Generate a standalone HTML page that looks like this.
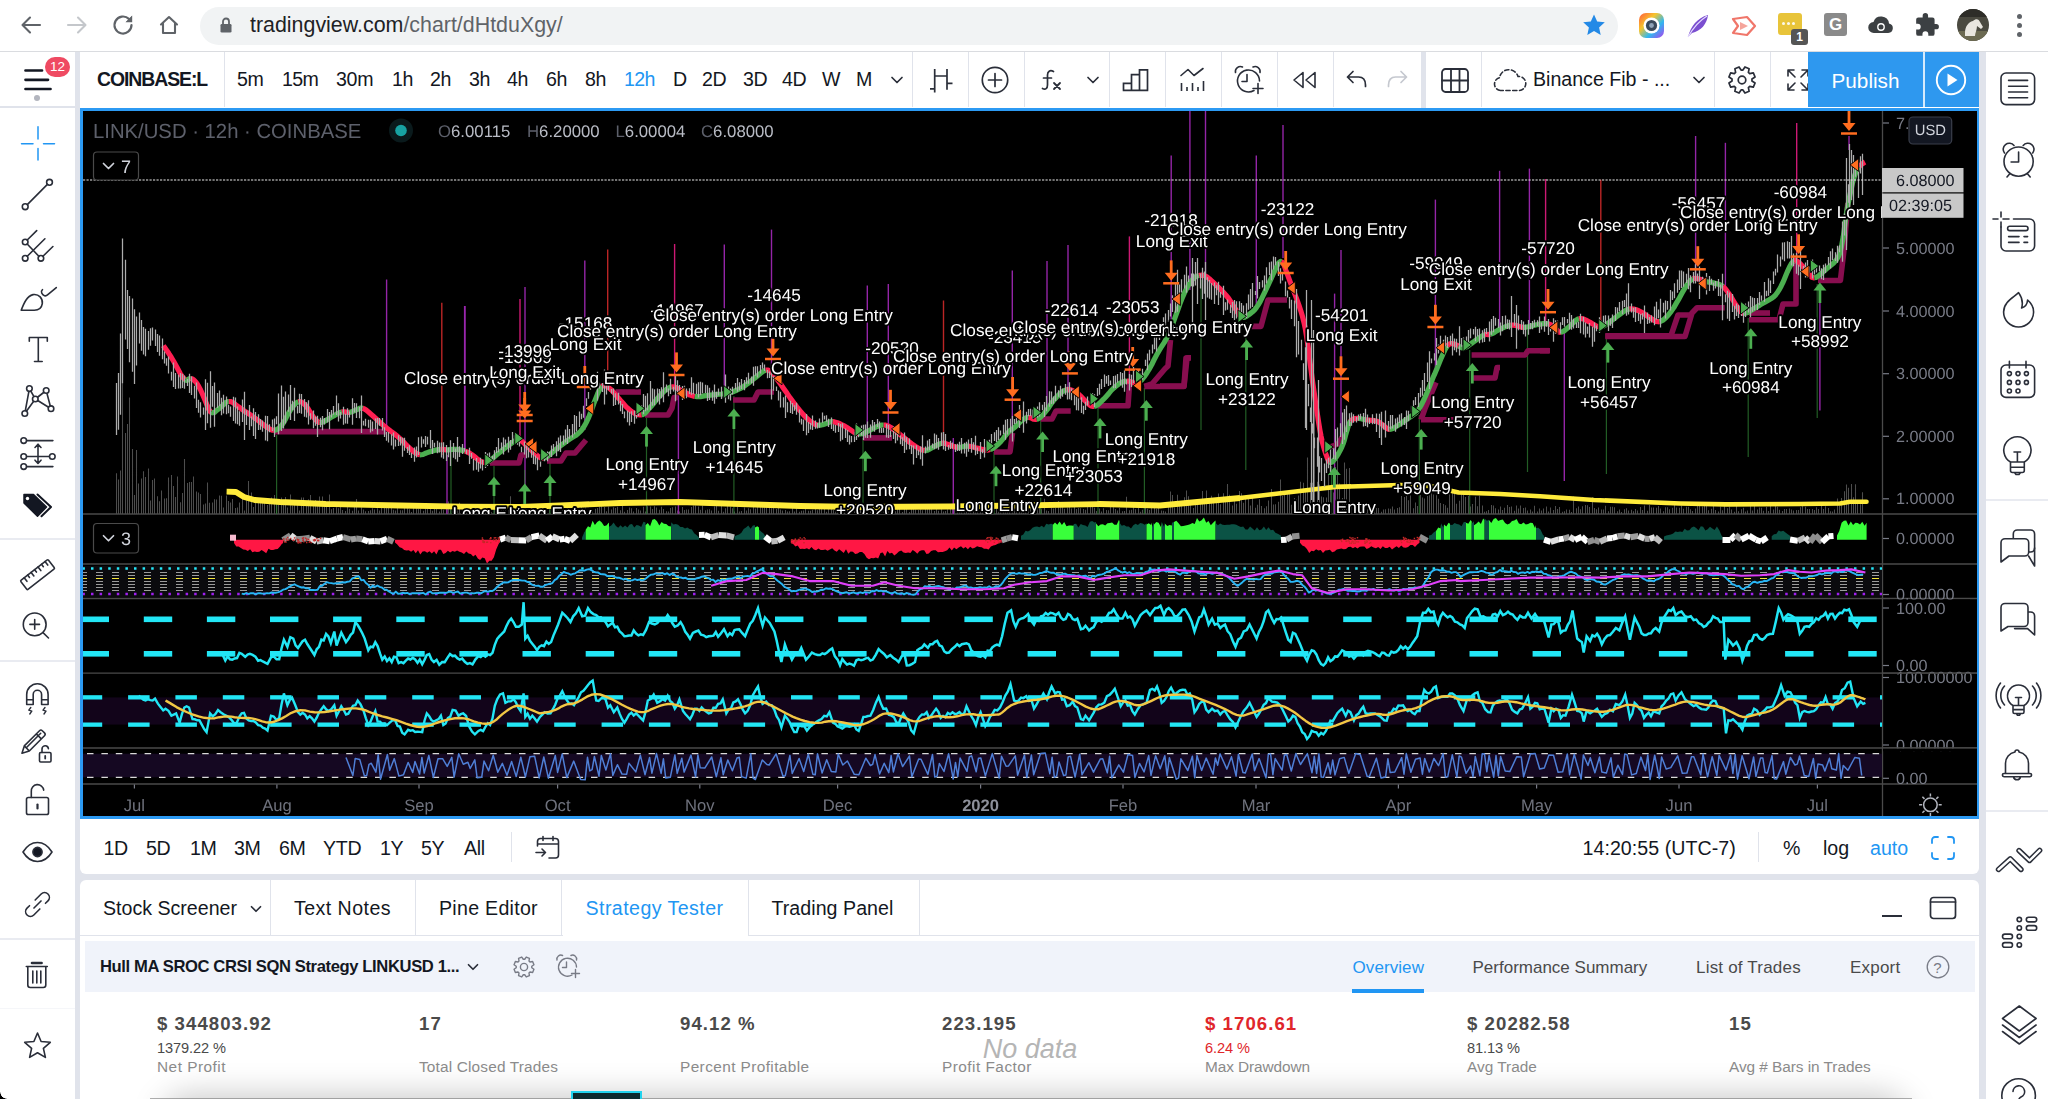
<!DOCTYPE html><html><head><meta charset="utf-8"><title>LINKUSD chart</title><style>

*{box-sizing:border-box;margin:0;padding:0}
html,body{width:2048px;height:1099px;overflow:hidden;background:#e0e3eb;font-family:"Liberation Sans",sans-serif;color:#131722}
.abs{position:absolute}
.t{position:absolute;white-space:nowrap;line-height:1}
#chrome{position:absolute;left:0;top:0;width:2048px;height:52px;background:#fff;border-bottom:1px solid #dadce0}
#url{position:absolute;left:200px;top:7px;width:1418px;height:38px;border-radius:19px;background:#f1f3f4}
#tvtop{position:absolute;left:80px;top:52px;width:1899px;height:56px;background:#fff}
#lefttop{position:absolute;left:0;top:52px;width:75px;height:55px;background:#fff;border-bottom:1px solid #e0e3eb}
#left{position:absolute;left:0;top:108px;width:75px;height:991px;background:#fff}
#right{position:absolute;left:1986px;top:52px;width:62px;height:1047px;background:#fff}
.vsep{position:absolute;top:52px;width:1px;height:55px;background:#e0e3eb}
.hsepL{position:absolute;left:0;width:75px;height:2px;background:#e9ebf1}
.hsepR{position:absolute;left:1986px;width:62px;height:2px;background:#e9ebf1}
#chartborder{position:absolute;left:80px;top:108px;width:1899px;height:711px;background:#2c9af3}
#chartbg{position:absolute;left:83px;top:111px;width:1894px;height:705px;background:#000}
#dates{position:absolute;left:80px;top:819px;width:1899px;height:55px;background:#fff;border-radius:0 0 6px 6px}
#tabs{position:absolute;left:80px;top:880px;width:1899px;height:56px;background:#fff;border-radius:6px 6px 0 0;border-bottom:1px solid #e0e3eb}
#stbody{position:absolute;left:80px;top:936px;width:1899px;height:163px;background:#fff}
#sthead{position:absolute;left:85px;top:941px;width:1890px;height:51px;background:#f0f3fa}
.tb{font-size:19.5px;color:#131722}

</style></head><body><div id="root" style="position:absolute;left:0;top:0;width:2048px;height:1099px;overflow:hidden">
<div id="chrome"><div id="url"></div></div>
<svg class="abs" style="left:19.0px;top:13.0px" width="24" height="24" viewBox="0 0 24 24" fill="none" stroke="#5f6368" stroke-width="2.1" stroke-linecap="round" stroke-linejoin="round"><path d="M21 12H4M11 4.5L3.5 12l7.5 7.5"/></svg>
<svg class="abs" style="left:65.0px;top:13.0px" width="24" height="24" viewBox="0 0 24 24" fill="none" stroke="#c4c7cb" stroke-width="2.1" stroke-linecap="round" stroke-linejoin="round"><path d="M3 12h17M13 4.5l7.5 7.5-7.5 7.5"/></svg>
<svg class="abs" style="left:111.0px;top:13.0px" width="24" height="24" viewBox="0 0 24 24" fill="none" stroke="#5f6368" stroke-width="2.2" stroke-linecap="round" stroke-linejoin="round"><path d="M20.5 12a8.5 8.5 0 1 1-2.6-6.1"/><path d="M21 3v6h-6" fill="#5f6368" stroke="none"/><path d="M21.2 2.5v6.7h-6.7z" fill="#5f6368" stroke="none"/></svg>
<svg class="abs" style="left:157.0px;top:13.0px" width="24" height="24" viewBox="0 0 24 24" fill="none" stroke="#5f6368" stroke-width="2.1" stroke-linecap="round" stroke-linejoin="round"><path d="M4 11.5L12 4l8 7.5M6 10.5V20h12v-9.5"/></svg>
<svg class="abs" style="left:218.0px;top:16.0px" width="16" height="18" viewBox="0 0 16 18" fill="none" stroke="#5f6368" stroke-width="1.6" stroke-linecap="round" stroke-linejoin="round"><rect x="2.5" y="8" width="11" height="8.5" rx="1.3" fill="#5f6368" stroke="none"/><path d="M5 8V5.5a3 3 0 0 1 6 0V8" stroke-width="1.8"/></svg>
<div class="t" style="left:250px;top:25.5px;font-size:21.4px;color:#131722;font-weight:400;transform:translate(0,-50%);"><span style="color:#202124">tradingview.com</span><span style="color:#5f6368">/chart/dHtduXgy/</span></div>
<svg class="abs" style="left:1581.0px;top:12.0px" width="26" height="26" viewBox="0 0 26 26" fill="none" stroke="#2a2e39" stroke-width="1.6" stroke-linecap="round" stroke-linejoin="round"><path d="M13 2.5l3.2 7 7.6.8-5.7 5.1 1.6 7.5L13 19l-6.7 3.9 1.6-7.5L2.2 10.3l7.6-.8z" fill="#2389e6" stroke="none"/></svg>
<svg class="abs" style="left:1638px;top:12px" width="27" height="27" viewBox="0 0 27 27"><defs><linearGradient id="g1" x1="0" y1="0" x2="1" y2="1"><stop offset="0" stop-color="#ff5a3c"/><stop offset=".35" stop-color="#f7c52d"/><stop offset=".65" stop-color="#30b8f0"/><stop offset="1" stop-color="#b03cf0"/></linearGradient></defs><rect x="1" y="1" width="25" height="25" rx="7" fill="url(#g1)"/><circle cx="13.5" cy="13.5" r="8" fill="#fff"/><circle cx="13.5" cy="13.5" r="5.6" fill="#3a4a5c"/><circle cx="13.5" cy="13.5" r="2.4" fill="#8fa3b8"/></svg>
<svg class="abs" style="left:1685px;top:12px" width="26" height="28" viewBox="0 0 26 28"><path d="M3 25C6 14 12 6 23 3c-1 9-7 16-16 18z" fill="#7b4fd0"/><path d="M3 25C8 16 14 9 22 4" stroke="#e6dcff" stroke-width="1.2" fill="none"/></svg>
<svg class="abs" style="left:1729px;top:13px" width="28" height="26" viewBox="0 0 28 26"><path d="M4 6l14-2 8 9-8 9-14-2 5-7z" fill="none" stroke="#f0766a" stroke-width="2.2" stroke-linejoin="round"/><path d="M11 9l8 4-8 4z" fill="#f5a59b"/></svg>
<div class="abs" style="left:1778px;top:13px;width:24px;height:22px;background:#e8c43a;border-radius:3px"></div>
<div class="abs" style="left:1782px;top:22px;width:3px;height:3px;background:#fff;border-radius:50%;box-shadow:5px 0 0 #fff,10px 0 0 #fff;opacity:.9"></div>
<div class="abs" style="left:1791px;top:29px;width:17px;height:16px;background:#555;border-radius:3px;color:#fff;font-size:12px;font-weight:700;text-align:center;line-height:16px">1</div>
<div class="abs" style="left:1824px;top:13px;width:23px;height:23px;background:#8a8a8a;border-radius:3px;color:#fff;font-size:17px;font-weight:700;text-align:center;line-height:23px">G</div>
<svg class="abs" style="left:1867px;top:14px" width="28" height="22" viewBox="0 0 28 22"><path d="M7 19a5.5 5.5 0 0 1-.5-11A8 8 0 0 1 22 9.5a4.8 4.8 0 0 1-.8 9.5z" fill="#3c4043"/><circle cx="14" cy="13" r="3.2" fill="none" stroke="#fff" stroke-width="1.4"/></svg>
<svg class="abs" style="left:1914px;top:12px" width="26" height="26" viewBox="0 0 24 24"><path d="M20.5 11H19V7a2 2 0 0 0-2-2h-4V3.5a2.5 2.5 0 0 0-5 0V5H4a2 2 0 0 0-2 2v3.8h1.5a2.7 2.7 0 0 1 0 5.4H2V20a2 2 0 0 0 2 2h3.8v-1.5a2.7 2.7 0 0 1 5.4 0V22H17a2 2 0 0 0 2-2v-4h1.5a2.5 2.5 0 0 0 0-5z" fill="#3c4043"/></svg>
<svg class="abs" style="left:1957px;top:9px" width="32" height="32" viewBox="0 0 32 32"><defs><clipPath id="av"><circle cx="16" cy="16" r="16"/></clipPath></defs><g clip-path="url(#av)"><rect width="32" height="32" fill="#4b4a40"/><rect y="22" width="32" height="10" fill="#6c6a52"/><path d="M8 24c0-6 3-11 8-12 3-3 6-2 7 1l3 5-2 2-4-3c0 4-2 7-2 10H8z" fill="#e9e6df"/><rect y="0" width="32" height="8" fill="#2e2d28"/></g></svg>
<div class="abs" style="left:2016.5px;top:14px;width:5px;height:5px;border-radius:50%;background:#5f6368"></div><div class="abs" style="left:2016.5px;top:23px;width:5px;height:5px;border-radius:50%;background:#5f6368"></div><div class="abs" style="left:2016.5px;top:32px;width:5px;height:5px;border-radius:50%;background:#5f6368"></div>
<div id="lefttop"></div><div id="tvtop"></div>
<svg class="abs" style="left:21.0px;top:67.0px" width="32" height="26" viewBox="0 0 32 26" fill="none" stroke="#131722" stroke-width="1.6" stroke-linecap="round" stroke-linejoin="round"><path d="M4.500 3.500H21M4.500 12.800H27M4.500 22H29.500" stroke-width="2.700"/></svg>
<div class="abs" style="left:34px;top:95px;width:6px;height:6px;border-radius:50%;background:#b2b5be"></div>
<div class="abs" style="left:45px;top:57px;width:25px;height:20px;border-radius:10px;background:#ef4a62;color:#fff;font-size:13.5px;text-align:center;line-height:20px">12</div>
<div class="t" style="left:97px;top:80px;font-size:19.4px;color:#131722;font-weight:700;letter-spacing:-1.05px;transform:translate(0,-50%);">COINBASE:L</div>
<div class="vsep" style="left:224.0px"></div>
<div class="vsep" style="left:911.5px"></div>
<div class="vsep" style="left:967.5px"></div>
<div class="vsep" style="left:1023.5px"></div>
<div class="vsep" style="left:1108.5px"></div>
<div class="vsep" style="left:1164.5px"></div>
<div class="vsep" style="left:1220.5px"></div>
<div class="vsep" style="left:1276.5px"></div>
<div class="vsep" style="left:1332.5px"></div>
<div class="vsep" style="left:1481.0px"></div>
<div class="vsep" style="left:1714.0px"></div>
<div class="vsep" style="left:1769.8px"></div>
<div class="abs" style="left:1421px;top:52px;width:5px;height:56px;background:#e0e3eb"></div>
<div class="t" style="left:237px;top:80px;font-size:19.6px;color:#131722;font-weight:400;letter-spacing:-0.3px;transform:translate(0,-50%);">5m</div>
<div class="t" style="left:282px;top:80px;font-size:19.6px;color:#131722;font-weight:400;letter-spacing:-0.6px;transform:translate(0,-50%);">15m</div>
<div class="t" style="left:336px;top:80px;font-size:19.6px;color:#131722;font-weight:400;letter-spacing:-0.3px;transform:translate(0,-50%);">30m</div>
<div class="t" style="left:392px;top:80px;font-size:19.6px;color:#131722;font-weight:400;letter-spacing:-0.3px;transform:translate(0,-50%);">1h</div>
<div class="t" style="left:430px;top:80px;font-size:19.6px;color:#131722;font-weight:400;letter-spacing:-0.3px;transform:translate(0,-50%);">2h</div>
<div class="t" style="left:469px;top:80px;font-size:19.6px;color:#131722;font-weight:400;letter-spacing:-0.3px;transform:translate(0,-50%);">3h</div>
<div class="t" style="left:507px;top:80px;font-size:19.6px;color:#131722;font-weight:400;letter-spacing:-0.3px;transform:translate(0,-50%);">4h</div>
<div class="t" style="left:546px;top:80px;font-size:19.6px;color:#131722;font-weight:400;letter-spacing:-0.3px;transform:translate(0,-50%);">6h</div>
<div class="t" style="left:585px;top:80px;font-size:19.6px;color:#131722;font-weight:400;letter-spacing:-0.3px;transform:translate(0,-50%);">8h</div>
<div class="t" style="left:624px;top:80px;font-size:19.6px;color:#2196f3;font-weight:400;letter-spacing:-0.6px;transform:translate(0,-50%);">12h</div>
<div class="t" style="left:673px;top:80px;font-size:19.6px;color:#131722;font-weight:400;letter-spacing:-0.3px;transform:translate(0,-50%);">D</div>
<div class="t" style="left:702px;top:80px;font-size:19.6px;color:#131722;font-weight:400;letter-spacing:-0.3px;transform:translate(0,-50%);">2D</div>
<div class="t" style="left:743px;top:80px;font-size:19.6px;color:#131722;font-weight:400;letter-spacing:-0.3px;transform:translate(0,-50%);">3D</div>
<div class="t" style="left:782px;top:80px;font-size:19.6px;color:#131722;font-weight:400;letter-spacing:-0.3px;transform:translate(0,-50%);">4D</div>
<div class="t" style="left:822px;top:80px;font-size:19.6px;color:#131722;font-weight:400;letter-spacing:-0.3px;transform:translate(0,-50%);">W</div>
<div class="t" style="left:856px;top:80px;font-size:19.6px;color:#131722;font-weight:400;letter-spacing:-0.3px;transform:translate(0,-50%);">M</div>
<svg class="abs" style="left:887.0px;top:73.0px" width="20" height="14" viewBox="0 0 20 14" fill="none" stroke="#2a2e39" stroke-width="1.7" stroke-linecap="round" stroke-linejoin="round"><path d="M5 4.5L10 9.5L15 4.5"/></svg>
<svg class="abs" style="left:925px;top:64px" width="34" height="34" viewBox="925 64 34 34" fill="none" stroke="#2a2e39" stroke-width="1.700"><path d="M934.700 69V92.500M930 88.900H934.700M934.700 76H947M947 69V89.700M947 83.400H952.500"/></svg>
<svg class="abs" style="left:980.0px;top:65.0px" width="30" height="30" viewBox="0 0 30 30" fill="none" stroke="#2a2e39" stroke-width="1.7" stroke-linecap="round" stroke-linejoin="round"><circle cx="15" cy="15" r="12.7"/><path d="M15 8.5v13M8.5 15h13"/></svg>
<svg class="abs" style="left:1036.0px;top:65.0px" width="30" height="30" viewBox="0 0 30 30" fill="none" stroke="#2a2e39" stroke-width="1.7" stroke-linecap="round" stroke-linejoin="round"><path d="M17.5 6.5c-3.5-2-6 0-6 3.5v10c0 3.5-2 5-5 3.5M7.5 13h8"/><path d="M18 18l6 6M24 18l-6 6" stroke-width="1.8"/></svg>
<svg class="abs" style="left:1083.3px;top:73.0px" width="20" height="14" viewBox="0 0 20 14" fill="none" stroke="#2a2e39" stroke-width="1.7" stroke-linecap="round" stroke-linejoin="round"><path d="M5 4.5L10 9.5L15 4.5"/></svg>
<svg class="abs" style="left:1118px;top:64px" width="36" height="32" viewBox="1118 64 36 32" fill="none" stroke="#2a2e39" stroke-width="1.700" stroke-linejoin="miter"><path d="M1123.500 90.300V83.300H1131.500V90.300M1131.500 83.300V74.700H1139.500V90.300M1139.500 74.700V69.800H1147.500V90.300M1122.700 90.300H1148.300"/></svg>
<svg class="abs" style="left:1178.0px;top:66.0px" width="30" height="28" viewBox="0 0 30 28" fill="none" stroke="#2a2e39" stroke-width="1.6" stroke-linecap="round" stroke-linejoin="round"><path d="M3 9.5l7-6 6 6 9-7"/><path d="M3.5 17v8M9 21v4M14.5 17v8M20 21v4M25.5 15v10" stroke-linecap="butt"/></svg>
<svg class="abs" style="left:1231.0px;top:64.0px" width="34" height="32" viewBox="0 0 34 32" fill="none" stroke="#2a2e39" stroke-width="1.6" stroke-linecap="round" stroke-linejoin="round"><path d="M23 26.5a11 11 0 1 1 5.5-9.5"/><path d="M16 10.5v7h-5"/><path d="M4.5 8.5a5 5 0 0 1 7-5.5M29 8.5a5 5 0 0 0-7-5.5"/><path d="M27 19.500v10M22 24.5h10"/></svg>
<svg class="abs" style="left:1291.0px;top:69.0px" width="28" height="22" viewBox="0 0 28 22" fill="none" stroke="#2a2e39" stroke-width="1.6" stroke-linecap="round" stroke-linejoin="round"><path d="M12 3.5L3 11l9 7.500zM24 3.5L15 11l9 7.500z"/></svg>
<svg class="abs" style="left:1345.0px;top:69.0px" width="24" height="20" viewBox="0 0 24 20" fill="none" stroke="#2a2e39" stroke-width="1.7" stroke-linecap="round" stroke-linejoin="round"><path d="M8 2.5L2.500 8l5.500 5.500M2.500 8h11c4.500 0 7 3 7 8v1.500"/></svg>
<svg class="abs" style="left:1385.0px;top:69.0px" width="24" height="20" viewBox="0 0 24 20" fill="none" stroke="#c5c8cf" stroke-width="1.7" stroke-linecap="round" stroke-linejoin="round"><path d="M16 2.5L21.500 8l-5.500 5.500M21.500 8h-11c-4.500 0-7 3-7 8v1.500"/></svg>
<svg class="abs" style="left:1439.5px;top:66.5px" width="30" height="27" viewBox="0 0 30 27" fill="none" stroke="#2a2e39" stroke-width="1.8" stroke-linecap="round" stroke-linejoin="round"><rect x="2" y="2" width="26" height="23" rx="3.5"/><path d="M2 13.500h26M11 2v23M19.500 2v23"/></svg>
<svg class="abs" style="left:1491.0px;top:67.0px" width="38" height="26" viewBox="0 0 38 26" fill="none" stroke="#2a2e39" stroke-width="1.6" stroke-linecap="round" stroke-linejoin="round"><path d="M9.500 23.500a6.500 6.500 0 0 1-1-12.800A9.500 9.500 0 0 1 27 9.500a7 7 0 0 1 1.500 14z" stroke-dasharray="4.200 2.600"/></svg>
<div class="t" style="left:1533px;top:80px;font-size:19.6px;color:#131722;font-weight:400;transform:translate(0,-50%);">Binance Fib - ...</div>
<svg class="abs" style="left:1689.0px;top:73.0px" width="20" height="14" viewBox="0 0 20 14" fill="none" stroke="#2a2e39" stroke-width="1.7" stroke-linecap="round" stroke-linejoin="round"><path d="M5 4.5L10 9.5L15 4.5"/></svg>
<svg class="abs" style="left:1727.2px;top:65.0px" width="30" height="30" viewBox="0 0 30 30" fill="none" stroke="#2a2e39" stroke-width="1.7" stroke-linecap="round" stroke-linejoin="round"><circle cx="15" cy="15" r="3.800"/><path d="M28.07 17.96L26.33 22.15L22.70 21.39L21.39 22.70L22.15 26.33L17.96 28.07L15.93 24.96L14.07 24.96L12.04 28.07L7.85 26.33L8.61 22.70L7.30 21.39L3.67 22.15L1.93 17.96L5.04 15.93L5.04 14.07L1.93 12.04L3.67 7.85L7.30 8.61L8.61 7.30L7.85 3.67L12.04 1.93L14.07 5.04L15.93 5.04L17.96 1.93L22.15 3.67L21.39 7.30L22.70 8.61L26.33 7.85L28.07 12.04L24.96 14.07L24.96 15.93Z" stroke-linejoin="round"/></svg>
<svg class="abs" style="left:1784.5px;top:67.0px" width="26" height="26" viewBox="0 0 26 26" fill="none" stroke="#2a2e39" stroke-width="1.6" stroke-linecap="round" stroke-linejoin="round"><path d="M3 9V3h6M3 3l7 7M17 3h6v6M23 3l-7 7M3 17v6h6M3 23l7-7M23 17v6h-6M23 23l-7-7"/></svg>
<div class="abs" style="left:1808px;top:52px;width:171px;height:55px;background:#2e98ef"></div>
<div class="abs" style="left:1923px;top:52px;width:1.5px;height:55px;background:#d5eafc"></div>
<div class="t" style="left:1865.5px;top:80.5px;font-size:20.7px;color:#fff;font-weight:400;transform:translate(-50%,-50%);">Publish</div>
<svg class="abs" style="left:1934.0px;top:62.5px" width="34" height="34" viewBox="0 0 34 34" fill="none" stroke="#fff" stroke-width="1.6" stroke-linecap="round" stroke-linejoin="round"><circle cx="17" cy="17" r="14.2" stroke-width="1.9"/><path d="M13.500 10.500v13l10-6.500z" fill="#fff" stroke="none"/></svg>
<div id="left"></div>
<div class="hsepL" style="top:538px"></div>
<div class="hsepL" style="top:660px"></div>
<div class="hsepL" style="top:938px"></div>
<div class="hsepL" style="top:1008px;height:1px;background:#f5f6f9"></div>
<svg class="abs" style="left:0;top:108px" width="75" height="991" viewBox="0 108 75 991"><g fill="none" stroke="#2196f3" stroke-width="1.5" stroke-linecap="round" stroke-linejoin="round"><path d="M21.500 143.700H33M43.500 143.700H54.500M38 126.800V139M38 148.500V160"/></g><g fill="none" stroke="#2a2e39" stroke-width="1.6" stroke-linecap="round" stroke-linejoin="round"><circle cx="25.200" cy="206.700" r="2.900"/><circle cx="49.500" cy="182.300" r="2.900"/><path d="M27.300 204.600L47.400 184.400"/></g><g fill="none" stroke="#2a2e39" stroke-width="1.6" stroke-linecap="round" stroke-linejoin="round"><circle cx="25.200" cy="242" r="2.800"/><circle cx="25.200" cy="258.300" r="2.800"/><circle cx="40.900" cy="258.300" r="2.800"/><path d="M27.200 240L36.700 230.600M27.200 244L38.900 256.300M27.200 256.300L44.900 238.800M42.900 256.300L52.900 246.500"/></g><g fill="none" stroke="#2a2e39" stroke-width="1.6" stroke-linecap="round" stroke-linejoin="round"><path d="M21.200 310.200C24 303 27 296 33 294.600c6-1 10 4 9.300 9-0.700 4.500-4 6.600-8 6.600z"/><path d="M42.500 289.700c-2.300 1.800-.5 5.200 2 6 1.300.400 2.400-.200 3.300-1L56.300 287.600"/></g><g fill="none" stroke="#2a2e39" stroke-width="1.6" stroke-linecap="round" stroke-linejoin="round"><path d="M29.300 341.200V337.500H47.300V341.200M38.300 337.500V361.500M34.500 361.500H42.200"/></g><g fill="none" stroke="#2a2e39" stroke-width="1.6" stroke-linecap="round" stroke-linejoin="round"><path d="M29.4 388.6L24.8 413.5M29.4 388.6L35.3 399M35.3 399L24.8 413.5M35.3 399L46.2 390.5M46.2 390.5L51 408.7M35.3 399L51 408.7"/><circle cx="29.4" cy="388.6" r="2.800" fill="#fff"/><circle cx="46.2" cy="390.5" r="2.800" fill="#fff"/><circle cx="35.3" cy="399" r="2.800" fill="#fff"/><circle cx="51" cy="408.7" r="2.800" fill="#fff"/><circle cx="24.8" cy="413.5" r="2.800" fill="#fff"/></g><g fill="none" stroke="#2a2e39" stroke-width="1.6" stroke-linecap="round" stroke-linejoin="round"><path d="M26.500 440.600H52.900M26.500 456.500H49.500M26.500 466.600H52.900M38 445V462.500M35 447.500L38 444.200L41 447.500M35 460.200L38 463.500L41 460.200"/><circle cx="23.700" cy="440.600" r="2.800" fill="#fff"/><circle cx="23.700" cy="456.500" r="2.800" fill="#fff"/><circle cx="23.700" cy="466.600" r="2.800" fill="#fff"/><circle cx="52.300" cy="456.500" r="2.800" fill="#fff"/></g><path d="M24 494.500h9.500l13 12.500-9 9.200-13.500-13.200z" fill="#131722" stroke="#131722" stroke-width="1.500" stroke-linejoin="round"/><circle cx="27.500" cy="498.500" r="1.700" fill="#fff"/><path d="M37.500 494.500l13.500 12.500-9.500 9.200" fill="none" stroke="#131722" stroke-width="2" stroke-linejoin="round" stroke-linecap="round"/><g fill="none" stroke="#2a2e39" stroke-width="1.6" stroke-linecap="round" stroke-linejoin="round"><g transform="rotate(-38 37.400 574.600)"><rect x="20" y="569" width="35" height="11.500" rx="1.200"/><path d="M25 569v4.500M29.400 569v3M33.800 569v4.500M38.200 569v3M42.600 569v4.500M47 569v3M51.400 569v4.500"/></g></g><g fill="none" stroke="#2a2e39" stroke-width="1.6" stroke-linecap="round" stroke-linejoin="round"><circle cx="34.700" cy="624.400" r="11.400"/><path d="M34.700 619.600v9.600M29.900 624.400h9.600M43 632.700l5.500 5.300"/></g><g fill="none" stroke="#2a2e39" stroke-width="1.6" stroke-linecap="round" stroke-linejoin="round"><path d="M26.700 704.500v-10a10.700 10.700 0 0 1 21.400 0v10h-6.500v-10a4.200 4.200 0 0 0-8.400 0v10zM26.700 699.800h6.500M41.600 699.800h6.500"/><path d="M30.800 707.500l-2 2.700 3 1-2 2.800M45 707.500l-2 2.700 3 1-2 2.800" stroke-width="1.400"/></g><g fill="none" stroke="#2a2e39" stroke-width="1.6" stroke-linecap="round" stroke-linejoin="round"><path d="M22 753.200l2.300-7.300 15.200-15.200a2 2 0 0 1 2.800 0l2.200 2.200a2 2 0 0 1 0 2.800L29.300 751zM24.300 745.900l5 5.100M36.300 733.900l5 5M27 747l13.700-13.700"/><rect x="39.500" y="752.500" width="11.500" height="9.500" rx="1.200" fill="#fff"/><path d="M42 752.500v-3.200a3.200 3.200 0 0 1 6.400-0.600"/><path d="M45.200 756v2.500" stroke-width="1.800"/></g><g fill="none" stroke="#2a2e39" stroke-width="1.6" stroke-linecap="round" stroke-linejoin="round"><rect x="26.500" y="797.500" width="22" height="17" rx="1.800"/><path d="M31.300 797.500v-6a6.200 6.200 0 0 1 12.400-1.300"/><path d="M37.500 804.500v4" stroke-width="2.200"/></g><g fill="none" stroke="#2a2e39" stroke-width="1.6" stroke-linecap="round" stroke-linejoin="round"><path d="M23 852c4-6.500 9-9.500 14.500-9.500s10.500 3 14.500 9.500c-4 6.500-9 9.500-14.500 9.500s-10.500-3-14.500-9.500z"/><circle cx="37.500" cy="852" r="4.600" fill="#131722"/></g><g fill="none" stroke="#2a2e39" stroke-width="1.6" stroke-linecap="round" stroke-linejoin="round"><g transform="translate(37.500 904.500) rotate(-45)"><path d="M1.500 -4.800H10a4.800 4.800 0 0 1 0 9.600H6.500M-1.500 4.800H-10a4.800 4.800 0 0 1 0-9.600H-6.500M-5 0H5"/></g></g><g fill="none" stroke="#2a2e39" stroke-width="1.6" stroke-linecap="round" stroke-linejoin="round"><path d="M27.800 966.500h18v18.500a2.500 2.500 0 0 1-2.500 2.500h-13a2.500 2.500 0 0 1-2.500-2.500zM26.300 966.500h21M32.800 971v12M36.800 971v12M40.800 971v12"/><path d="M32 963h9.600" stroke-width="2.600"/></g><g fill="none" stroke="#2a2e39" stroke-width="1.6" stroke-linecap="round" stroke-linejoin="round"><path d="M37.5 1033.0L41.1 1041.5L50.3 1042.3L43.4 1048.4L45.4 1057.4L37.5 1052.7L29.6 1057.4L31.6 1048.4L24.7 1042.3L33.9 1041.5Z"/></g></svg>
<div id="right"></div>
<div class="hsepR" style="top:499px"></div>
<div class="hsepR" style="top:810px"></div>
<svg class="abs" style="left:1986px;top:52px" width="62" height="1047" viewBox="1986 52 62 1047"><g fill="none" stroke="#2a2e39" stroke-width="1.6" stroke-linecap="round" stroke-linejoin="round"><rect x="2001" y="73" width="33.600" height="31.600" rx="5"/><path d="M2008.600 80.400h19M2008.600 86.200h19M2008.600 92h19M2008.600 97.800h19"/></g><g fill="none" stroke="#2a2e39" stroke-width="1.6" stroke-linecap="round" stroke-linejoin="round"><circle cx="2018.600" cy="161.600" r="14.600"/><path d="M2018.600 152v10h-7.500"/><path d="M2004.500 153a6 6 0 0 1 9.500-7.500M2032.700 153a6 6 0 0 0-9.500-7.500M2010 173.500l-3 3.500M2027.200 173.500l3 3.500"/></g><g fill="none" stroke="#2a2e39" stroke-width="1.6" stroke-linecap="round" stroke-linejoin="round"><path d="M2013.500 219h16.100a5 5 0 0 1 5 5v22a5 5 0 0 1-5 5h-23.600a5 5 0 0 1-5-5v-19"/><path d="M1993 219h5M2003 219h6M2001 212v5M2001 222v5"/><rect x="2007.600" y="226.200" width="20.400" height="4.400" rx="2.200"/><path d="M2008.600 236.600h10.400M2024 236.600h3.600M2008.600 242.400h10.400M2024 242.400h3.600"/></g><g fill="none" stroke="#2a2e39" stroke-width="1.6" stroke-linecap="round" stroke-linejoin="round"><path d="M2018.600 292.600c-5 5-15 9-15 19.400a15 15 0 0 0 30 0c0-4.500-2-8.500-6-12-0.300 4-2.500 7-6 8 1.500-5 0.500-10.500-3-15.400z"/></g><g fill="none" stroke="#2a2e39" stroke-width="1.6" stroke-linecap="round" stroke-linejoin="round"><rect x="2001" y="365" width="33.600" height="32.400" rx="5"/><path d="M2009.400 361.400v6.600M2026 361.400v6.600"/><circle cx="2009.4" cy="373.6" r="2"/><circle cx="2018" cy="373.6" r="2"/><circle cx="2026.4" cy="373.6" r="2"/><circle cx="2009.4" cy="382.4" r="2"/><circle cx="2018" cy="382.4" r="2"/><circle cx="2026.4" cy="382.4" r="2"/><circle cx="2009.4" cy="391" r="2"/><circle cx="2018" cy="391" r="2"/></g><g fill="none" stroke="#2a2e39" stroke-width="1.6" stroke-linecap="round" stroke-linejoin="round"><path d="M2010.500 462a13.600 13.600 0 1 1 13.800 0v8.500a2 2 0 0 1-2 2h-9.800a2 2 0 0 1-2-2zM2010.500 462h13.800M2010.500 467.300h13.800M2014.500 472.500l1.500 2h3l1.500-2M2014 452h6.600M2017.400 452v10"/></g><g fill="none" stroke="#2a2e39" stroke-width="1.6" stroke-linecap="round" stroke-linejoin="round"><path d="M2013.300 538.500v-4.500a4 4 0 0 1 4-4h13.300a4 4 0 0 1 4 4v14a4 4 0 0 1-4 4h-2"/><path d="M2028.600 556l6 10v-18"/><path d="M2001 562v-19.300a4 4 0 0 1 4-4h19.700a4 4 0 0 1 4 4v9.300a4 4 0 0 1-4 4h-15.700z" fill="#fff"/></g><g fill="none" stroke="#2a2e39" stroke-width="1.6" stroke-linecap="round" stroke-linejoin="round"><path d="M2028 612h2.600a4 4 0 0 1 4 4v19l-7-6.400h-13"/><path d="M2001 631v-23.500a4 4 0 0 1 4-4h19a4 4 0 0 1 4 4v15a4 4 0 0 1-4 4h-16z" fill="#fff"/></g><g fill="none" stroke="#2a2e39" stroke-width="1.6" stroke-linecap="round" stroke-linejoin="round"><path d="M2013 705.500a11 11 0 1 1 11 0v6.500a1.500 1.500 0 0 1-1.500 1.500h-8a1.500 1.500 0 0 1-1.500-1.500zM2013 705.500h11M2013 709.600h11M2016.500 713.500l1 1.800h2l1-1.800M2015.500 697.500h6M2018.500 697.500v8"/><path d="M2004.500 686a14 14 0 0 0 0 19M2000.500 683a20 20 0 0 0 0 25M2032.500 686a14 14 0 0 1 0 19M2036.500 683a20 20 0 0 1 0 25"/></g><g fill="none" stroke="#2a2e39" stroke-width="1.6" stroke-linecap="round" stroke-linejoin="round"><path d="M2005.500 773.500v-10a11.500 11.500 0 0 1 9.500-11.500 2 2 0 0 1 4 0 11.500 11.500 0 0 1 9.500 11.500v10M2004 773.500h26a1.600 1.600 0 0 1 0 3.200h-26a1.600 1.600 0 0 1 0-3.200zM2013.500 777a3.600 3.600 0 0 0 7 0"/></g><g fill="none" stroke-linecap="round" stroke-linejoin="round"><path d="M1998.500 869.500l11.800-10.700 10.700 10.700M2019 850.500l10.500 10 10.200-10.200" stroke="#2a2e39" stroke-width="5.400"/><path d="M1998.500 869.500l11.800-10.700 10.700 10.700M2019 850.500l10.500 10 10.200-10.200" stroke="#fff" stroke-width="2.400"/></g><g fill="none" stroke="#2a2e39" stroke-width="1.6" stroke-linecap="round" stroke-linejoin="round"><circle cx="2019.300" cy="919.6" r="2.200"/><circle cx="2019.300" cy="927.9" r="2.200"/><circle cx="2019.300" cy="936.4" r="2.200"/><circle cx="2019.300" cy="944.9" r="2.200"/><rect x="2026.300" y="917.3000000000001" width="10.400" height="4.600" rx="2.300"/><rect x="2026.300" y="925.6" width="10.400" height="4.600" rx="2.300"/><rect x="2002.500" y="934.1" width="10" height="4.600" rx="2.300"/><rect x="2002.500" y="942.6" width="10" height="4.600" rx="2.300"/></g><g fill="none" stroke="#2a2e39" stroke-width="1.6" stroke-linecap="round" stroke-linejoin="round"><path d="M2019.300 1006l16.800 12.500-16.800 12.500-16.800-12.500zM2002.500 1025l16.800 12.500 16.800-12.500M2002.500 1031.500l16.800 12.500 16.800-12.500"/></g><g fill="none" stroke="#2a2e39" stroke-width="1.6" stroke-linecap="round" stroke-linejoin="round"><circle cx="2018.600" cy="1095.500" r="16.800"/><path d="M2013 1091.500a5.800 5.800 0 1 1 8 5.500c-1.800 1-2.400 2-2.400 4"/></g></svg>
<div id="chartborder"></div><div id="chartbg"></div>
<svg class="abs" style="left:80px;top:108px;will-change:transform" width="1899" height="711" viewBox="80 108 1899 711" font-family="'Liberation Sans', sans-serif" text-rendering="geometricPrecision">
<defs><clipPath id="cpMain"><rect x="83" y="111" width="1799" height="403"/></clipPath><clipPath id="cpAxis"><rect x="1883" y="111" width="94" height="673"/></clipPath></defs>
<path d="M83 514H1977" stroke="#4a4a4a" stroke-width="1.300"/>
<path d="M83 564H1977" stroke="#4a4a4a" stroke-width="1.300"/>
<path d="M83 598.5H1977" stroke="#4a4a4a" stroke-width="1.300"/>
<path d="M83 673.2H1977" stroke="#4a4a4a" stroke-width="1.300"/>
<path d="M83 748H1977" stroke="#4a4a4a" stroke-width="1.300"/>
<path d="M83 784H1977" stroke="#4a4a4a" stroke-width="1.300"/>
<path d="M1882.500 111V816" stroke="#4a4a4a" stroke-width="1.300"/>
<g clip-path="url(#cpMain)">
<path d="M116.5 514V473.2M118.5 514V479.6M120.5 514V470.6M122.5 514V366.5M125.5 514V433.0M127.5 514V424.0M129.5 514V397.4M132.5 514V448.9M134.5 514V495.0M136.5 514V449.9M138.5 514V483.6M141.5 514V478.5M143.5 514V471.3M145.5 514V477.1M148.5 514V468.6M150.5 514V500.5M152.5 514V479.9M154.5 514V478.4M157.5 514V496.3M159.5 514V501.3M161.5 514V490.4M164.5 514V498.5M166.5 514V498.3M168.5 514V477.5M171.5 514V475.1M173.5 514V486.1M175.5 514V497.1M177.5 514V476.5M180.5 514V502.2M182.5 514V493.1M184.5 514V458.9M187.5 514V483.0M189.5 514V482.1M191.5 514V481.9M193.5 514V476.5M196.5 514V491.5M198.5 514V492.5M200.5 514V494.1M203.5 514V504.4M205.5 514V503.5M207.5 514V482.5M209.5 514V502.8M212.5 514V502.5M214.5 514V499.3M216.5 514V499.5M219.5 514V495.6M221.5 514V495.8M223.5 514V507.6M226.5 514V495.5M228.5 514V501.1M230.5 514V502.6M232.5 514V498.9M235.5 514V508.1M237.5 514V507.4M239.5 514V502.6M242.5 514V494.3M244.5 514V510.5M246.5 514V499.0M248.5 514V481.1M251.5 514V492.5M253.5 514V507.0M255.5 514V500.3M258.5 514V499.9M260.5 514V499.4M262.5 514V501.9M264.5 514V498.9M267.5 514V505.1M269.5 514V500.6M271.5 514V497.5M274.5 514V495.1M276.5 514V503.3M278.5 514V504.6M281.5 514V497.5M283.5 514V499.9M285.5 514V497.1M287.5 514V507.4M290.5 514V494.4M292.5 514V505.6M294.5 514V505.1M297.5 514V501.6M299.5 514V510.5M301.5 514V497.4M303.5 514V497.6M306.5 514V502.2M308.5 514V499.3M310.5 514V494.9M313.5 514V502.0M315.5 514V500.1M317.5 514V501.5M319.5 514V496.6M322.5 514V496.5M324.5 514V501.3M326.5 514V502.4M329.5 514V494.5M331.5 514V509.2M333.5 514V508.1M336.5 514V507.2M338.5 514V508.2M340.5 514V505.3M342.5 514V510.1M345.5 514V511.1M347.5 514V506.3M349.5 514V508.7M352.5 514V510.7M354.5 514V505.5M356.5 514V499.1M358.5 514V510.6M361.5 514V507.2M363.5 514V509.5M365.5 514V511.3M368.5 514V511.1M370.5 514V510.2M372.5 514V508.3M374.5 514V509.4M377.5 514V508.3M379.5 514V510.6M381.5 514V507.5M384.5 514V506.0M386.5 514V506.0M388.5 514V506.8M391.5 514V505.7M393.5 514V509.8M395.5 514V510.5M397.5 514V505.8M400.5 514V510.3M402.5 514V510.2M404.5 514V506.2M407.5 514V506.5M409.5 514V509.2M411.5 514V511.9M413.5 514V507.2M416.5 514V505.2M418.5 514V508.5M420.5 514V508.5M423.5 514V510.7M425.5 514V508.5M427.5 514V508.1M430.5 514V508.0M432.5 514V510.7M434.5 514V506.1M436.5 514V505.5M439.5 514V511.6M441.5 514V508.8M443.5 514V509.7M446.5 514V508.4M448.5 514V501.6M450.5 514V507.1M452.5 514V510.7M455.5 514V506.8M457.5 514V510.6M459.5 514V502.8M462.5 514V505.7M464.5 514V507.1M466.5 514V507.6M468.5 514V507.8M471.5 514V505.1M473.5 514V510.2M475.5 514V506.8M478.5 514V506.3M480.5 514V505.7M482.5 514V507.1M485.5 514V506.6M487.5 514V506.9M489.5 514V509.6M491.5 514V511.9M494.5 514V507.5M496.5 514V510.4M498.5 514V507.3M501.5 514V507.4M503.5 514V508.3M505.5 514V505.0M507.5 514V507.1M510.5 514V496.3M512.5 514V507.7M514.5 514V510.2M517.5 514V511.6M519.5 514V509.4M521.5 514V510.2M523.5 514V508.1M526.5 514V505.2M528.5 514V505.0M530.5 514V506.3M533.5 514V507.8M535.5 514V511.7M537.5 514V510.9M540.5 514V510.8M542.5 514V507.7M544.5 514V505.4M546.5 514V508.3M549.5 514V509.4M551.5 514V507.4M553.5 514V510.0M556.5 514V505.9M558.5 514V510.3M560.5 514V510.9M562.5 514V509.3M565.5 514V506.8M567.5 514V505.1M569.5 514V511.5M572.5 514V509.0M574.5 514V505.2M576.5 514V508.3M578.5 514V506.9M581.5 514V505.1M583.5 514V507.8M585.5 514V507.6M588.5 514V510.6M590.5 514V508.3M592.5 514V508.9M595.5 514V508.8M597.5 514V507.9M599.5 514V506.6M601.5 514V505.0M604.5 514V506.9M606.5 514V511.2M608.5 514V506.5M611.5 514V509.5M613.5 514V507.2M615.5 514V507.9M617.5 514V506.7M620.5 514V510.3M622.5 514V505.6M624.5 514V511.7M627.5 514V510.1M629.5 514V507.6M631.5 514V508.2M633.5 514V511.4M636.5 514V508.1M638.5 514V509.4M640.5 514V510.5M643.5 514V506.8M645.5 514V511.5M647.5 514V506.3M650.5 514V506.6M652.5 514V509.0M654.5 514V506.3M656.5 514V507.4M659.5 514V509.7M661.5 514V506.8M663.5 514V509.0M666.5 514V511.3M668.5 514V511.5M670.5 514V508.1M672.5 514V507.2M675.5 514V506.6M677.5 514V510.5M679.5 514V511.4M682.5 514V506.9M684.5 514V510.0M686.5 514V509.5M688.5 514V509.4M691.5 514V507.0M693.5 514V505.6M695.5 514V505.6M698.5 514V506.4M700.5 514V509.8M702.5 514V505.5M705.5 514V510.3M707.5 514V509.4M709.5 514V509.2M711.5 514V510.6M714.5 514V506.4M716.5 514V506.1M718.5 514V510.8M721.5 514V505.8M723.5 514V511.8M725.5 514V508.2M727.5 514V505.2M730.5 514V506.4M732.5 514V508.2M734.5 514V511.4M737.5 514V506.8M739.5 514V511.4M741.5 514V511.0M744.5 514V507.5M746.5 514V510.5M748.5 514V508.3M750.5 514V509.2M753.5 514V505.2M755.5 514V508.5M757.5 514V507.0M760.5 514V505.6M762.5 514V506.2M764.5 514V506.0M766.5 514V506.2M769.5 514V505.3M771.5 514V508.3M773.5 514V506.4M776.5 514V509.1M778.5 514V506.8M780.5 514V509.4M782.5 514V510.6M785.5 514V510.0M787.5 514V511.6M789.5 514V511.2M792.5 514V506.6M794.5 514V511.6M796.5 514V507.9M799.5 514V511.7M801.5 514V510.7M803.5 514V510.4M805.5 514V507.8M808.5 514V510.7M810.5 514V510.8M812.5 514V509.8M815.5 514V506.3M817.5 514V510.2M819.5 514V505.6M821.5 514V508.2M824.5 514V508.6M826.5 514V511.7M828.5 514V506.4M831.5 514V508.3M833.5 514V510.1M835.5 514V507.4M837.5 514V511.9M840.5 514V509.4M842.5 514V507.0M844.5 514V510.9M847.5 514V509.7M849.5 514V505.9M851.5 514V507.5M854.5 514V510.1M856.5 514V510.9M858.5 514V512.0M860.5 514V506.1M863.5 514V511.4M865.5 514V507.0M867.5 514V508.6M870.5 514V505.3M872.5 514V506.0M874.5 514V506.5M876.5 514V505.6M879.5 514V506.2M881.5 514V508.2M883.5 514V510.9M886.5 514V509.8M888.5 514V511.5M890.5 514V508.7M892.5 514V509.5M895.5 514V511.3M897.5 514V508.8M899.5 514V506.2M902.5 514V511.9M904.5 514V507.0M906.5 514V508.1M909.5 514V511.9M911.5 514V506.4M913.5 514V507.7M915.5 514V509.4M918.5 514V509.9M920.5 514V509.3M922.5 514V510.2M925.5 514V506.9M927.5 514V505.4M929.5 514V506.9M931.5 514V506.2M934.5 514V511.0M936.5 514V507.3M938.5 514V510.7M941.5 514V506.1M943.5 514V511.4M945.5 514V510.9M947.5 514V509.2M950.5 514V505.6M952.5 514V508.4M954.5 514V506.6M957.5 514V509.3M959.5 514V504.2M961.5 514V509.2M964.5 514V505.1M966.5 514V507.4M968.5 514V511.9M970.5 514V509.6M973.5 514V511.3M975.5 514V508.4M977.5 514V506.2M980.5 514V510.9M982.5 514V505.7M984.5 514V509.5M986.5 514V511.0M989.5 514V505.1M991.5 514V507.0M993.5 514V510.6M996.5 514V507.6M998.5 514V511.4M1000.5 514V508.0M1003.5 514V509.7M1005.5 514V509.5M1007.5 514V511.1M1009.5 514V511.1M1012.5 514V508.2M1014.5 514V508.1M1016.5 514V505.6M1019.5 514V506.3M1021.5 514V511.1M1023.5 514V510.0M1025.5 514V510.3M1028.5 514V506.2M1030.5 514V508.2M1032.5 514V511.8M1035.5 514V505.1M1037.5 514V507.4M1039.5 514V507.3M1041.5 514V509.3M1044.5 514V498.7M1046.5 514V510.6M1048.5 514V511.0M1051.5 514V508.0M1053.5 514V508.4M1055.5 514V508.0M1058.5 514V501.0M1060.5 514V507.3M1062.5 514V505.3M1064.5 514V508.7M1067.5 514V507.6M1069.5 514V506.7M1071.5 514V508.6M1074.5 514V506.1M1076.5 514V509.1M1078.5 514V508.0M1080.5 514V508.3M1083.5 514V509.0M1085.5 514V509.8M1087.5 514V506.9M1090.5 514V506.9M1092.5 514V506.7M1094.5 514V507.8M1096.5 514V511.1M1099.5 514V508.5M1101.5 514V511.6M1103.5 514V508.3M1106.5 514V509.9M1108.5 514V510.3M1110.5 514V505.6M1113.5 514V507.3M1115.5 514V509.1M1117.5 514V510.4M1119.5 514V508.0M1122.5 514V511.3M1124.5 514V511.1M1126.5 514V496.7M1129.5 514V510.3M1131.5 514V509.7M1133.5 514V505.7M1135.5 514V509.2M1138.5 514V507.9M1140.5 514V511.8M1142.5 514V509.8M1145.5 514V505.5M1147.5 514V508.7M1149.5 514V509.9M1151.5 514V505.7M1154.5 514V506.1M1156.5 514V508.7M1158.5 514V505.8M1161.5 514V510.6M1163.5 514V510.7M1165.5 514V511.6M1168.5 514V506.9M1170.5 514V491.6M1172.5 514V495.1M1174.5 514V507.4M1177.5 514V494.8M1179.5 514V504.3M1181.5 514V501.5M1184.5 514V497.2M1186.5 514V490.5M1188.5 514V496.2M1190.5 514V500.2M1193.5 514V508.1M1195.5 514V504.0M1197.5 514V503.3M1200.5 514V503.4M1202.5 514V491.1M1204.5 514V499.8M1206.5 514V490.4M1209.5 514V497.9M1211.5 514V495.8M1213.5 514V498.9M1216.5 514V498.6M1218.5 514V493.4M1220.5 514V504.3M1223.5 514V493.3M1225.5 514V499.2M1227.5 514V484.0M1229.5 514V494.7M1232.5 514V505.4M1234.5 514V499.1M1236.5 514V503.7M1239.5 514V490.9M1241.5 514V493.2M1243.5 514V502.8M1245.5 514V496.6M1248.5 514V497.2M1250.5 514V505.6M1252.5 514V495.2M1255.5 514V507.8M1257.5 514V504.7M1259.5 514V499.2M1261.5 514V506.1M1264.5 514V508.2M1266.5 514V506.2M1268.5 514V500.5M1271.5 514V489.1M1273.5 514V504.4M1275.5 514V504.2M1278.5 514V501.7M1280.5 514V479.6M1282.5 514V496.0M1284.5 514V495.1M1287.5 514V491.3M1289.5 514V492.1M1291.5 514V504.7M1294.5 514V498.0M1296.5 514V499.6M1298.5 514V495.4M1300.5 514V481.8M1303.5 514V482.7M1305.5 514V490.8M1307.5 514V457.4M1310.5 514V482.8M1312.5 514V482.8M1314.5 514V402.4M1317.5 514V481.7M1319.5 514V484.4M1321.5 514V496.5M1323.5 514V497.2M1326.5 514V497.6M1328.5 514V474.5M1330.5 514V487.3M1333.5 514V492.4M1335.5 514V466.9M1337.5 514V460.0M1339.5 514V483.5M1342.5 514V497.9M1344.5 514V462.6M1346.5 514V468.8M1349.5 514V468.0M1351.5 514V505.3M1353.5 514V510.4M1355.5 514V511.4M1358.5 514V509.3M1360.5 514V509.3M1362.5 514V508.5M1365.5 514V510.9M1367.5 514V508.7M1369.5 514V507.3M1372.5 514V511.3M1374.5 514V509.0M1376.5 514V507.9M1378.5 514V508.1M1381.5 514V511.8M1383.5 514V509.4M1385.5 514V509.2M1388.5 514V508.5M1390.5 514V508.7M1392.5 514V506.5M1394.5 514V509.6M1397.5 514V508.0M1399.5 514V507.3M1401.5 514V496.1M1404.5 514V496.9M1406.5 514V495.8M1408.5 514V500.3M1410.5 514V490.5M1413.5 514V508.2M1415.5 514V502.5M1417.5 514V505.9M1420.5 514V494.7M1422.5 514V497.6M1424.5 514V498.6M1427.5 514V495.9M1429.5 514V488.7M1431.5 514V490.4M1433.5 514V494.4M1436.5 514V491.7M1438.5 514V498.7M1440.5 514V503.0M1443.5 514V504.0M1445.5 514V505.3M1447.5 514V507.7M1449.5 514V494.2M1452.5 514V492.8M1454.5 514V490.8M1456.5 514V503.7M1459.5 514V500.8M1461.5 514V494.0M1463.5 514V493.1M1465.5 514V497.1M1468.5 514V495.9M1470.5 514V506.4M1472.5 514V504.1M1475.5 514V496.7M1477.5 514V506.2M1479.5 514V495.7M1482.5 514V505.5M1484.5 514V511.7M1486.5 514V511.2M1488.5 514V510.0M1491.5 514V505.0M1493.5 514V505.4M1495.5 514V508.2M1498.5 514V509.4M1500.5 514V506.4M1502.5 514V510.0M1504.5 514V507.7M1507.5 514V505.1M1509.5 514V507.1M1511.5 514V506.4M1514.5 514V510.8M1516.5 514V505.5M1518.5 514V508.6M1520.5 514V505.5M1523.5 514V508.0M1525.5 514V507.6M1527.5 514V510.4M1530.5 514V509.4M1532.5 514V511.6M1534.5 514V505.8M1537.5 514V511.5M1539.5 514V508.6M1541.5 514V510.6M1543.5 514V508.6M1546.5 514V506.4M1548.5 514V511.6M1550.5 514V507.4M1553.5 514V510.1M1555.5 514V505.9M1557.5 514V508.9M1559.5 514V506.9M1562.5 514V511.8M1564.5 514V511.2M1566.5 514V509.5M1569.5 514V509.8M1571.5 514V511.9M1573.5 514V496.6M1576.5 514V508.3M1578.5 514V506.5M1580.5 514V509.2M1582.5 514V506.2M1585.5 514V505.1M1587.5 514V505.3M1589.5 514V507.1M1592.5 514V497.3M1594.5 514V508.0M1596.5 514V509.3M1598.5 514V507.4M1601.5 514V509.4M1603.5 514V509.5M1605.5 514V505.7M1608.5 514V511.3M1610.5 514V506.8M1612.5 514V506.8M1614.5 514V507.2M1617.5 514V511.3M1619.5 514V509.5M1621.5 514V511.9M1624.5 514V509.2M1626.5 514V508.2M1628.5 514V510.6M1631.5 514V509.8M1633.5 514V511.2M1635.5 514V509.0M1637.5 514V510.5M1640.5 514V507.1M1642.5 514V510.1M1644.5 514V505.4M1647.5 514V510.7M1649.5 514V505.1M1651.5 514V507.6M1653.5 514V507.5M1656.5 514V507.7M1658.5 514V506.0M1660.5 514V508.5M1663.5 514V511.2M1665.5 514V507.2M1667.5 514V507.3M1669.5 514V509.3M1672.5 514V507.8M1674.5 514V502.8M1676.5 514V507.6M1679.5 514V507.8M1681.5 514V505.5M1683.5 514V508.7M1686.5 514V506.8M1688.5 514V506.8M1690.5 514V509.2M1692.5 514V511.1M1695.5 514V508.6M1697.5 514V506.1M1699.5 514V505.4M1702.5 514V506.4M1704.5 514V505.0M1706.5 514V505.9M1708.5 514V510.2M1711.5 514V508.8M1713.5 514V505.9M1715.5 514V510.0M1718.5 514V511.5M1720.5 514V506.5M1722.5 514V510.3M1724.5 514V506.0M1727.5 514V508.2M1729.5 514V506.4M1731.5 514V509.4M1734.5 514V511.7M1736.5 514V505.9M1738.5 514V511.2M1741.5 514V509.3M1743.5 514V507.7M1745.5 514V511.5M1747.5 514V510.6M1750.5 514V505.9M1752.5 514V510.6M1754.5 514V504.0M1757.5 514V509.6M1759.5 514V507.6M1761.5 514V507.8M1763.5 514V510.7M1766.5 514V507.1M1768.5 514V511.1M1770.5 514V505.4M1773.5 514V509.5M1775.5 514V505.0M1777.5 514V506.8M1779.5 514V509.8M1782.5 514V511.0M1784.5 514V509.0M1786.5 514V509.1M1789.5 514V508.5M1791.5 514V509.6M1793.5 514V510.4M1796.5 514V510.0M1798.5 514V510.0M1800.5 514V507.3M1802.5 514V505.5M1805.5 514V506.8M1807.5 514V508.9M1809.5 514V509.1M1812.5 514V508.9M1814.5 514V509.9M1816.5 514V507.3M1818.5 514V509.1M1821.5 514V505.7M1823.5 514V509.1M1825.5 514V506.3M1828.5 514V507.9M1830.5 514V511.3M1832.5 514V511.4M1834.5 514V509.4M1837.5 514V498.4M1839.5 514V505.5M1841.5 514V498.0M1844.5 514V491.2M1846.5 514V484.5M1848.5 514V487.8M1851.5 514V484.1M1853.5 514V497.2M1855.5 514V484.2M1857.5 514V502.9M1860.5 514V504.2M1862.5 514V492.3" stroke="#4d4d4d" stroke-width="1.05" fill="none"/>
<path d="M386.6 279.5V430" stroke="#9c27b0" stroke-width="1.400" opacity="0.95"/>
<path d="M441.8 302.7V455" stroke="#c62828" stroke-width="1.400" opacity="0.95"/>
<path d="M465 306V452" stroke="#9c27b0" stroke-width="1.400" opacity="0.95"/>
<path d="M447 455V514" stroke="#9c27b0" stroke-width="1.400" opacity="0.95"/>
<path d="M464.6 306V452" stroke="#9c27b0" stroke-width="1.400" opacity="0.95"/>
<path d="M520 299V440" stroke="#d81b7a" stroke-width="1.400" opacity="0.95"/>
<path d="M525 287V514" stroke="#9c27b0" stroke-width="1.400" opacity="0.95"/>
<path d="M584.8 260.4V430" stroke="#9c27b0" stroke-width="1.400" opacity="0.95"/>
<path d="M607.7 249.5V386" stroke="#c62828" stroke-width="1.400" opacity="0.95"/>
<path d="M674.6 244V386" stroke="#d81b7a" stroke-width="1.400" opacity="0.95"/>
<path d="M724.3 244.6V394" stroke="#9c27b0" stroke-width="1.400" opacity="0.95"/>
<path d="M771.5 229.6V372" stroke="#9c27b0" stroke-width="1.400" opacity="0.95"/>
<path d="M678.4 395V514" stroke="#9c27b0" stroke-width="1.400" opacity="0.95"/>
<path d="M867.3 285.5V432" stroke="#9c27b0" stroke-width="1.400" opacity="0.95"/>
<path d="M888.3 284V425" stroke="#9c27b0" stroke-width="1.400" opacity="0.95"/>
<path d="M943.5 300.5V443" stroke="#c62828" stroke-width="1.400" opacity="0.95"/>
<path d="M953.3 438V514" stroke="#9c27b0" stroke-width="1.400" opacity="0.95"/>
<path d="M1012.3 270.5V430" stroke="#9c27b0" stroke-width="1.400" opacity="0.95"/>
<path d="M1047 261V412" stroke="#9c27b0" stroke-width="1.400" opacity="0.95"/>
<path d="M1068 245V390" stroke="#9c27b0" stroke-width="1.400" opacity="0.95"/>
<path d="M1129.4 236.4V382" stroke="#d81b7a" stroke-width="1.400" opacity="0.95"/>
<path d="M1171.2 155.5V330" stroke="#9c27b0" stroke-width="1.400" opacity="0.95"/>
<path d="M1189.9 111V290" stroke="#9c27b0" stroke-width="1.400" opacity="0.95"/>
<path d="M1205.5 111V280" stroke="#9c27b0" stroke-width="1.400" opacity="0.95"/>
<path d="M1256.3 155.5V308" stroke="#9c27b0" stroke-width="1.400" opacity="0.95"/>
<path d="M1283 125V258" stroke="#9c27b0" stroke-width="1.400" opacity="0.95"/>
<path d="M1334.6 293.6V514" stroke="#9c27b0" stroke-width="1.400" opacity="0.95"/>
<path d="M1341 250V440" stroke="#9c27b0" stroke-width="1.400" opacity="0.95"/>
<path d="M1435.4 199.6V372" stroke="#9c27b0" stroke-width="1.400" opacity="0.95"/>
<path d="M1499.6 170.8V330" stroke="#9c27b0" stroke-width="1.400" opacity="0.95"/>
<path d="M1529.4 168.6V326" stroke="#9c27b0" stroke-width="1.400" opacity="0.95"/>
<path d="M1545.6 179V324" stroke="#d81b7a" stroke-width="1.400" opacity="0.95"/>
<path d="M1564.3 330V481" stroke="#9c27b0" stroke-width="1.400" opacity="0.95"/>
<path d="M1600.8 179.8V328" stroke="#c62828" stroke-width="1.400" opacity="0.95"/>
<path d="M1695.6 136V280" stroke="#9c27b0" stroke-width="1.400" opacity="0.95"/>
<path d="M1725.4 142.8V290" stroke="#9c27b0" stroke-width="1.400" opacity="0.95"/>
<path d="M1796.7 123V262" stroke="#d81b7a" stroke-width="1.400" opacity="0.95"/>
<path d="M1819.9 292V410.4" stroke="#9c27b0" stroke-width="1.400" opacity="0.95"/>
<path d="M1849 136V150" stroke="#9c27b0" stroke-width="1.400" opacity="0.95"/>
<path d="M276.6 435V514" stroke="#2e7d32" stroke-width="1.200" opacity=".75"/>
<path d="M451 452V514" stroke="#2e7d32" stroke-width="1.200" opacity=".75"/>
<path d="M494 466V514" stroke="#2e7d32" stroke-width="1.200" opacity=".75"/>
<path d="M524.7 470V514" stroke="#2e7d32" stroke-width="1.200" opacity=".75"/>
<path d="M550 462V514" stroke="#2e7d32" stroke-width="1.200" opacity=".75"/>
<path d="M646.5 418V514" stroke="#2e7d32" stroke-width="1.200" opacity=".75"/>
<path d="M733.9 396V514" stroke="#2e7d32" stroke-width="1.200" opacity=".75"/>
<path d="M863 438V514" stroke="#2e7d32" stroke-width="1.200" opacity=".75"/>
<path d="M994 452V514" stroke="#2e7d32" stroke-width="1.200" opacity=".75"/>
<path d="M1040.7 420V514" stroke="#2e7d32" stroke-width="1.200" opacity=".75"/>
<path d="M1098 408V514" stroke="#2e7d32" stroke-width="1.200" opacity=".75"/>
<path d="M1144.4 388V514" stroke="#2e7d32" stroke-width="1.200" opacity=".75"/>
<path d="M1201 280V430" stroke="#2e7d32" stroke-width="1.200" opacity=".75"/>
<path d="M1245.8 322V470" stroke="#2e7d32" stroke-width="1.200" opacity=".75"/>
<path d="M1331.6 466V514" stroke="#2e7d32" stroke-width="1.200" opacity=".75"/>
<path d="M1419.3 415V514" stroke="#2e7d32" stroke-width="1.200" opacity=".75"/>
<path d="M1469.7 350V514" stroke="#2e7d32" stroke-width="1.200" opacity=".75"/>
<path d="M1527.5 330V472" stroke="#2e7d32" stroke-width="1.200" opacity=".75"/>
<path d="M1606.4 334V474" stroke="#2e7d32" stroke-width="1.200" opacity=".75"/>
<path d="M1748.2 318V457" stroke="#2e7d32" stroke-width="1.200" opacity=".75"/>
<path d="M1817.2 284V418" stroke="#2e7d32" stroke-width="1.200" opacity=".75"/>
<polyline points="275.0,431.6 386.0,431.6" stroke="#880e4f" stroke-width="5.600" fill="none" stroke-linejoin="round"/>
<polyline points="490.0,463.0 519.0,463.0 521.0,455.0 526.0,455.0" stroke="#880e4f" stroke-width="5.600" fill="none" stroke-linejoin="round"/>
<polyline points="547.0,461.0 561.0,461.0 566.0,453.0 575.0,453.0 586.0,440.0" stroke="#880e4f" stroke-width="5.600" fill="none" stroke-linejoin="round"/>
<polyline points="615.6,392.0 641.0,392.0" stroke="#880e4f" stroke-width="5.600" fill="none" stroke-linejoin="round"/>
<polyline points="645.0,415.0 668.0,415.0 672.0,408.0 674.0,397.5 678.0,397.5" stroke="#880e4f" stroke-width="5.600" fill="none" stroke-linejoin="round"/>
<polyline points="733.0,400.0 754.0,400.0 758.0,392.0 774.0,392.0" stroke="#880e4f" stroke-width="5.600" fill="none" stroke-linejoin="round"/>
<polyline points="863.0,437.9 892.0,437.9" stroke="#880e4f" stroke-width="5.600" fill="none" stroke-linejoin="round"/>
<polyline points="994.0,452.0 1010.0,452.0 1012.5,433.0" stroke="#880e4f" stroke-width="5.600" fill="none" stroke-linejoin="round"/>
<polyline points="1040.7,419.0 1052.0,419.0 1056.0,411.0 1070.7,411.0" stroke="#880e4f" stroke-width="5.600" fill="none" stroke-linejoin="round"/>
<polyline points="1098.0,405.7 1128.0,405.7 1129.5,383.8" stroke="#880e4f" stroke-width="5.600" fill="none" stroke-linejoin="round"/>
<polyline points="1144.4,386.5 1184.0,386.5 1187.0,357.9 1191.0,357.9" stroke="#880e4f" stroke-width="5.600" fill="none" stroke-linejoin="round"/>
<polyline points="1144.4,386.5 1152.0,384.0 1165.0,368.8 1168.0,366.0 1170.5,340.0" stroke="#880e4f" stroke-width="5.600" fill="none" stroke-linejoin="round"/>
<polyline points="1160.0,386.0 1184.0,386.0 1186.0,358.0 1190.0,358.0" stroke="#880e4f" stroke-width="5.600" fill="none" stroke-linejoin="round"/>
<polyline points="1251.4,326.4 1261.0,326.4 1268.0,300.0 1287.0,300.0" stroke="#880e4f" stroke-width="5.600" fill="none" stroke-linejoin="round"/>
<polyline points="1330.0,447.0 1338.0,444.0 1343.0,436.0" stroke="#880e4f" stroke-width="5.600" fill="none" stroke-linejoin="round"/>
<polyline points="1421.0,419.7 1456.0,419.7" stroke="#880e4f" stroke-width="5.600" fill="none" stroke-linejoin="round"/>
<polyline points="1421.0,419.7 1425.0,408.5 1436.0,382.4" stroke="#880e4f" stroke-width="5.600" fill="none" stroke-linejoin="round"/>
<polyline points="1471.6,378.0 1495.0,378.0 1497.0,367.5 1500.0,367.5" stroke="#880e4f" stroke-width="5.600" fill="none" stroke-linejoin="round"/>
<polyline points="1471.6,355.0 1525.0,355.0 1528.0,350.7 1550.0,350.7" stroke="#880e4f" stroke-width="5.600" fill="none" stroke-linejoin="round"/>
<polyline points="1540.0,350.7 1549.0,350.7" stroke="#880e4f" stroke-width="5.600" fill="none" stroke-linejoin="round"/>
<polyline points="1605.3,335.7 1671.0,335.7 1678.0,315.0 1693.0,315.0" stroke="#880e4f" stroke-width="5.600" fill="none" stroke-linejoin="round"/>
<polyline points="1605.3,336.5 1685.0,336.5 1692.0,313.0 1697.0,307.8 1724.7,307.8" stroke="#880e4f" stroke-width="5.600" fill="none" stroke-linejoin="round"/>
<polyline points="1749.0,319.7 1779.0,319.7 1783.0,304.0 1796.0,304.0 1796.0,263.0" stroke="#880e4f" stroke-width="5.600" fill="none" stroke-linejoin="round"/>
<polyline points="1749.0,313.0 1770.0,313.0" stroke="#880e4f" stroke-width="5.600" fill="none" stroke-linejoin="round"/>
<polyline points="1818.0,280.5 1840.4,280.5 1844.0,250.0 1847.8,203.3" stroke="#880e4f" stroke-width="5.600" fill="none" stroke-linejoin="round"/>
<polyline points="163.3,345.6 163.8,346.4 164.9,347.9 166.6,350.2 168.7,353.3 171.2,357.2 173.9,361.8 176.9,367.2 180.1,373.3 182.9,377.6 185.0,379.7" stroke="#ff1f52" stroke-width="5.200" fill="none" stroke-linejoin="round" stroke-linecap="butt"/>
<polyline points="185.0,379.7 185.2,379.9 187.1,380.4 188.5,379.1 190.0,378.5 190.6,378.5" stroke="#4caf50" stroke-width="5.200" fill="none" stroke-linejoin="round" stroke-linecap="butt"/>
<polyline points="190.6,378.5 191.6,378.7 193.4,379.6 195.2,381.4 197.1,383.7 198.8,386.6 200.6,390.0 202.4,394.0 204.1,397.9 205.7,401.8 207.2,405.6 208.8,409.4 210.4,411.8 211.0,412.1" stroke="#ff1f52" stroke-width="5.200" fill="none" stroke-linejoin="round" stroke-linecap="butt"/>
<polyline points="211.0,412.1 212.3,412.8 214.4,412.4 216.6,410.6 218.9,408.8 221.1,406.8 223.3,404.8 225.5,402.6 227.9,401.5 228.8,401.5" stroke="#4caf50" stroke-width="5.200" fill="none" stroke-linejoin="round" stroke-linecap="butt"/>
<polyline points="228.8,401.5 230.4,401.5 233.0,402.6 235.8,404.8 238.8,407.0 242.1,409.3 245.6,411.8 249.4,414.2 252.8,416.6 255.9,418.9 258.8,421.0 261.2,423.0 263.7,424.9 266.0,426.5 268.3,428.1 270.6,429.5 272.7,430.2 273.9,430.2" stroke="#ff1f52" stroke-width="5.200" fill="none" stroke-linejoin="round" stroke-linecap="butt"/>
<polyline points="273.9,430.2 274.9,430.2 276.9,429.5 279.0,428.1 281.0,426.0 283.0,423.4 285.0,420.0 287.0,416.0 289.0,412.4 291.1,409.1 293.1,406.2 295.2,403.8 297.3,402.2 298.4,401.8" stroke="#4caf50" stroke-width="5.200" fill="none" stroke-linejoin="round" stroke-linecap="butt"/>
<polyline points="298.4,401.8 299.3,401.6 301.2,401.9 303.1,403.1 305.0,404.8 306.8,406.9 308.6,409.5 310.4,412.5 312.1,415.2 313.8,417.6 315.5,419.6 317.2,421.4 319.1,422.3 319.7,422.3" stroke="#ff1f52" stroke-width="5.200" fill="none" stroke-linejoin="round" stroke-linecap="butt"/>
<polyline points="319.7,422.3 321.2,422.4 323.6,421.8 326.1,420.2 328.8,418.7 331.6,417.1 334.5,415.4 337.5,413.6 340.2,412.4 342.0,412.0" stroke="#4caf50" stroke-width="5.200" fill="none" stroke-linejoin="round" stroke-linecap="butt"/>
<polyline points="342.0,412.0 342.6,411.8 344.6,411.8 346.4,412.2 348.1,412.4 349.0,412.4" stroke="#ff1f52" stroke-width="5.200" fill="none" stroke-linejoin="round" stroke-linecap="butt"/>
<polyline points="349.0,412.4 349.9,412.3 351.6,411.9 353.4,411.1 355.1,410.4 356.8,409.6 358.5,408.9 360.1,408.1 362.0,408.1 362.6,408.3" stroke="#4caf50" stroke-width="5.200" fill="none" stroke-linejoin="round" stroke-linecap="butt"/>
<polyline points="362.6,408.3 364.0,408.7 366.1,410.0 368.5,412.0 371.0,414.2 373.9,416.8 376.9,419.5 380.1,422.5 383.5,425.4 387.0,428.3 390.6,431.1 394.4,433.9 397.8,436.6 400.9,439.4 403.8,442.1 406.2,444.9 408.8,447.4 411.2,449.6 413.8,451.6 416.2,453.4 418.6,454.4 420.0,454.7" stroke="#ff1f52" stroke-width="5.200" fill="none" stroke-linejoin="round" stroke-linecap="butt"/>
<polyline points="420.0,454.7 420.9,454.8 423.0,454.5 425.0,453.5 427.3,452.6 429.8,451.7 432.7,450.9 435.8,450.1 438.5,449.6 440.4,449.4" stroke="#4caf50" stroke-width="5.200" fill="none" stroke-linejoin="round" stroke-linecap="butt"/>
<polyline points="440.4,449.4 440.9,449.4 442.9,449.4 444.5,449.6 446.3,449.8 447.0,449.8" stroke="#ff1f52" stroke-width="5.200" fill="none" stroke-linejoin="round" stroke-linecap="butt"/>
<polyline points="447.0,449.8 448.1,449.8 450.0,449.6 452.0,449.4 454.1,449.3 456.4,449.4 458.8,449.6 461.2,450.1 463.6,450.6 465.0,451.1" stroke="#4caf50" stroke-width="5.200" fill="none" stroke-linejoin="round" stroke-linecap="butt"/>
<polyline points="465.0,451.1 465.9,451.4 468.0,452.3 470.0,453.4 471.9,454.6 473.8,456.0 475.6,457.5 477.4,459.1 479.1,460.5 480.9,461.5 482.7,462.1 484.6,462.5 486.7,462.0 487.3,461.8" stroke="#ff1f52" stroke-width="5.200" fill="none" stroke-linejoin="round" stroke-linecap="butt"/>
<polyline points="487.3,461.8 489.2,460.9 492.1,458.9 495.2,456.1 498.2,453.6 501.1,451.2 503.8,449.0 506.2,447.0 508.7,445.1 511.0,443.5 513.3,441.9 515.4,440.5 517.6,439.9 518.7,440.1" stroke="#4caf50" stroke-width="5.200" fill="none" stroke-linejoin="round" stroke-linecap="butt"/>
<polyline points="518.7,440.1 519.7,440.2 521.8,441.2 523.9,443.2 525.9,445.1 528.0,447.0 530.0,449.0 532.0,451.0 534.0,452.9 536.1,454.6 538.1,456.2 540.2,457.8 542.5,458.2 543.3,458.1" stroke="#ff1f52" stroke-width="5.200" fill="none" stroke-linejoin="round" stroke-linecap="butt"/>
<polyline points="543.3,458.1 545.0,457.8 547.7,456.2 550.6,453.8 553.6,451.2 556.7,448.8 559.9,446.2 563.1,443.8 566.3,441.4 569.4,439.3 572.5,437.4 575.5,435.6 578.2,433.5 580.8,431.0 583.0,428.1 585.0,424.9 586.9,421.2 588.8,417.1 590.6,412.5 592.4,407.5 594.1,402.7 595.9,398.2 597.6,393.9 599.4,389.9 601.2,387.1 602.0,386.5" stroke="#4caf50" stroke-width="5.200" fill="none" stroke-linejoin="round" stroke-linecap="butt"/>
<polyline points="602.0,386.5 603.1,385.6 605.0,385.4 607.0,386.4 609.1,388.0 611.4,390.0 613.8,392.5 616.2,395.5 618.8,398.4 621.2,401.3 623.8,404.1 626.2,406.9 628.9,409.3 631.5,411.4 634.3,413.1 637.2,414.5 640.0,415.0 641.6,414.8" stroke="#ff1f52" stroke-width="5.200" fill="none" stroke-linejoin="round" stroke-linecap="butt"/>
<polyline points="641.6,414.8 642.5,414.6 644.8,413.4 646.8,411.2 649.0,408.8 651.4,406.1 653.8,403.1 656.2,399.9 658.9,396.8 661.5,393.9 664.3,391.2 667.2,388.8 670.1,387.2 671.6,387.0" stroke="#4caf50" stroke-width="5.200" fill="none" stroke-linejoin="round" stroke-linecap="butt"/>
<polyline points="671.6,387.0 672.8,386.8 675.5,387.2 678.1,388.8 680.8,390.3 683.8,391.8 686.8,393.4 690.0,395.1 693.3,396.1 694.8,396.3" stroke="#ff1f52" stroke-width="5.200" fill="none" stroke-linejoin="round" stroke-linecap="butt"/>
<polyline points="694.8,396.3 696.8,396.6 700.5,396.6 704.3,395.9 708.3,395.4 712.6,394.9 717.1,394.4 721.9,394.0 726.2,393.4 730.2,392.5 733.9,391.4 737.1,390.0 740.4,388.4 743.6,386.5 746.9,384.2 750.1,381.8 753.2,379.3 756.2,376.9 759.1,374.5 761.8,372.3 764.2,370.7 765.8,370.1" stroke="#4caf50" stroke-width="5.200" fill="none" stroke-linejoin="round" stroke-linecap="butt"/>
<polyline points="765.8,370.1 766.3,370.0 768.1,370.0 769.7,370.8 771.5,372.3 773.5,374.4 775.8,377.2 778.2,380.8 780.9,384.6 783.8,388.7 786.9,393.1 790.1,397.9 793.4,402.4 796.6,406.6 799.9,410.6 803.1,414.4 806.2,417.6 809.0,420.2 811.6,422.2 814.1,423.8 816.3,424.8 817.7,425.1" stroke="#ff1f52" stroke-width="5.200" fill="none" stroke-linejoin="round" stroke-linecap="butt"/>
<polyline points="817.7,425.1 818.5,425.2 820.4,425.2 822.3,424.8 824.1,424.2 826.0,423.5 827.9,422.8 829.8,421.9 832.0,421.6 832.7,421.7" stroke="#4caf50" stroke-width="5.200" fill="none" stroke-linejoin="round" stroke-linecap="butt"/>
<polyline points="832.7,421.7 834.5,421.9 837.3,422.7 840.4,424.0 843.6,425.6 846.9,427.5 850.2,429.6 853.8,432.1 857.1,433.5 859.0,433.8" stroke="#ff1f52" stroke-width="5.200" fill="none" stroke-linejoin="round" stroke-linecap="butt"/>
<polyline points="859.0,433.8 860.2,434.0 863.1,433.6 865.9,432.1 868.8,430.7 871.9,429.1 875.1,427.5 878.6,425.9 881.8,425.0 883.7,425.0" stroke="#4caf50" stroke-width="5.200" fill="none" stroke-linejoin="round" stroke-linecap="butt"/>
<polyline points="883.7,425.0 885.0,425.0 887.9,425.9 890.8,427.5 893.8,429.6 897.1,432.0 900.6,434.9 904.4,438.1 908.1,441.1 911.8,443.9 915.5,446.4 919.1,448.6 922.4,450.0 924.6,450.4" stroke="#ff1f52" stroke-width="5.200" fill="none" stroke-linejoin="round" stroke-linecap="butt"/>
<polyline points="924.6,450.4 925.3,450.5 927.8,450.1 929.8,448.9 932.0,447.7 934.2,446.5 936.5,445.3 938.9,444.2 941.1,443.5 942.4,443.3" stroke="#4caf50" stroke-width="5.200" fill="none" stroke-linejoin="round" stroke-linecap="butt"/>
<polyline points="942.4,443.3 943.2,443.2 945.2,443.4 947.2,444.1 949.0,444.7 950.9,445.4 952.8,446.1 954.6,446.9 956.7,447.3 957.4,447.3" stroke="#ff1f52" stroke-width="5.200" fill="none" stroke-linejoin="round" stroke-linecap="butt"/>
<polyline points="957.4,447.3 958.9,447.3 961.4,447.1 964.0,446.4 966.8,446.2 968.0,446.2" stroke="#4caf50" stroke-width="5.200" fill="none" stroke-linejoin="round" stroke-linecap="butt"/>
<polyline points="968.0,446.2 969.6,446.3 972.5,446.8 975.5,447.7 978.4,448.4 981.1,449.1 983.8,449.6 986.2,450.1 988.8,449.9 990.0,449.5" stroke="#ff1f52" stroke-width="5.200" fill="none" stroke-linejoin="round" stroke-linecap="butt"/>
<polyline points="990.0,449.5 991.2,449.1 993.8,447.8 996.2,445.9 998.6,443.8 1000.9,441.4 1003.0,438.9 1005.0,436.1 1006.9,433.8 1008.8,431.8 1010.5,430.3 1012.2,429.2 1013.9,427.9 1015.7,426.4 1017.4,424.7 1019.3,422.8 1021.0,421.2 1022.7,419.8 1024.4,418.7 1026.0,417.9 1027.7,417.5 1028.4,417.5" stroke="#4caf50" stroke-width="5.200" fill="none" stroke-linejoin="round" stroke-linecap="butt"/>
<polyline points="1028.4,417.5 1029.5,417.6 1031.5,418.1 1033.5,419.2 1035.6,419.4 1036.6,419.2" stroke="#ff1f52" stroke-width="5.200" fill="none" stroke-linejoin="round" stroke-linecap="butt"/>
<polyline points="1036.6,419.2 1037.7,419.0 1039.8,417.8 1041.8,415.9 1044.1,413.5 1046.3,410.7 1048.8,407.4 1051.2,403.6 1053.8,400.2 1056.6,397.1 1059.3,394.2 1062.2,391.8 1065.1,390.2 1066.6,389.9" stroke="#4caf50" stroke-width="5.200" fill="none" stroke-linejoin="round" stroke-linecap="butt"/>
<polyline points="1066.6,389.9 1068.0,389.6 1070.9,389.9 1073.7,391.1 1076.4,392.6 1078.8,394.4 1081.0,396.4 1083.0,398.6 1085.0,400.7 1087.0,402.6 1089.0,404.4 1091.0,406.0 1093.2,406.5 1094.0,406.4" stroke="#ff1f52" stroke-width="5.200" fill="none" stroke-linejoin="round" stroke-linecap="butt"/>
<polyline points="1094.0,406.4 1095.6,406.0 1098.1,404.5 1100.9,401.9 1103.6,399.2 1106.2,396.4 1108.8,393.5 1111.2,390.5 1113.9,387.9 1116.6,385.6 1119.4,383.6 1122.3,382.1 1125.2,381.2 1126.7,381.1" stroke="#4caf50" stroke-width="5.200" fill="none" stroke-linejoin="round" stroke-linecap="butt"/>
<polyline points="1126.7,381.1 1128.0,381.1 1130.8,381.7 1133.5,383.0 1136.2,383.2 1137.6,382.7" stroke="#ff1f52" stroke-width="5.200" fill="none" stroke-linejoin="round" stroke-linecap="butt"/>
<polyline points="1137.6,382.7 1138.9,382.2 1141.5,380.1 1144.1,376.9 1146.7,373.2 1149.2,369.1 1151.8,364.5 1154.2,359.5 1156.7,354.8 1159.2,350.5 1161.6,346.5 1164.0,342.9 1166.3,338.9 1168.4,334.7 1170.4,330.1 1172.2,325.3 1174.1,320.2 1176.0,314.9 1178.0,309.4 1180.0,303.6 1182.1,298.3 1184.2,293.4 1186.4,288.9 1188.6,284.8 1190.8,281.5 1192.8,279.0 1194.6,277.3 1196.4,276.4 1198.1,275.7 1199.0,275.5" stroke="#4caf50" stroke-width="5.200" fill="none" stroke-linejoin="round" stroke-linecap="butt"/>
<polyline points="1199.0,275.5 1199.9,275.3 1201.6,275.2 1203.3,275.3 1205.2,275.9 1207.2,277.1 1209.3,278.7 1211.6,280.8 1214.1,283.2 1216.8,285.8 1219.8,288.7 1222.9,291.8 1225.8,295.0 1228.5,298.2 1230.8,301.6 1232.9,304.9 1234.8,308.0 1236.6,310.8 1238.2,313.4 1239.8,315.6 1241.4,317.0 1242.0,317.2" stroke="#ff1f52" stroke-width="5.200" fill="none" stroke-linejoin="round" stroke-linecap="butt"/>
<polyline points="1242.0,317.2 1243.1,317.5 1245.0,317.1 1247.0,315.9 1248.9,314.6 1250.8,313.1 1252.6,311.7 1254.4,310.1 1256.2,307.9 1258.2,304.9 1260.4,301.1 1262.6,296.7 1264.8,292.2 1266.9,287.7 1269.0,283.2 1271.0,278.8 1273.0,274.5 1274.9,270.4 1276.7,266.5 1278.6,262.9 1280.4,261.4 1281.3,261.8" stroke="#4caf50" stroke-width="5.200" fill="none" stroke-linejoin="round" stroke-linecap="butt"/>
<polyline points="1281.3,261.8 1282.2,262.2 1284.1,265.1 1285.9,270.3 1287.8,275.3 1289.6,280.3 1291.4,285.1 1293.3,289.9 1295.1,294.8 1297.0,299.9 1298.9,305.2 1300.8,310.8 1302.5,316.5 1304.0,322.5 1305.3,328.8 1306.4,335.2 1307.4,341.8 1308.3,348.2 1309.1,354.8 1309.9,361.2 1310.8,368.2 1311.8,375.8 1312.9,383.8 1314.1,392.2 1315.3,400.5 1316.5,408.4 1317.7,416.1 1318.8,423.5 1319.9,430.1 1321.0,436.0 1322.1,441.1 1323.3,445.5 1324.4,449.5 1325.6,453.3 1326.8,456.7 1328.0,459.8 1329.3,461.8 1329.8,462.0" stroke="#ff1f52" stroke-width="5.200" fill="none" stroke-linejoin="round" stroke-linecap="butt"/>
<polyline points="1329.8,462.0 1330.7,462.5 1332.1,462.1 1333.7,460.4 1335.3,458.5 1336.9,456.1 1338.6,453.4 1340.2,450.4 1341.8,447.1 1343.2,443.6 1344.4,439.9 1345.4,435.9 1346.4,432.3 1347.4,429.1 1348.2,426.1 1349.1,423.6 1350.2,421.5 1350.3,421.4" stroke="#4caf50" stroke-width="5.200" fill="none" stroke-linejoin="round" stroke-linecap="butt"/>
<polyline points="1350.3,421.4 1351.5,420.0 1353.2,419.1 1355.1,418.6 1357.1,418.4 1358.0,418.5" stroke="#ff1f52" stroke-width="5.200" fill="none" stroke-linejoin="round" stroke-linecap="butt"/>
<polyline points="1358.0,418.5 1359.0,418.5 1361.0,418.8 1363.0,419.2 1365.2,419.7 1366.0,419.8" stroke="#4caf50" stroke-width="5.200" fill="none" stroke-linejoin="round" stroke-linecap="butt"/>
<polyline points="1366.0,419.8 1367.4,420.0 1369.9,420.2 1372.5,420.3 1374.9,420.7 1377.0,421.3 1378.9,422.2 1380.5,423.3 1382.2,424.5 1383.8,425.8 1385.4,427.2 1387.1,428.7 1388.9,429.4 1389.5,429.3" stroke="#ff1f52" stroke-width="5.200" fill="none" stroke-linejoin="round" stroke-linecap="butt"/>
<polyline points="1389.5,429.3 1391.1,429.2 1393.4,428.3 1396.1,426.6 1398.7,424.9 1401.2,423.1 1403.8,421.4 1406.2,419.6 1408.6,418.0 1410.8,416.5 1412.8,415.1 1414.7,413.9 1416.6,412.1 1418.4,409.7 1420.3,406.8 1422.2,403.2 1424.0,399.5 1425.8,395.5 1427.6,391.2 1429.4,386.8 1430.9,382.8 1432.3,379.4 1433.5,376.6 1434.5,374.4 1435.6,371.8 1436.9,368.8 1438.2,365.4 1439.8,361.6 1441.2,358.1 1442.6,354.9 1444.0,351.9 1445.3,349.1 1446.6,346.9 1447.3,346.0" stroke="#4caf50" stroke-width="5.200" fill="none" stroke-linejoin="round" stroke-linecap="butt"/>
<polyline points="1447.3,346.0 1447.8,345.3 1449.1,344.2 1450.2,343.8 1451.5,343.6 1452.9,343.7 1454.4,344.1 1456.1,344.9 1457.6,345.6 1458.5,346.0" stroke="#ff1f52" stroke-width="5.200" fill="none" stroke-linejoin="round" stroke-linecap="butt"/>
<polyline points="1458.5,346.0 1459.1,346.3 1460.6,347.0 1461.9,347.8 1463.5,347.9 1465.2,347.5 1467.0,346.6 1469.0,345.2 1471.3,343.5 1473.9,341.7 1476.7,339.6 1479.9,337.3 1482.6,335.7 1484.6,334.8" stroke="#4caf50" stroke-width="5.200" fill="none" stroke-linejoin="round" stroke-linecap="butt"/>
<polyline points="1484.6,334.8 1484.8,334.7 1486.6,334.3 1488.0,334.6 1489.6,334.4 1490.0,334.3" stroke="#ff1f52" stroke-width="5.200" fill="none" stroke-linejoin="round" stroke-linecap="butt"/>
<polyline points="1490.0,334.3 1491.5,333.8 1493.8,332.8 1496.2,331.2 1498.8,329.8 1501.4,328.5 1504.0,327.3 1506.7,326.2 1509.2,325.4 1510.7,325.2" stroke="#4caf50" stroke-width="5.200" fill="none" stroke-linejoin="round" stroke-linecap="butt"/>
<polyline points="1510.7,325.2 1511.4,325.1 1513.4,325.1 1515.3,325.4 1517.0,325.8 1518.6,326.3 1520.2,326.8 1521.6,327.2 1523.4,327.4 1523.8,327.4" stroke="#ff1f52" stroke-width="5.200" fill="none" stroke-linejoin="round" stroke-linecap="butt"/>
<polyline points="1523.8,327.4 1525.5,327.3 1528.0,326.9 1530.8,326.1 1533.7,325.4 1536.7,324.8 1539.9,324.1 1543.1,323.6 1546.0,323.5 1548.0,323.8" stroke="#4caf50" stroke-width="5.200" fill="none" stroke-linejoin="round" stroke-linecap="butt"/>
<polyline points="1548.0,323.8 1548.5,323.8 1550.6,324.7 1552.4,326.0 1554.0,327.4 1555.6,328.8 1557.1,330.2 1558.4,331.7 1560.1,332.3 1560.5,332.2" stroke="#ff1f52" stroke-width="5.200" fill="none" stroke-linejoin="round" stroke-linecap="butt"/>
<polyline points="1560.5,332.2 1561.9,332.0 1564.1,330.9 1566.4,329.0 1568.8,326.9 1571.1,324.8 1573.4,322.6 1575.6,320.4 1578.0,319.0 1579.0,318.8" stroke="#4caf50" stroke-width="5.200" fill="none" stroke-linejoin="round" stroke-linecap="butt"/>
<polyline points="1579.0,318.8 1580.5,318.5 1583.1,318.9 1585.9,320.1 1588.5,321.5 1591.1,322.9 1593.6,324.4 1596.1,325.9 1598.5,326.7 1599.7,326.7" stroke="#ff1f52" stroke-width="5.200" fill="none" stroke-linejoin="round" stroke-linecap="butt"/>
<polyline points="1599.7,326.7 1601.0,326.7 1603.6,325.9 1606.1,324.4 1608.7,322.7 1611.2,320.9 1613.8,319.0 1616.2,317.0 1618.7,315.1 1621.2,313.3 1623.6,311.7 1626.0,310.1 1628.4,309.2 1629.6,309.0" stroke="#4caf50" stroke-width="5.200" fill="none" stroke-linejoin="round" stroke-linecap="butt"/>
<polyline points="1629.6,309.0 1630.9,308.8 1633.5,309.0 1636.1,309.8 1638.7,310.8 1641.2,312.1 1643.8,313.6 1646.2,315.4 1648.7,317.0 1651.1,318.6 1653.5,320.0 1655.9,321.4 1658.3,321.8 1659.4,321.6" stroke="#ff1f52" stroke-width="5.200" fill="none" stroke-linejoin="round" stroke-linecap="butt"/>
<polyline points="1659.4,321.6 1660.8,321.3 1663.4,319.9 1666.0,317.5 1668.6,314.7 1671.2,311.4 1673.8,307.6 1676.2,303.4 1678.6,299.4 1680.7,295.6 1682.6,292.1 1684.4,288.9 1686.1,286.1 1687.7,283.7 1689.2,281.7 1690.8,280.2 1692.3,279.1 1693.0,278.8" stroke="#4caf50" stroke-width="5.200" fill="none" stroke-linejoin="round" stroke-linecap="butt"/>
<polyline points="1693.0,278.8 1693.9,278.5 1695.6,278.3 1697.4,278.6 1699.1,279.0 1700.7,279.4 1702.2,280.0 1703.8,280.6 1705.4,281.2 1706.0,281.4" stroke="#ff1f52" stroke-width="5.200" fill="none" stroke-linejoin="round" stroke-linecap="butt"/>
<polyline points="1706.0,281.4 1707.1,281.7 1709.0,282.1 1711.0,282.5 1713.0,282.9 1715.2,283.4 1717.3,283.9 1719.5,284.5 1721.6,285.5 1722.8,286.4" stroke="#4caf50" stroke-width="5.200" fill="none" stroke-linejoin="round" stroke-linecap="butt"/>
<polyline points="1722.8,286.4 1723.6,287.0 1725.5,289.0 1727.3,291.4 1729.1,294.0 1730.9,296.6 1732.6,299.5 1734.4,302.5 1736.1,305.3 1737.8,307.8 1739.4,310.1 1741.0,312.1 1742.9,313.2 1743.4,313.2" stroke="#ff1f52" stroke-width="5.200" fill="none" stroke-linejoin="round" stroke-linecap="butt"/>
<polyline points="1743.4,313.2 1745.2,313.3 1747.8,312.5 1750.6,310.7 1753.4,309.0 1756.2,307.3 1758.8,305.8 1761.2,304.2 1763.8,302.8 1766.2,301.4 1768.8,300.0 1771.2,298.6 1773.6,296.9 1775.7,294.8 1777.6,292.2 1779.4,289.4 1781.1,286.2 1782.7,282.9 1784.2,279.4 1785.8,275.6 1787.2,272.1 1788.7,268.9 1790.1,266.0 1791.6,263.3 1793.0,261.5 1793.7,261.1" stroke="#4caf50" stroke-width="5.200" fill="none" stroke-linejoin="round" stroke-linecap="butt"/>
<polyline points="1793.7,261.1 1794.5,260.7 1796.1,260.7 1797.6,261.6 1799.3,262.9 1801.1,264.6 1803.0,266.8 1805.0,269.2 1806.9,271.6 1808.7,273.6 1810.4,275.5 1811.9,277.2 1813.8,277.9 1814.3,277.8" stroke="#ff1f52" stroke-width="5.200" fill="none" stroke-linejoin="round" stroke-linecap="butt"/>
<polyline points="1814.3,277.8 1815.9,277.5 1818.3,276.1 1821.0,273.7 1823.8,271.2 1826.9,268.6 1830.1,266.0 1833.4,263.3 1836.2,260.1 1838.5,256.4 1840.2,252.1 1841.3,247.2 1842.3,242.1 1843.3,236.5 1844.1,230.6 1844.9,224.4 1845.7,218.5 1846.5,213.0 1847.4,207.8 1848.3,203.0 1849.3,198.2 1850.3,193.3 1851.3,188.4 1852.4,183.4 1853.5,179.1 1854.7,175.4 1855.9,172.2 1857.1,169.8 1858.4,167.6 1859.0,166.9" stroke="#4caf50" stroke-width="5.200" fill="none" stroke-linejoin="round" stroke-linecap="butt"/>
<polyline points="1859.0,166.9 1859.8,165.9 1861.2,164.5 1862.8,163.5 1863.9,162.8 1864.6,162.2 1865.0,162.0" stroke="#ff1f52" stroke-width="5.200" fill="none" stroke-linejoin="round" stroke-linecap="butt"/>
<polyline points="226.6,491.7 236.0,492.0 244.0,497.0 254.7,500.0 280.0,502.0 325.7,504.0 400.0,505.5 462.0,506.7 520.0,507.0 560.0,505.5 620.0,503.0 680.0,502.0 740.0,504.0 800.0,506.0 860.0,507.0 950.0,506.5 1020.0,505.5 1100.0,504.0 1160.0,505.5 1240.0,498.0" stroke="#ffeb3b" stroke-width="5.800" fill="none" stroke-linejoin="round" stroke-linecap="butt"/>
<polyline points="1240.0,498.0 1272.0,494.3 1300.0,491.0 1335.4,486.9 1400.0,485.0 1430.0,486.0 1458.5,492.5 1500.0,494.0 1540.0,496.2 1594.0,500.0 1680.0,503.5 1726.0,504.4 1800.0,504.0 1840.0,503.5 1850.0,501.8 1866.5,501.8" stroke="#ffeb3b" stroke-width="4.600" fill="none" stroke-linejoin="round" stroke-linecap="round"/>
<path d="M116.5 383.0V434.9M118.5 372.9V429.7M120.5 333.5V414.8M122.5 238.6V383.2M125.5 259.8V339.4M127.5 290.1V349.1M129.5 296.1V362.2M132.5 298.4V371.7M134.5 309.2V384.0M136.5 316.5V365.4M139.5 312.5V343.5M141.5 320.0V350.8M143.5 327.1V354.5M145.5 328.7V356.3M148.5 330.9V349.7M150.5 328.2V345.8M152.5 327.4V340.6M155.5 329.4V345.9M157.5 333.9V352.1M159.5 335.6V355.7M162.5 338.5V359.3M164.5 351.5V363.6M166.5 358.2V365.7M168.5 356.4V373.5M171.5 371.8V380.6M173.5 362.4V387.0M175.5 373.1V388.9M178.5 374.7V388.6M180.5 373.1V388.5M182.5 373.9V388.1M184.5 375.5V388.7M187.5 379.0V386.0M189.5 373.8V392.9M191.5 376.5V394.9M194.5 385.7V398.4M196.5 382.5V407.9M198.5 399.8V412.8M200.5 402.3V417.6M203.5 407.6V414.7M205.5 379.2V430.1M207.5 382.7V423.3M210.5 371.2V427.7M212.5 385.9V406.8M214.5 382.6V426.7M217.5 393.0V407.9M219.5 390.5V406.2M221.5 397.8V415.3M223.5 394.8V413.4M226.5 396.5V414.2M228.5 404.7V413.3M230.5 406.4V416.8M233.5 396.8V421.1M235.5 397.6V423.6M237.5 406.6V424.2M239.5 411.3V425.8M242.5 399.5V422.1M244.5 391.8V439.9M246.5 410.2V425.1M249.5 405.1V429.9M251.5 416.6V426.2M253.5 408.2V436.0M255.5 412.1V438.9M258.5 414.2V430.1M260.5 418.9V429.7M262.5 420.6V431.7M265.5 415.8V440.5M267.5 416.1V441.2M269.5 424.3V432.3M272.5 419.6V431.1M274.5 418.4V437.1M276.5 416.3V424.2M278.5 393.4V434.2M281.5 385.5V431.0M283.5 396.8V428.4M285.5 391.4V423.6M288.5 394.5V411.8M290.5 385.0V420.0M292.5 400.8V410.3M294.5 387.8V421.0M297.5 405.7V413.5M299.5 393.8V413.1M301.5 393.9V413.7M304.5 399.0V416.8M306.5 402.3V417.5M308.5 400.2V424.6M310.5 413.2V419.8M313.5 410.5V428.3M315.5 416.5V425.7M317.5 415.8V437.1M320.5 417.8V427.2M322.5 416.0V430.3M324.5 417.9V424.6M327.5 409.0V422.5M329.5 412.1V429.2M331.5 409.9V417.6M333.5 406.0V414.7M336.5 395.4V415.1M338.5 403.2V421.4M340.5 412.0V418.4M343.5 406.8V424.7M345.5 413.8V423.5M347.5 408.3V423.7M349.5 411.4V417.5M352.5 398.2V424.8M354.5 402.9V412.4M356.5 403.3V418.0M359.5 406.9V418.2M361.5 395.4V433.1M363.5 420.7V425.5M365.5 418.8V426.3M368.5 419.7V427.7M370.5 419.7V432.4M372.5 421.5V431.2M375.5 418.4V429.1M377.5 418.0V434.5M379.5 418.0V425.8M382.5 418.0V430.6M384.5 427.3V437.1M386.5 431.8V440.8M388.5 431.9V442.4M391.5 434.3V445.5M393.5 432.4V449.6M395.5 439.4V446.6M398.5 435.3V446.0M400.5 437.0V445.5M402.5 437.7V456.7M404.5 437.7V450.7M407.5 447.0V453.0M409.5 445.2V455.0M411.5 452.8V457.9M414.5 447.4V461.7M416.5 446.6V457.5M418.5 437.2V455.1M421.5 436.6V447.5M423.5 439.3V443.7M425.5 436.1V447.0M427.5 436.8V444.5M430.5 430.1V448.4M432.5 440.1V454.0M434.5 442.8V447.3M437.5 440.8V453.2M439.5 442.6V452.6M441.5 442.5V457.4M443.5 442.3V458.8M446.5 444.9V461.1M448.5 447.5V457.3M450.5 440.3V466.0M453.5 442.9V457.8M455.5 448.5V459.3M457.5 437.1V461.8M459.5 446.2V457.0M462.5 443.9V453.9M464.5 448.1V451.5M466.5 450.0V454.3M469.5 447.8V464.0M471.5 453.1V458.8M473.5 459.1V470.4M476.5 457.9V469.8M478.5 462.1V471.8M480.5 457.7V468.4M482.5 459.8V470.6M485.5 452.1V468.1M487.5 453.6V466.0M489.5 452.5V463.4M492.5 456.0V460.4M494.5 450.2V459.5M496.5 447.1V453.0M498.5 438.0V452.3M501.5 442.4V449.9M503.5 437.6V454.5M505.5 439.5V447.1M508.5 436.8V452.5M510.5 440.1V449.7M512.5 432.0V443.7M514.5 435.2V441.0M517.5 438.3V444.8M519.5 439.2V446.5M521.5 446.8V452.2M524.5 441.5V454.4M526.5 444.4V458.3M528.5 444.2V457.4M531.5 447.7V457.8M533.5 448.6V464.0M535.5 455.6V464.6M537.5 457.4V470.3M540.5 454.0V466.8M542.5 453.3V459.5M544.5 453.7V461.3M547.5 451.6V461.3M549.5 452.1V455.6M551.5 445.6V457.0M553.5 443.9V451.1M556.5 441.3V456.2M558.5 437.6V451.3M560.5 435.5V452.1M563.5 435.6V444.8M565.5 429.4V442.6M567.5 425.0V443.9M569.5 429.1V438.7M572.5 424.1V437.4M574.5 415.1V434.2M576.5 416.1V431.5M579.5 411.5V426.9M581.5 413.7V419.3M583.5 405.7V417.8M586.5 398.3V406.0M588.5 391.9V398.7M590.5 385.5V389.8M592.5 381.2V387.0M595.5 374.0V389.0M597.5 371.8V400.4M599.5 382.8V388.4M602.5 383.1V391.9M604.5 369.6V404.4M606.5 379.7V394.6M608.5 380.8V389.9M611.5 389.1V393.5M613.5 388.6V406.0M615.5 393.2V405.0M618.5 392.8V404.6M620.5 401.1V411.3M622.5 403.9V414.0M624.5 411.5V418.2M627.5 410.6V422.3M629.5 411.8V425.4M631.5 411.2V422.1M634.5 410.7V423.8M636.5 414.2V418.6M638.5 410.7V416.1M641.5 405.2V411.2M643.5 393.9V414.3M645.5 395.8V411.2M647.5 393.2V410.2M650.5 381.0V410.1M652.5 388.6V405.7M654.5 389.3V405.3M657.5 388.4V402.3M659.5 389.0V404.4M661.5 387.2V398.3M663.5 372.3V402.3M666.5 384.5V392.2M668.5 388.6V396.2M670.5 378.7V393.9M673.5 386.8V391.6M675.5 374.7V401.3M677.5 380.2V394.6M679.5 385.0V395.4M682.5 386.1V400.0M684.5 385.8V397.7M686.5 388.6V398.2M689.5 388.2V393.9M691.5 377.3V394.7M693.5 382.8V394.3M696.5 383.8V393.9M698.5 382.3V397.5M700.5 381.7V395.3M702.5 382.6V393.2M705.5 384.8V392.9M707.5 385.3V401.0M709.5 387.8V400.0M712.5 390.5V400.7M714.5 384.6V403.7M716.5 391.7V398.8M718.5 388.6V395.5M721.5 386.8V399.0M723.5 393.4V398.0M725.5 374.5V402.8M728.5 386.4V399.2M730.5 388.4V400.6M732.5 386.7V394.6M735.5 383.1V389.5M737.5 377.9V391.8M739.5 382.2V390.2M741.5 379.0V389.1M744.5 380.0V390.2M746.5 377.3V383.7M748.5 372.8V383.8M751.5 376.5V383.2M753.5 366.8V385.8M755.5 366.3V375.8M757.5 366.2V377.5M760.5 365.0V373.4M762.5 362.4V368.7M764.5 364.5V370.9M767.5 369.9V378.2M769.5 371.6V378.1M771.5 365.0V399.6M773.5 376.3V390.8M776.5 386.5V391.1M778.5 390.5V400.6M780.5 391.7V407.4M783.5 397.3V407.5M785.5 395.4V417.9M787.5 402.3V412.3M790.5 400.7V412.9M792.5 403.0V413.9M794.5 405.3V410.7M796.5 402.7V414.8M799.5 409.5V422.5M801.5 418.8V424.6M803.5 419.4V431.1M806.5 414.1V435.2M808.5 421.9V432.9M810.5 422.9V429.5M812.5 415.5V430.0M815.5 420.6V428.7M817.5 422.9V428.5M819.5 418.5V427.8M822.5 412.6V422.7M824.5 415.7V419.5M826.5 415.2V421.8M828.5 418.7V426.9M831.5 417.6V429.0M833.5 424.2V431.1M835.5 424.9V432.7M838.5 423.0V432.0M840.5 423.9V441.2M842.5 423.3V439.8M845.5 428.4V437.9M847.5 430.1V441.9M849.5 435.2V444.6M851.5 435.9V442.2M854.5 431.8V442.1M856.5 423.4V440.0M858.5 429.1V437.2M861.5 425.6V435.5M863.5 424.8V439.9M865.5 424.4V437.8M867.5 421.5V438.1M870.5 424.5V437.7M872.5 419.9V430.5M874.5 421.9V431.8M877.5 418.9V427.1M879.5 421.6V432.7M881.5 427.7V432.9M883.5 427.8V432.7M886.5 424.1V437.6M888.5 424.8V438.1M890.5 430.6V436.9M893.5 426.6V439.1M895.5 430.4V443.3M897.5 427.4V440.5M900.5 435.2V444.3M902.5 437.2V446.0M904.5 432.5V453.1M906.5 437.3V449.8M909.5 438.6V449.2M911.5 445.1V453.9M913.5 445.5V464.6M916.5 445.2V457.9M918.5 449.7V455.2M920.5 446.5V459.2M922.5 435.2V465.7M925.5 446.4V453.6M927.5 440.5V450.6M929.5 439.1V450.2M932.5 443.4V448.3M934.5 433.4V449.3M936.5 434.8V448.5M938.5 437.9V449.7M941.5 432.4V446.0M943.5 432.1V449.4M945.5 434.0V451.0M948.5 445.1V449.8M950.5 440.7V449.1M952.5 442.6V448.7M955.5 444.3V451.9M957.5 443.8V451.0M959.5 441.8V451.0M961.5 437.9V453.5M964.5 442.7V453.6M966.5 441.8V456.7M968.5 439.5V451.7M971.5 437.9V452.8M973.5 442.3V449.4M975.5 435.8V455.3M977.5 447.5V453.9M980.5 441.9V459.0M982.5 449.2V453.3M984.5 439.1V457.5M987.5 440.2V450.0M989.5 439.7V447.8M991.5 434.1V445.4M994.5 432.3V440.9M996.5 430.0V441.9M998.5 427.3V440.0M1000.5 430.5V435.6M1003.5 424.8V434.0M1005.5 419.7V439.8M1007.5 419.1V434.4M1010.5 418.7V432.6M1012.5 416.0V441.4M1014.5 419.1V424.0M1016.5 414.4V423.4M1019.5 405.0V427.9M1021.5 410.9V417.6M1023.5 401.5V432.7M1026.5 411.7V423.5M1028.5 408.9V416.2M1030.5 408.8V416.1M1032.5 409.4V418.4M1035.5 412.1V416.2M1037.5 406.4V417.5M1039.5 402.2V416.6M1042.5 404.8V410.2M1044.5 402.1V417.0M1046.5 396.0V411.2M1049.5 391.2V406.8M1051.5 391.6V403.9M1053.5 396.6V403.8M1055.5 385.8V401.1M1058.5 390.3V396.7M1060.5 385.8V398.8M1062.5 388.5V396.7M1065.5 383.9V394.7M1067.5 386.7V399.6M1069.5 382.3V399.3M1071.5 388.3V400.2M1074.5 389.0V405.3M1076.5 396.2V410.3M1078.5 396.9V410.6M1081.5 397.2V413.0M1083.5 405.8V414.3M1085.5 401.7V410.1M1087.5 396.4V405.6M1090.5 397.7V403.2M1092.5 393.1V403.0M1094.5 394.3V407.3M1097.5 388.0V396.1M1099.5 383.8V394.8M1101.5 378.9V389.1M1104.5 374.6V387.0M1106.5 376.0V383.7M1108.5 374.9V386.0M1110.5 380.4V385.0M1113.5 376.0V388.3M1115.5 375.6V387.9M1117.5 374.1V382.7M1120.5 372.1V385.0M1122.5 372.9V387.8M1124.5 370.4V391.7M1126.5 379.2V384.4M1129.5 374.0V390.6M1131.5 374.7V387.1M1133.5 367.0V382.9M1136.5 370.4V379.8M1138.5 369.1V385.5M1140.5 373.6V378.7M1142.5 368.7V379.7M1145.5 359.8V365.9M1147.5 353.6V370.3M1149.5 349.8V360.6M1152.5 344.6V353.5M1154.5 336.1V349.3M1156.5 335.0V351.6M1159.5 331.4V339.9M1161.5 327.4V335.9M1163.5 317.2V330.4M1165.5 313.6V332.1M1168.5 310.1V322.0M1170.5 303.6V316.4M1172.5 295.2V312.0M1175.5 282.3V312.8M1177.5 269.7V311.8M1179.5 284.4V296.4M1181.5 279.2V292.6M1184.5 274.7V288.4M1186.5 266.4V292.8M1188.5 275.5V282.1M1191.5 273.6V286.2M1193.5 273.4V286.4M1195.5 262.0V285.5M1197.5 258.0V304.1M1200.5 273.5V288.5M1202.5 267.7V298.9M1204.5 271.4V293.7M1207.5 277.3V297.6M1209.5 280.0V298.8M1211.5 283.0V299.7M1214.5 282.6V304.1M1216.5 285.3V295.2M1218.5 281.7V305.1M1220.5 291.9V297.8M1223.5 285.8V314.9M1225.5 302.2V310.6M1227.5 299.5V309.8M1230.5 305.1V312.9M1232.5 301.9V317.9M1234.5 299.9V321.0M1236.5 301.3V318.4M1239.5 301.2V314.9M1241.5 302.9V315.9M1243.5 305.5V318.1M1246.5 303.3V317.9M1248.5 294.4V309.8M1250.5 289.0V308.4M1252.5 283.1V307.0M1255.5 291.0V295.0M1257.5 275.9V298.4M1259.5 282.0V288.9M1262.5 280.3V287.6M1264.5 275.4V290.6M1266.5 267.3V283.2M1269.5 262.3V274.9M1271.5 261.4V280.3M1273.5 256.4V269.4M1275.5 257.0V265.3M1278.5 261.7V276.0M1280.5 268.2V283.4M1282.5 272.2V280.6M1285.5 281.4V296.2M1287.5 290.4V297.6M1289.5 297.0V308.6M1291.5 299.7V319.1M1294.5 300.6V326.3M1296.5 289.1V357.2M1298.5 320.9V354.6M1301.5 339.8V360.3M1303.5 363.2V379.9M1305.5 347.3V428.1M1308.5 383.9V406.3M1310.5 407.4V422.0M1312.5 423.6V433.4M1314.5 437.6V448.2M1317.5 437.5V466.8M1319.5 456.2V472.4M1321.5 457.9V480.9M1324.5 463.4V486.8M1326.5 459.4V472.9M1328.5 457.7V468.3M1330.5 446.6V472.1M1333.5 448.2V459.0M1335.5 429.0V459.4M1337.5 427.4V446.5M1340.5 423.2V437.0M1342.5 412.5V444.1M1344.5 408.9V439.8M1346.5 405.5V431.9M1349.5 413.3V426.1M1351.5 412.5V425.7M1353.5 414.3V422.8M1356.5 417.0V422.5M1358.5 414.6V420.5M1360.5 413.8V419.4M1363.5 413.0V426.4M1365.5 408.7V426.0M1367.5 414.4V427.3M1369.5 418.2V423.9M1372.5 414.3V424.3M1374.5 418.3V423.9M1376.5 413.5V432.0M1379.5 413.8V437.9M1381.5 411.8V445.1M1383.5 422.8V429.5M1385.5 410.4V437.4M1388.5 420.9V431.2M1390.5 414.9V429.3M1392.5 415.1V428.5M1395.5 418.6V431.8M1397.5 417.5V428.1M1399.5 414.5V423.0M1401.5 413.3V426.5M1404.5 416.9V425.1M1406.5 410.5V429.0M1408.5 410.7V421.3M1411.5 405.7V412.5M1413.5 400.2V411.6M1415.5 396.9V405.1M1418.5 392.9V407.0M1420.5 387.8V397.2M1422.5 379.9V395.8M1424.5 372.9V390.9M1427.5 362.4V382.1M1429.5 351.2V389.1M1431.5 358.5V363.3M1434.5 353.3V360.5M1436.5 338.1V365.0M1438.5 344.5V353.6M1440.5 335.7V346.2M1443.5 339.8V345.5M1445.5 335.6V346.2M1447.5 337.1V348.0M1450.5 335.8V344.8M1452.5 333.4V355.4M1454.5 338.5V350.2M1456.5 338.8V352.3M1459.5 326.2V355.5M1461.5 338.1V346.8M1463.5 337.6V347.2M1466.5 336.4V342.5M1468.5 330.1V346.2M1470.5 328.6V338.2M1473.5 329.1V334.5M1475.5 326.8V341.3M1477.5 329.0V336.5M1479.5 328.6V343.2M1482.5 330.2V342.4M1484.5 328.8V341.9M1486.5 328.1V333.9M1489.5 321.5V341.5M1491.5 319.0V334.7M1493.5 316.1V332.3M1495.5 317.7V325.8M1498.5 319.0V327.9M1500.5 322.4V335.5M1502.5 315.9V331.3M1505.5 315.6V328.2M1507.5 319.3V328.9M1509.5 319.8V329.4M1511.5 296.1V336.9M1514.5 314.1V325.8M1516.5 304.9V348.8M1518.5 315.6V330.2M1521.5 320.1V329.7M1523.5 321.4V334.2M1525.5 324.5V336.4M1528.5 320.0V334.8M1530.5 323.1V329.2M1532.5 321.0V329.3M1534.5 319.8V327.0M1537.5 320.3V325.9M1539.5 316.4V332.9M1541.5 322.4V329.4M1544.5 316.5V331.8M1546.5 321.0V326.8M1548.5 318.9V335.1M1550.5 326.1V331.4M1553.5 318.2V341.7M1555.5 320.3V333.8M1557.5 320.5V332.6M1560.5 322.2V333.7M1562.5 317.3V325.1M1564.5 316.9V326.7M1567.5 319.0V323.3M1569.5 312.7V329.4M1571.5 315.0V329.8M1573.5 318.8V328.5M1576.5 322.5V328.1M1578.5 321.8V328.0M1580.5 313.7V333.3M1583.5 316.7V334.6M1585.5 322.5V337.4M1587.5 326.5V333.8M1589.5 323.1V337.5M1592.5 326.7V346.7M1594.5 322.4V341.7M1596.5 325.6V331.3M1599.5 317.3V333.0M1601.5 320.8V327.5M1603.5 315.8V323.0M1605.5 315.2V325.8M1608.5 315.5V331.0M1610.5 318.4V325.7M1612.5 314.6V328.1M1615.5 307.0V321.1M1617.5 307.6V313.5M1619.5 302.0V311.2M1622.5 300.7V314.2M1624.5 299.9V307.0M1626.5 293.5V315.7M1628.5 283.2V314.6M1631.5 303.6V312.5M1633.5 307.8V317.7M1635.5 307.2V322.0M1638.5 312.7V320.9M1640.5 314.0V323.8M1642.5 313.2V319.5M1644.5 305.4V333.1M1647.5 312.5V324.1M1649.5 317.1V323.2M1651.5 315.3V322.4M1654.5 306.4V325.3M1656.5 301.7V319.8M1658.5 309.5V318.3M1660.5 298.8V327.5M1663.5 302.7V312.4M1665.5 300.4V318.4M1667.5 300.9V309.7M1670.5 290.1V310.5M1672.5 291.6V300.1M1674.5 283.3V298.3M1677.5 279.6V292.8M1679.5 270.4V290.0M1681.5 270.5V288.0M1683.5 271.6V286.8M1686.5 273.8V283.1M1688.5 267.9V289.3M1690.5 275.3V292.3M1693.5 271.9V283.6M1695.5 264.3V283.5M1697.5 273.5V281.5M1699.5 266.5V298.9M1702.5 276.8V286.3M1704.5 278.0V288.9M1706.5 273.0V294.5M1709.5 275.9V290.9M1711.5 278.8V284.3M1713.5 282.6V290.7M1715.5 281.1V288.6M1718.5 278.9V296.1M1720.5 284.6V296.2M1722.5 273.7V320.3M1725.5 294.2V302.2M1727.5 290.8V318.8M1729.5 292.6V321.0M1732.5 294.1V312.1M1734.5 305.8V319.4M1736.5 303.6V316.1M1738.5 305.0V318.1M1741.5 303.4V316.1M1743.5 311.2V322.8M1745.5 303.6V317.1M1748.5 301.5V312.4M1750.5 296.0V317.3M1752.5 297.6V311.7M1754.5 298.1V310.3M1757.5 298.0V310.0M1759.5 291.9V305.0M1761.5 295.5V300.7M1764.5 282.1V301.8M1766.5 290.7V296.2M1768.5 278.3V295.8M1770.5 280.5V293.1M1773.5 271.6V284.1M1775.5 268.8V275.6M1777.5 254.4V272.6M1780.5 256.4V266.5M1782.5 242.6V259.5M1784.5 242.2V261.2M1787.5 241.3V258.6M1789.5 242.1V258.5M1791.5 235.9V265.5M1793.5 253.5V266.2M1796.5 253.1V273.8M1798.5 264.7V275.2M1800.5 248.7V289.1M1803.5 266.0V271.9M1805.5 262.6V277.5M1807.5 259.9V277.4M1809.5 266.4V272.5M1812.5 259.4V278.5M1814.5 266.5V274.4M1816.5 265.6V272.6M1819.5 265.5V271.2M1821.5 268.3V279.2M1823.5 264.8V280.0M1825.5 263.5V272.9M1828.5 257.0V265.2M1830.5 251.3V268.4M1832.5 248.4V260.0M1835.5 252.2V261.0M1837.5 245.8V262.7M1839.5 245.4V252.3M1842.5 221.5V261.7M1844.5 213.5V235.6M1846.5 190.2V225.7M1848.5 184.2V202.8M1851.5 177.8V191.4M1853.5 167.4V182.3M1855.5 161.1V176.7M1858.5 159.8V168.1M1860.5 156.2V173.5M1862.5 153.8V171.5M1311.5 300.0V500.0M1313.5 330.0V505.0M1306.5 290.0V430.0M1318.5 380.0V500.0M1849.5 144.0V215.0M1846.5 158.0V250.0M1851.5 150.0V200.0M1853.5 155.0V205.0M1858.5 160.0V198.0M1862.5 168.0V195.0M1192.5 258.0V330.0M1205.5 262.0V320.0" stroke="#adadad" stroke-width="1.25" fill="none"/>
<path d="M524.7 392V407" stroke="#ff6d1f" stroke-width="2.800"/><path d="M518.2 404.5H531.2L524.7 412.5Z" fill="#ff6d1f"/><path d="M516.7 415H532.7" stroke="#ff6d1f" stroke-width="2.500"/>
<path d="M524.7 398V413" stroke="#ff6d1f" stroke-width="2.800"/><path d="M518.2 410.5H531.2L524.7 418.5Z" fill="#ff6d1f"/><path d="M516.7 421H532.7" stroke="#ff6d1f" stroke-width="2.500"/>
<path d="M584.8 366V379" stroke="#ff6d1f" stroke-width="2.800"/><path d="M578.3 376.5H591.3L584.8 384.5Z" fill="#ff6d1f"/><path d="M576.8 387H592.8" stroke="#ff6d1f" stroke-width="2.500"/>
<path d="M676.5 352.4V367" stroke="#ff6d1f" stroke-width="2.800"/><path d="M670.0 364.5H683.0L676.5 372.5Z" fill="#ff6d1f"/><path d="M668.5 375H684.5" stroke="#ff6d1f" stroke-width="2.500"/>
<path d="M773 338.8V351" stroke="#ff6d1f" stroke-width="2.800"/><path d="M766.5 348.5H779.5L773 356.5Z" fill="#ff6d1f"/><path d="M765 359H781" stroke="#ff6d1f" stroke-width="2.500"/>
<path d="M890.5 389.8V404.5" stroke="#ff6d1f" stroke-width="2.800"/><path d="M884.0 402.0H897.0L890.5 410.0Z" fill="#ff6d1f"/><path d="M882.5 412.5H898.5" stroke="#ff6d1f" stroke-width="2.500"/>
<path d="M1012.6 377V391.7" stroke="#ff6d1f" stroke-width="2.800"/><path d="M1006.1 389.2H1019.1L1012.6 397.2Z" fill="#ff6d1f"/><path d="M1004.6 399.7H1020.6" stroke="#ff6d1f" stroke-width="2.500"/>
<path d="M1069.9 351V365.4" stroke="#ff6d1f" stroke-width="2.800"/><path d="M1063.4 362.9H1076.4L1069.9 370.9Z" fill="#ff6d1f"/><path d="M1061.9 373.4H1077.9" stroke="#ff6d1f" stroke-width="2.500"/>
<path d="M1132.7 347V361.6" stroke="#ff6d1f" stroke-width="2.800"/><path d="M1126.2 359.1H1139.2L1132.7 367.1Z" fill="#ff6d1f"/><path d="M1124.7 369.6H1140.7" stroke="#ff6d1f" stroke-width="2.500"/>
<path d="M1171.2 260.4V275.3" stroke="#ff6d1f" stroke-width="2.800"/><path d="M1164.7 272.8H1177.7L1171.2 280.8Z" fill="#ff6d1f"/><path d="M1163.2 283.3H1179.2" stroke="#ff6d1f" stroke-width="2.500"/>
<path d="M1285.7 251V265" stroke="#ff6d1f" stroke-width="2.800"/><path d="M1279.2 262.5H1292.2L1285.7 270.5Z" fill="#ff6d1f"/><path d="M1277.7 273H1293.7" stroke="#ff6d1f" stroke-width="2.500"/>
<path d="M1341 356.3V370.7" stroke="#ff6d1f" stroke-width="2.800"/><path d="M1334.5 368.2H1347.5L1341 376.2Z" fill="#ff6d1f"/><path d="M1333 378.7H1349" stroke="#ff6d1f" stroke-width="2.500"/>
<path d="M1435.4 304.8V319" stroke="#ff6d1f" stroke-width="2.800"/><path d="M1428.9 316.5H1441.9L1435.4 324.5Z" fill="#ff6d1f"/><path d="M1427.4 327H1443.4" stroke="#ff6d1f" stroke-width="2.500"/>
<path d="M1548 289V304.2" stroke="#ff6d1f" stroke-width="2.800"/><path d="M1541.5 301.7H1554.5L1548 309.7Z" fill="#ff6d1f"/><path d="M1540 312.2H1556" stroke="#ff6d1f" stroke-width="2.500"/>
<path d="M1697.8 246.2V261.3" stroke="#ff6d1f" stroke-width="2.800"/><path d="M1691.3 258.8H1704.3L1697.8 266.8Z" fill="#ff6d1f"/><path d="M1689.8 269.3H1705.8" stroke="#ff6d1f" stroke-width="2.500"/>
<path d="M1798.6 234.3V248.60000000000002" stroke="#ff6d1f" stroke-width="2.800"/><path d="M1792.1 246.10000000000002H1805.1L1798.6 254.10000000000002Z" fill="#ff6d1f"/><path d="M1790.6 256.6H1806.6" stroke="#ff6d1f" stroke-width="2.500"/>
<path d="M1849 111V125.5" stroke="#ff6d1f" stroke-width="2.800"/><path d="M1842.5 123.0H1855.5L1849 131.0Z" fill="#ff6d1f"/><path d="M1841 133.5H1857" stroke="#ff6d1f" stroke-width="2.500"/>
<path d="M494 496V481.7" stroke="#4caf50" stroke-width="2.800"/><path d="M487.5 484.7L494 476.7L500.5 484.7Z" fill="#4caf50"/>
<path d="M524.7 504V488.5" stroke="#4caf50" stroke-width="2.800"/><path d="M518.2 491.5L524.7 483.5L531.2 491.5Z" fill="#4caf50"/>
<path d="M550 496V480" stroke="#4caf50" stroke-width="2.800"/><path d="M543.5 483L550 475L556.5 483Z" fill="#4caf50"/>
<path d="M646.5 446.6V431" stroke="#4caf50" stroke-width="2.800"/><path d="M640.0 434L646.5 426L653.0 434Z" fill="#4caf50"/>
<path d="M733.9 429V413.4" stroke="#4caf50" stroke-width="2.800"/><path d="M727.4 416.4L733.9 408.4L740.4 416.4Z" fill="#4caf50"/>
<path d="M865.4 471.2V455.7" stroke="#4caf50" stroke-width="2.800"/><path d="M858.9 458.7L865.4 450.7L871.9 458.7Z" fill="#4caf50"/>
<path d="M996 486.2V470.7" stroke="#4caf50" stroke-width="2.800"/><path d="M989.5 473.7L996 465.7L1002.5 473.7Z" fill="#4caf50"/>
<path d="M1042.6 452V436.6" stroke="#4caf50" stroke-width="2.800"/><path d="M1036.1 439.6L1042.6 431.6L1049.1 439.6Z" fill="#4caf50"/>
<path d="M1100 438.4V423" stroke="#4caf50" stroke-width="2.800"/><path d="M1093.5 426L1100 418L1106.5 426Z" fill="#4caf50"/>
<path d="M1146.3 420.7V405" stroke="#4caf50" stroke-width="2.800"/><path d="M1139.8 408L1146.3 400L1152.8 408Z" fill="#4caf50"/>
<path d="M1246.6 360V344.5" stroke="#4caf50" stroke-width="2.800"/><path d="M1240.1 347.5L1246.6 339.5L1253.1 347.5Z" fill="#4caf50"/>
<path d="M1334.3 487.6V472" stroke="#4caf50" stroke-width="2.800"/><path d="M1327.8 475L1334.3 467L1340.8 475Z" fill="#4caf50"/>
<path d="M1421.2 449.6V434" stroke="#4caf50" stroke-width="2.800"/><path d="M1414.7 437L1421.2 429L1427.7 437Z" fill="#4caf50"/>
<path d="M1472.3 383.5V368" stroke="#4caf50" stroke-width="2.800"/><path d="M1465.8 371L1472.3 363L1478.8 371Z" fill="#4caf50"/>
<path d="M1607.9 362.6V347" stroke="#4caf50" stroke-width="2.800"/><path d="M1601.4 350L1607.9 342L1614.4 350Z" fill="#4caf50"/>
<path d="M1750.8 348.8V333.3" stroke="#4caf50" stroke-width="2.800"/><path d="M1744.3 336.3L1750.8 328.3L1757.3 336.3Z" fill="#4caf50"/>
<path d="M1819.9 303V287.4" stroke="#4caf50" stroke-width="2.800"/><path d="M1813.4 290.4L1819.9 282.4L1826.4 290.4Z" fill="#4caf50"/>
<path d="M484.7 453.8L493.2 460.3L484.7 466.8Z" fill="#4caf50" stroke="#000" stroke-width="0.900"/>
<path d="M514.7 431.9L523.2 438.4L514.7 444.9Z" fill="#4caf50" stroke="#000" stroke-width="0.900"/>
<path d="M540.6 448.3L549.1 454.8L540.6 461.3Z" fill="#4caf50" stroke="#000" stroke-width="0.900"/>
<path d="M636 401.9L644.5 408.4L636 414.9Z" fill="#4caf50" stroke="#000" stroke-width="0.900"/>
<path d="M723.6 385.5L732.1 392L723.6 398.5Z" fill="#4caf50" stroke="#000" stroke-width="0.900"/>
<path d="M855 423.5L863.5 430L855 436.5Z" fill="#4caf50" stroke="#000" stroke-width="0.900"/>
<path d="M986 439.5L994.5 446L986 452.5Z" fill="#4caf50" stroke="#000" stroke-width="0.900"/>
<path d="M1033 406.0L1041.5 412.5L1033 419.0Z" fill="#4caf50" stroke="#000" stroke-width="0.900"/>
<path d="M1090 392.3L1098.5 398.8L1090 405.3Z" fill="#4caf50" stroke="#000" stroke-width="0.900"/>
<path d="M1135.5 370.0L1144.0 376.5L1135.5 383.0Z" fill="#4caf50" stroke="#000" stroke-width="0.900"/>
<path d="M1238 309.8L1246.5 316.3L1238 322.8Z" fill="#4caf50" stroke="#000" stroke-width="0.900"/>
<path d="M1324.7 440.5L1333.2 447L1324.7 453.5Z" fill="#4caf50" stroke="#000" stroke-width="0.900"/>
<path d="M1411.6 405.0L1420.1 411.5L1411.6 418.0Z" fill="#4caf50" stroke="#000" stroke-width="0.900"/>
<path d="M1463 338.5L1471.5 345L1463 351.5Z" fill="#4caf50" stroke="#000" stroke-width="0.900"/>
<path d="M1598.7 319.2L1607.2 325.7L1598.7 332.2Z" fill="#4caf50" stroke="#000" stroke-width="0.900"/>
<path d="M1740.5 301.3L1749.0 307.8L1740.5 314.3Z" fill="#4caf50" stroke="#000" stroke-width="0.900"/>
<path d="M1810.3 259.5L1818.8 266L1810.3 272.5Z" fill="#4caf50" stroke="#000" stroke-width="0.900"/>
<path d="M533.6 437.4L525.1 443.9L533.6 450.4Z" fill="#ff6d1f" stroke="#000" stroke-width="0.900"/>
<path d="M537 440.5L528.5 447L537 453.5Z" fill="#ff6d1f" stroke="#000" stroke-width="0.900"/>
<path d="M593.7 401.9L585.2 408.4L593.7 414.9Z" fill="#ff6d1f" stroke="#000" stroke-width="0.900"/>
<path d="M685 386.9L676.5 393.4L685 399.9Z" fill="#ff6d1f" stroke="#000" stroke-width="0.900"/>
<path d="M782 371.9L773.5 378.4L782 384.9Z" fill="#ff6d1f" stroke="#000" stroke-width="0.900"/>
<path d="M900 422.4L891.5 428.9L900 435.4Z" fill="#ff6d1f" stroke="#000" stroke-width="0.900"/>
<path d="M1021.5 408.5L1013.0 415L1021.5 421.5Z" fill="#ff6d1f" stroke="#000" stroke-width="0.900"/>
<path d="M1079.4 385.5L1070.9 392L1079.4 398.5Z" fill="#ff6d1f" stroke="#000" stroke-width="0.900"/>
<path d="M1141.6 379.2L1133.1 385.7L1141.6 392.2Z" fill="#ff6d1f" stroke="#000" stroke-width="0.900"/>
<path d="M1180.4 292.5L1171.9 299L1180.4 305.5Z" fill="#ff6d1f" stroke="#000" stroke-width="0.900"/>
<path d="M1295.3 281.5L1286.8 288L1295.3 294.5Z" fill="#ff6d1f" stroke="#000" stroke-width="0.900"/>
<path d="M1349.4 390.1L1340.9 396.6L1349.4 403.1Z" fill="#ff6d1f" stroke="#000" stroke-width="0.900"/>
<path d="M1444.6 341.2L1436.1 347.7L1444.6 354.2Z" fill="#ff6d1f" stroke="#000" stroke-width="0.900"/>
<path d="M1557.8 321.0L1549.3 327.5L1557.8 334.0Z" fill="#ff6d1f" stroke="#000" stroke-width="0.900"/>
<path d="M1706.3 277.0L1697.8 283.5L1706.3 290.0Z" fill="#ff6d1f" stroke="#000" stroke-width="0.900"/>
<path d="M1809 265.1L1800.5 271.6L1809 278.1Z" fill="#ff6d1f" stroke="#000" stroke-width="0.900"/>
<path d="M1858.6 158.4L1850.1 164.9L1858.6 171.4Z" fill="#ff6d1f" stroke="#000" stroke-width="0.900"/>
<text x="525" y="357" font-size="17.2" fill="#fff" text-anchor="middle" font-weight="400" dominant-baseline="central" stroke="#000" stroke-width="3.600" paint-order="stroke" stroke-linejoin="round">-13569</text>
<text x="525" y="351" font-size="17.2" fill="#fff" text-anchor="middle" font-weight="400" dominant-baseline="central" stroke="#000" stroke-width="3.600" paint-order="stroke" stroke-linejoin="round">-13996</text>
<text x="524" y="377.5" font-size="17.2" fill="#fff" text-anchor="middle" font-weight="400" dominant-baseline="central" stroke="#000" stroke-width="3.600" paint-order="stroke" stroke-linejoin="round">Close entry(s) order Long Entry</text>
<text x="525" y="371.5" font-size="17.2" fill="#fff" text-anchor="middle" font-weight="400" dominant-baseline="central" stroke="#000" stroke-width="3.600" paint-order="stroke" stroke-linejoin="round">Long Exit</text>
<text x="585.6" y="323" font-size="17.2" fill="#fff" text-anchor="middle" font-weight="400" dominant-baseline="central" stroke="#000" stroke-width="3.600" paint-order="stroke" stroke-linejoin="round">-15168</text>
<text x="677" y="330.6" font-size="17.2" fill="#fff" text-anchor="middle" font-weight="400" dominant-baseline="central" stroke="#000" stroke-width="3.600" paint-order="stroke" stroke-linejoin="round">Close entry(s) order Long Entry</text>
<text x="585.6" y="344" font-size="17.2" fill="#fff" text-anchor="middle" font-weight="400" dominant-baseline="central" stroke="#000" stroke-width="3.600" paint-order="stroke" stroke-linejoin="round">Long Exit</text>
<text x="677" y="310" font-size="17.2" fill="#fff" text-anchor="middle" font-weight="400" dominant-baseline="central" stroke="#000" stroke-width="3.600" paint-order="stroke" stroke-linejoin="round">-14967</text>
<text x="774" y="295" font-size="17.2" fill="#fff" text-anchor="middle" font-weight="400" dominant-baseline="central" stroke="#000" stroke-width="3.600" paint-order="stroke" stroke-linejoin="round">-14645</text>
<text x="773" y="315" font-size="17.2" fill="#fff" text-anchor="middle" font-weight="400" dominant-baseline="central" stroke="#000" stroke-width="3.600" paint-order="stroke" stroke-linejoin="round">Close entry(s) order Long Entry</text>
<text x="891" y="368" font-size="17.2" fill="#fff" text-anchor="middle" font-weight="400" dominant-baseline="central" stroke="#000" stroke-width="3.600" paint-order="stroke" stroke-linejoin="round">Close entry(s) order Long Entry</text>
<text x="892" y="348" font-size="17.2" fill="#fff" text-anchor="middle" font-weight="400" dominant-baseline="central" stroke="#000" stroke-width="3.600" paint-order="stroke" stroke-linejoin="round">-20520</text>
<text x="1013" y="355.7" font-size="17.2" fill="#fff" text-anchor="middle" font-weight="400" dominant-baseline="central" stroke="#000" stroke-width="3.600" paint-order="stroke" stroke-linejoin="round">Close entry(s) order Long Entry</text>
<text x="1014.7" y="336.9" font-size="17.2" fill="#fff" text-anchor="middle" font-weight="400" dominant-baseline="central" stroke="#000" stroke-width="3.600" paint-order="stroke" stroke-linejoin="round">-23415</text>
<text x="1070" y="330" font-size="17.2" fill="#fff" text-anchor="middle" font-weight="400" dominant-baseline="central" stroke="#000" stroke-width="3.600" paint-order="stroke" stroke-linejoin="round">Close entry(s) order Long Entry</text>
<text x="1071.5" y="309.6" font-size="17.2" fill="#fff" text-anchor="middle" font-weight="400" dominant-baseline="central" stroke="#000" stroke-width="3.600" paint-order="stroke" stroke-linejoin="round">-22614</text>
<text x="1132" y="326.5" font-size="17.2" fill="#fff" text-anchor="middle" font-weight="400" dominant-baseline="central" stroke="#000" stroke-width="3.600" paint-order="stroke" stroke-linejoin="round">Close entry(s) order Long Entry</text>
<text x="1132.7" y="306.8" font-size="17.2" fill="#fff" text-anchor="middle" font-weight="400" dominant-baseline="central" stroke="#000" stroke-width="3.600" paint-order="stroke" stroke-linejoin="round">-23053</text>
<text x="1171" y="220" font-size="17.2" fill="#fff" text-anchor="middle" font-weight="400" dominant-baseline="central" stroke="#000" stroke-width="3.600" paint-order="stroke" stroke-linejoin="round">-21918</text>
<text x="1171.7" y="240.5" font-size="17.2" fill="#fff" text-anchor="middle" font-weight="400" dominant-baseline="central" stroke="#000" stroke-width="3.600" paint-order="stroke" stroke-linejoin="round">Long Exit</text>
<text x="1287" y="228.7" font-size="17.2" fill="#fff" text-anchor="middle" font-weight="400" dominant-baseline="central" stroke="#000" stroke-width="3.600" paint-order="stroke" stroke-linejoin="round">Close entry(s) order Long Entry</text>
<text x="1287.6" y="208.9" font-size="17.2" fill="#fff" text-anchor="middle" font-weight="400" dominant-baseline="central" stroke="#000" stroke-width="3.600" paint-order="stroke" stroke-linejoin="round">-23122</text>
<text x="1341.7" y="315.2" font-size="17.2" fill="#fff" text-anchor="middle" font-weight="400" dominant-baseline="central" stroke="#000" stroke-width="3.600" paint-order="stroke" stroke-linejoin="round">-54201</text>
<text x="1341.7" y="335" font-size="17.2" fill="#fff" text-anchor="middle" font-weight="400" dominant-baseline="central" stroke="#000" stroke-width="3.600" paint-order="stroke" stroke-linejoin="round">Long Exit</text>
<text x="1436" y="263" font-size="17.2" fill="#fff" text-anchor="middle" font-weight="400" dominant-baseline="central" stroke="#000" stroke-width="3.600" paint-order="stroke" stroke-linejoin="round">-59049</text>
<text x="1436" y="283.5" font-size="17.2" fill="#fff" text-anchor="middle" font-weight="400" dominant-baseline="central" stroke="#000" stroke-width="3.600" paint-order="stroke" stroke-linejoin="round">Long Exit</text>
<text x="1548.7" y="268.6" font-size="17.2" fill="#fff" text-anchor="middle" font-weight="400" dominant-baseline="central" stroke="#000" stroke-width="3.600" paint-order="stroke" stroke-linejoin="round">Close entry(s) order Long Entry</text>
<text x="1548" y="248" font-size="17.2" fill="#fff" text-anchor="middle" font-weight="400" dominant-baseline="central" stroke="#000" stroke-width="3.600" paint-order="stroke" stroke-linejoin="round">-57720</text>
<text x="1697.6" y="224.6" font-size="17.2" fill="#fff" text-anchor="middle" font-weight="400" dominant-baseline="central" stroke="#000" stroke-width="3.600" paint-order="stroke" stroke-linejoin="round">Close entry(s) order Long Entry</text>
<text x="1698.6" y="202.5" font-size="17.2" fill="#fff" text-anchor="middle" font-weight="400" dominant-baseline="central" stroke="#000" stroke-width="3.600" paint-order="stroke" stroke-linejoin="round">-56457</text>
<text x="1800" y="211.5" font-size="17.2" fill="#fff" text-anchor="middle" font-weight="400" dominant-baseline="central" stroke="#000" stroke-width="3.600" paint-order="stroke" stroke-linejoin="round">Close entry(s) order Long Entry</text>
<text x="1800.4" y="192" font-size="17.2" fill="#fff" text-anchor="middle" font-weight="400" dominant-baseline="central" stroke="#000" stroke-width="3.600" paint-order="stroke" stroke-linejoin="round">-60984</text>
<text x="647" y="464.4" font-size="17.2" fill="#fff" text-anchor="middle" font-weight="400" dominant-baseline="central" stroke="#000" stroke-width="3.600" paint-order="stroke" stroke-linejoin="round">Long Entry</text>
<text x="647" y="484.3" font-size="17.2" fill="#fff" text-anchor="middle" font-weight="400" dominant-baseline="central" stroke="#000" stroke-width="3.600" paint-order="stroke" stroke-linejoin="round">+14967</text>
<text x="734.4" y="447" font-size="17.2" fill="#fff" text-anchor="middle" font-weight="400" dominant-baseline="central" stroke="#000" stroke-width="3.600" paint-order="stroke" stroke-linejoin="round">Long Entry</text>
<text x="734.4" y="467" font-size="17.2" fill="#fff" text-anchor="middle" font-weight="400" dominant-baseline="central" stroke="#000" stroke-width="3.600" paint-order="stroke" stroke-linejoin="round">+14645</text>
<text x="865" y="490" font-size="17.2" fill="#fff" text-anchor="middle" font-weight="400" dominant-baseline="central" stroke="#000" stroke-width="3.600" paint-order="stroke" stroke-linejoin="round">Long Entry</text>
<text x="865" y="510" font-size="17.2" fill="#fff" text-anchor="middle" font-weight="400" dominant-baseline="central" stroke="#000" stroke-width="3.600" paint-order="stroke" stroke-linejoin="round">+20520</text>
<text x="1043.4" y="469.8" font-size="17.2" fill="#fff" text-anchor="middle" font-weight="400" dominant-baseline="central" stroke="#000" stroke-width="3.600" paint-order="stroke" stroke-linejoin="round">Long Entry</text>
<text x="1043.4" y="490.3" font-size="17.2" fill="#fff" text-anchor="middle" font-weight="400" dominant-baseline="central" stroke="#000" stroke-width="3.600" paint-order="stroke" stroke-linejoin="round">+22614</text>
<text x="1094" y="456" font-size="17.2" fill="#fff" text-anchor="middle" font-weight="400" dominant-baseline="central" stroke="#000" stroke-width="3.600" paint-order="stroke" stroke-linejoin="round">Long Entry</text>
<text x="1094" y="476" font-size="17.2" fill="#fff" text-anchor="middle" font-weight="400" dominant-baseline="central" stroke="#000" stroke-width="3.600" paint-order="stroke" stroke-linejoin="round">+23053</text>
<text x="1146.3" y="439.3" font-size="17.2" fill="#fff" text-anchor="middle" font-weight="400" dominant-baseline="central" stroke="#000" stroke-width="3.600" paint-order="stroke" stroke-linejoin="round">Long Entry</text>
<text x="1146.3" y="459" font-size="17.2" fill="#fff" text-anchor="middle" font-weight="400" dominant-baseline="central" stroke="#000" stroke-width="3.600" paint-order="stroke" stroke-linejoin="round">+21918</text>
<text x="997" y="504.5" font-size="17.2" fill="#fff" text-anchor="middle" font-weight="400" dominant-baseline="central" stroke="#000" stroke-width="3.600" paint-order="stroke" stroke-linejoin="round">Long Entry</text>
<text x="1247" y="378.7" font-size="17.2" fill="#fff" text-anchor="middle" font-weight="400" dominant-baseline="central" stroke="#000" stroke-width="3.600" paint-order="stroke" stroke-linejoin="round">Long Entry</text>
<text x="1247" y="399.2" font-size="17.2" fill="#fff" text-anchor="middle" font-weight="400" dominant-baseline="central" stroke="#000" stroke-width="3.600" paint-order="stroke" stroke-linejoin="round">+23122</text>
<text x="1334.3" y="506.5" font-size="17.2" fill="#fff" text-anchor="middle" font-weight="400" dominant-baseline="central" stroke="#000" stroke-width="3.600" paint-order="stroke" stroke-linejoin="round">Long Entry</text>
<text x="1422" y="467.5" font-size="17.2" fill="#fff" text-anchor="middle" font-weight="400" dominant-baseline="central" stroke="#000" stroke-width="3.600" paint-order="stroke" stroke-linejoin="round">Long Entry</text>
<text x="1422" y="487.6" font-size="17.2" fill="#fff" text-anchor="middle" font-weight="400" dominant-baseline="central" stroke="#000" stroke-width="3.600" paint-order="stroke" stroke-linejoin="round">+59049</text>
<text x="1472.7" y="402.2" font-size="17.2" fill="#fff" text-anchor="middle" font-weight="400" dominant-baseline="central" stroke="#000" stroke-width="3.600" paint-order="stroke" stroke-linejoin="round">Long Entry</text>
<text x="1472.7" y="421.6" font-size="17.2" fill="#fff" text-anchor="middle" font-weight="400" dominant-baseline="central" stroke="#000" stroke-width="3.600" paint-order="stroke" stroke-linejoin="round">+57720</text>
<text x="1609" y="382.4" font-size="17.2" fill="#fff" text-anchor="middle" font-weight="400" dominant-baseline="central" stroke="#000" stroke-width="3.600" paint-order="stroke" stroke-linejoin="round">Long Entry</text>
<text x="1609" y="401.8" font-size="17.2" fill="#fff" text-anchor="middle" font-weight="400" dominant-baseline="central" stroke="#000" stroke-width="3.600" paint-order="stroke" stroke-linejoin="round">+56457</text>
<text x="1750.8" y="367.5" font-size="17.2" fill="#fff" text-anchor="middle" font-weight="400" dominant-baseline="central" stroke="#000" stroke-width="3.600" paint-order="stroke" stroke-linejoin="round">Long Entry</text>
<text x="1750.8" y="387.2" font-size="17.2" fill="#fff" text-anchor="middle" font-weight="400" dominant-baseline="central" stroke="#000" stroke-width="3.600" paint-order="stroke" stroke-linejoin="round">+60984</text>
<text x="1819.9" y="322" font-size="17.2" fill="#fff" text-anchor="middle" font-weight="400" dominant-baseline="central" stroke="#000" stroke-width="3.600" paint-order="stroke" stroke-linejoin="round">Long Entry</text>
<text x="1819.9" y="341.3" font-size="17.2" fill="#fff" text-anchor="middle" font-weight="400" dominant-baseline="central" stroke="#000" stroke-width="3.600" paint-order="stroke" stroke-linejoin="round">+58992</text>
<text x="494" y="513" font-size="17.2" fill="#fff" text-anchor="middle" font-weight="400" dominant-baseline="central" stroke="#000" stroke-width="3.600" paint-order="stroke" stroke-linejoin="round">Long Entry</text>
<text x="550" y="513" font-size="17.2" fill="#fff" text-anchor="middle" font-weight="400" dominant-baseline="central" stroke="#000" stroke-width="3.600" paint-order="stroke" stroke-linejoin="round">Long Entry</text>
</g>
<path d="M83 180H1882" stroke="#e8e8e8" stroke-width="1.100" stroke-dasharray="2.200 1.300"/>
<polygon points="234.0,539.7 234.0,543.1 236.3,546.4 238.6,546.4 240.9,547.9 243.2,549.5 245.5,549.7 247.8,551.1 250.1,549.3 252.4,552.3 254.7,551.4 257.0,552.0 259.3,551.8 261.6,550.0 263.9,551.6 266.2,553.3 268.5,548.7 270.8,550.1 273.1,549.9 275.4,549.2 277.7,549.1 280.0,546.5 282.3,543.3 283.0,543.7 283.0,539.7" fill="#ff1744"/>
<polygon points="395.0,539.7 395.0,542.5 397.3,544.6 399.6,547.3 401.9,548.1 404.2,550.0 406.5,550.4 408.8,550.2 411.1,551.7 413.4,549.9 415.7,553.3 418.0,550.3 420.3,554.6 422.6,551.5 424.9,551.2 427.2,552.7 429.5,551.3 431.8,553.6 434.1,551.3 436.4,554.5 438.7,549.8 441.0,549.8 443.3,554.0 445.6,552.9 447.9,550.7 450.2,552.6 452.5,551.1 454.8,551.7 457.1,550.5 459.4,551.7 461.7,552.6 464.0,554.1 466.3,551.4 468.6,553.6 470.9,554.0 473.2,556.4 475.5,554.8 477.8,558.5 480.1,560.1 482.4,557.4 484.7,558.2 487.0,563.4 489.3,560.7 491.6,560.8 493.9,557.3 496.2,549.6 498.5,544.3 500.0,541.7 500.0,539.7" fill="#ff1744"/>
<polygon points="582.0,539.7 582.0,537.5 584.3,532.2 585.7,530.2 585.7,539.7" fill="#0b5345"/>
<polygon points="585.7,539.7 585.7,529.7 588.0,526.3 590.3,527.4 592.6,520.8 594.9,525.0 597.2,521.9 599.5,520.6 601.8,522.4 604.1,525.9 606.4,525.4 608.7,522.7 609.0,522.7 609.0,539.7" fill="#39ff3b"/>
<polygon points="609.0,539.7 609.0,526.7 611.3,525.4 613.6,522.4 615.9,526.0 618.2,527.8 620.5,525.3 622.8,527.4 625.1,525.4 627.4,527.4 629.7,524.5 632.0,524.1 634.3,527.6 636.6,525.1 638.9,525.4 641.2,527.1 643.5,521.8 645.5,522.6 645.5,539.7" fill="#0b5345"/>
<polygon points="645.5,539.7 645.5,525.2 647.8,523.0 650.1,526.3 652.4,519.7 654.7,519.0 657.0,521.3 659.3,525.5 661.6,522.1 663.9,523.7 666.2,523.9 668.5,525.9 670.8,526.6 671.2,523.0 671.2,539.7" fill="#39ff3b"/>
<polygon points="671.2,539.7 671.2,522.3 673.5,524.4 675.8,524.1 678.1,524.7 680.4,527.1 682.7,526.9 685.0,528.6 687.3,527.4 689.6,529.0 691.9,529.4 694.2,533.2 696.5,534.9 698.8,537.3 699.0,536.7 699.0,539.7" fill="#0b5345"/>
<polygon points="734.5,539.7 734.5,536.5 736.8,535.2 739.1,534.5 741.4,532.7 743.7,529.0 746.0,527.5 748.3,525.6 750.6,528.8 752.9,525.6 755.0,525.2 755.0,539.7" fill="#0b5345"/>
<polygon points="755.0,539.7 755.0,527.4 757.3,526.3 759.0,527.5 759.0,539.7" fill="#39ff3b"/>
<polygon points="759.0,539.7 759.0,529.6 761.3,531.7 763.6,533.4 765.0,535.7 765.0,539.7" fill="#0b5345"/>
<polygon points="790.8,539.7 790.8,543.1 793.1,543.9 795.4,546.6 797.7,545.5 800.0,549.1 802.3,548.8 804.6,548.9 806.9,548.2 809.2,549.4 811.5,546.9 813.8,549.4 816.1,550.3 818.4,548.6 820.7,550.1 823.0,550.1 825.3,549.4 827.6,550.7 829.9,549.6 832.2,548.3 834.5,550.4 836.8,551.7 839.1,549.3 841.4,550.9 843.7,553.0 846.0,549.2 848.3,553.8 850.6,551.4 852.9,551.8 855.2,553.9 857.5,553.5 859.8,552.1 862.1,551.9 864.4,554.1 866.7,557.8 869.0,559.3 871.3,558.1 873.6,558.2 875.9,557.6 878.2,558.6 880.5,553.1 882.8,552.6 885.1,556.5 887.4,551.1 889.7,553.5 892.0,552.7 894.3,555.5 896.6,553.7 898.9,551.4 901.2,550.5 903.5,552.6 905.8,552.9 908.1,552.4 910.4,552.9 912.7,550.0 915.0,551.5 917.3,553.8 919.6,550.9 921.9,550.3 924.2,550.2 926.5,553.9 928.8,553.4 931.1,550.9 933.4,550.3 935.7,550.2 938.0,552.3 940.3,552.1 942.6,551.9 944.9,551.2 947.2,550.2 949.5,547.6 951.8,550.6 954.1,547.4 956.4,549.2 958.7,547.5 961.0,546.3 963.3,548.4 965.6,547.1 967.9,549.2 970.2,546.8 972.5,548.5 974.8,547.7 977.1,546.3 979.4,547.1 981.7,547.2 984.0,548.8 986.3,548.8 988.6,549.4 990.9,546.4 993.2,545.5 995.5,544.9 997.8,543.7 1000.1,542.5 1001.7,542.7 1001.7,539.7" fill="#ff1744"/>
<polygon points="1021.0,539.7 1021.0,535.7 1023.3,534.4 1025.6,530.8 1027.9,531.4 1030.2,530.2 1032.5,527.8 1034.8,526.7 1037.1,526.6 1039.4,527.3 1041.7,525.8 1044.0,527.6 1046.3,523.8 1048.6,524.6 1050.9,523.8 1052.7,523.9 1052.7,539.7" fill="#0b5345"/>
<polygon points="1052.7,539.7 1052.7,525.1 1055.0,522.4 1057.3,524.8 1059.6,521.4 1061.9,524.9 1064.2,522.0 1066.5,526.2 1068.8,525.4 1071.1,525.4 1073.4,525.7 1073.8,524.6 1073.8,539.7" fill="#39ff3b"/>
<polygon points="1073.8,539.7 1073.8,524.0 1076.1,523.7 1078.4,527.4 1080.7,524.0 1083.0,524.9 1085.3,525.4 1087.6,527.0 1089.9,521.7 1092.2,520.9 1094.5,522.4 1096.0,522.1 1096.0,539.7" fill="#0b5345"/>
<polygon points="1096.0,539.7 1096.0,523.3 1098.3,526.3 1100.6,524.5 1102.9,524.2 1105.2,525.6 1107.5,523.3 1109.8,523.1 1112.1,522.5 1114.4,524.8 1116.7,524.8 1119.0,519.8 1119.5,521.5 1119.5,539.7" fill="#39ff3b"/>
<polygon points="1119.5,539.7 1119.5,522.8 1121.8,525.7 1124.1,525.1 1126.4,526.5 1128.7,526.6 1131.0,528.6 1133.3,525.2 1135.6,523.8 1137.9,525.1 1140.2,522.9 1142.5,523.4 1144.8,524.7 1146.5,523.2 1146.5,539.7" fill="#0b5345"/>
<polygon points="1146.5,539.7 1146.5,524.6 1148.8,523.2 1151.1,525.1 1152.0,522.6 1152.0,539.7" fill="#39ff3b"/>
<polygon points="1152.0,539.7 1152.0,526.9 1154.0,522.6 1154.0,539.7" fill="#0b5345"/>
<polygon points="1154.0,539.7 1154.0,524.4 1156.3,522.0 1158.6,522.8 1160.9,526.9 1161.7,522.3 1161.7,539.7" fill="#39ff3b"/>
<polygon points="1161.7,539.7 1161.7,521.7 1164.0,526.8 1165.0,522.2 1165.0,539.7" fill="#0b5345"/>
<polygon points="1165.0,539.7 1165.0,523.7 1167.3,525.9 1169.6,525.0 1171.9,525.4 1172.0,522.0 1172.0,539.7" fill="#39ff3b"/>
<polygon points="1172.0,539.7 1172.0,522.8 1174.0,521.9 1174.0,539.7" fill="#0b5345"/>
<polygon points="1174.0,539.7 1174.0,522.1 1176.3,520.8 1178.6,523.3 1180.9,526.2 1183.2,526.1 1185.5,525.5 1187.8,524.9 1190.1,524.3 1192.4,523.1 1194.7,523.9 1197.0,518.1 1199.3,521.6 1201.6,520.3 1203.9,517.5 1206.2,522.7 1208.5,520.9 1210.8,525.2 1213.1,522.7 1215.4,520.5 1215.6,521.8 1215.6,539.7" fill="#39ff3b"/>
<polygon points="1215.6,539.7 1215.6,523.0 1217.9,525.2 1220.2,523.4 1222.5,524.7 1224.8,525.1 1227.1,524.7 1229.4,524.7 1231.7,524.2 1234.0,524.2 1236.3,524.8 1238.6,526.0 1240.9,527.0 1243.2,526.5 1245.5,529.5 1247.8,529.6 1250.1,526.5 1252.4,528.6 1254.7,530.6 1257.0,527.2 1259.3,530.2 1261.6,529.6 1263.9,526.6 1266.2,530.1 1268.5,527.2 1270.8,530.3 1273.1,529.7 1275.4,532.7 1277.7,533.7 1280.0,535.1 1281.0,535.7 1281.0,539.7" fill="#0b5345"/>
<polygon points="1300.0,539.7 1300.0,542.8 1302.3,545.6 1304.6,546.5 1306.9,549.0 1309.2,553.0 1311.5,550.7 1313.8,551.2 1316.1,549.2 1318.4,550.5 1320.7,550.0 1323.0,552.9 1325.3,550.6 1327.6,550.3 1329.9,549.8 1332.2,552.3 1334.5,551.4 1336.8,549.4 1339.1,549.1 1341.4,548.5 1343.7,549.2 1346.0,548.9 1348.3,546.9 1350.6,546.7 1352.9,548.3 1355.2,547.1 1357.5,548.5 1359.8,546.8 1362.1,546.5 1364.4,546.4 1366.7,549.1 1369.0,548.0 1371.3,546.2 1373.6,547.4 1375.9,548.3 1378.2,546.9 1380.5,549.0 1382.8,546.2 1385.1,548.0 1387.4,548.1 1389.7,546.8 1392.0,549.4 1394.3,547.7 1396.6,546.2 1398.9,548.0 1401.2,545.6 1403.5,547.5 1405.8,547.7 1408.1,547.0 1410.4,545.1 1412.7,545.0 1415.0,546.9 1417.3,544.6 1419.5,542.8 1419.5,539.7" fill="#ff1744"/>
<polygon points="1429.0,539.7 1429.0,535.5 1431.3,535.1 1433.6,532.4 1435.9,531.0 1436.0,528.7 1436.0,539.7" fill="#0b5345"/>
<polygon points="1436.0,539.7 1436.0,530.9 1438.3,527.6 1440.6,528.6 1441.0,524.6 1441.0,539.7" fill="#39ff3b"/>
<polygon points="1441.0,539.7 1441.0,523.3 1443.3,527.4 1444.0,524.3 1444.0,539.7" fill="#0b5345"/>
<polygon points="1444.0,539.7 1444.0,524.6 1446.3,526.4 1448.6,522.8 1450.0,523.7 1450.0,539.7" fill="#39ff3b"/>
<polygon points="1450.0,539.7 1450.0,524.8 1452.3,525.0 1454.6,523.1 1456.9,524.1 1459.2,524.6 1461.5,526.2 1463.8,521.9 1466.0,522.1 1466.0,539.7" fill="#0b5345"/>
<polygon points="1466.0,539.7 1466.0,522.8 1468.3,523.7 1470.6,519.9 1471.7,521.5 1471.7,539.7" fill="#39ff3b"/>
<polygon points="1471.7,539.7 1471.7,523.4 1474.0,521.3 1474.0,521.3 1474.0,539.7" fill="#0b5345"/>
<polygon points="1474.0,539.7 1474.0,525.3 1476.3,523.7 1478.6,521.6 1480.9,524.1 1483.2,518.5 1484.6,520.2 1484.6,539.7" fill="#39ff3b"/>
<polygon points="1484.6,539.7 1484.6,518.4 1486.9,520.7 1489.0,519.8 1489.0,539.7" fill="#0b5345"/>
<polygon points="1489.0,539.7 1489.0,519.9 1491.3,523.1 1493.6,519.1 1495.9,518.1 1498.2,521.1 1500.5,520.1 1502.8,519.5 1505.1,522.9 1507.4,524.6 1509.7,523.6 1512.0,521.1 1514.3,520.4 1516.6,518.9 1518.9,523.5 1521.2,524.3 1523.5,522.6 1525.8,524.6 1528.1,524.0 1530.4,522.7 1532.7,522.9 1535.0,527.9 1536.0,524.9 1536.0,539.7" fill="#39ff3b"/>
<polygon points="1536.0,539.7 1536.0,528.1 1538.3,527.8 1540.6,529.8 1542.9,534.8 1544.0,535.7 1544.0,539.7" fill="#0b5345"/>
<polygon points="1664.0,539.7 1664.0,536.4 1666.3,535.6 1668.6,534.9 1670.9,534.6 1673.2,533.4 1675.5,531.5 1677.8,531.9 1680.1,531.6 1682.4,532.1 1684.7,528.8 1687.0,530.5 1689.3,530.3 1691.6,527.5 1693.9,526.5 1696.2,528.1 1698.5,530.2 1700.8,526.3 1703.1,526.7 1705.4,530.5 1707.7,529.2 1710.0,526.7 1712.3,528.5 1714.6,530.0 1716.9,526.4 1719.2,530.1 1721.5,535.6 1722.5,536.7 1722.5,539.7" fill="#0b5345"/>
<polygon points="1771.7,539.7 1771.7,536.3 1774.0,534.3 1776.3,534.0 1778.6,530.4 1780.9,531.6 1783.2,530.7 1785.5,532.4 1787.8,534.3 1790.0,535.7 1790.0,539.7" fill="#0b5345"/>
<polygon points="1837.0,539.7 1837.0,535.4 1839.3,531.1 1841.6,522.8 1843.9,520.7 1846.2,520.4 1848.5,525.4 1850.8,521.6 1853.1,525.1 1855.4,522.7 1857.7,522.9 1860.0,524.5 1862.3,521.7 1864.6,525.8 1866.6,522.7 1866.6,539.7" fill="#39ff3b"/>
<path d="M283.0 540.0L290.6 535.2" stroke="#8f8f8f" stroke-width="6" stroke-linecap="butt"/>
<path d="M290.6 535.2L295.7 539.2" stroke="#e0e0e0" stroke-width="6" stroke-linecap="butt"/>
<path d="M295.7 539.2L303.3 538.8" stroke="#8f8f8f" stroke-width="6" stroke-linecap="butt"/>
<path d="M303.3 538.8L309.9 537.8" stroke="#8f8f8f" stroke-width="6" stroke-linecap="butt"/>
<path d="M309.9 537.8L316.6 541.5" stroke="#e0e0e0" stroke-width="6" stroke-linecap="butt"/>
<path d="M316.6 541.5L323.3 540.3" stroke="#bdbdbd" stroke-width="6" stroke-linecap="butt"/>
<path d="M323.3 540.3L329.7 541.3" stroke="#fff" stroke-width="6" stroke-linecap="butt"/>
<path d="M329.7 541.3L337.1 538.5" stroke="#fff" stroke-width="6" stroke-linecap="butt"/>
<path d="M337.1 538.5L343.0 537.0" stroke="#fff" stroke-width="6" stroke-linecap="butt"/>
<path d="M343.0 537.0L350.9 539.5" stroke="#8f8f8f" stroke-width="6" stroke-linecap="butt"/>
<path d="M350.9 539.5L356.1 538.6" stroke="#9e9e9e" stroke-width="6" stroke-linecap="butt"/>
<path d="M356.1 538.6L362.4 539.2" stroke="#8f8f8f" stroke-width="6" stroke-linecap="butt"/>
<path d="M362.4 539.2L368.2 541.5" stroke="#fff" stroke-width="6" stroke-linecap="butt"/>
<path d="M368.2 541.5L374.7 540.9" stroke="#fff" stroke-width="6" stroke-linecap="butt"/>
<path d="M374.7 540.9L380.5 541.4" stroke="#e0e0e0" stroke-width="6" stroke-linecap="butt"/>
<path d="M380.5 541.4L387.1 538.8" stroke="#fff" stroke-width="6" stroke-linecap="butt"/>
<path d="M387.1 538.8L393.4 541.8" stroke="#8f8f8f" stroke-width="6" stroke-linecap="butt"/>
<path d="M500.0 539.6L505.8 537.5" stroke="#fff" stroke-width="6" stroke-linecap="butt"/>
<path d="M505.8 537.5L510.8 540.1" stroke="#8f8f8f" stroke-width="6" stroke-linecap="butt"/>
<path d="M510.8 540.1L518.3 540.2" stroke="#bdbdbd" stroke-width="6" stroke-linecap="butt"/>
<path d="M518.3 540.2L526.2 540.4" stroke="#fff" stroke-width="6" stroke-linecap="butt"/>
<path d="M526.2 540.4L531.5 537.1" stroke="#9e9e9e" stroke-width="6" stroke-linecap="butt"/>
<path d="M531.5 537.1L539.3 535.5" stroke="#fff" stroke-width="6" stroke-linecap="butt"/>
<path d="M539.3 535.5L546.9 540.7" stroke="#bdbdbd" stroke-width="6" stroke-linecap="butt"/>
<path d="M546.9 540.7L552.4 536.3" stroke="#fff" stroke-width="6" stroke-linecap="butt"/>
<path d="M552.4 536.3L559.6 539.6" stroke="#e0e0e0" stroke-width="6" stroke-linecap="butt"/>
<path d="M559.6 539.6L564.6 538.7" stroke="#fff" stroke-width="6" stroke-linecap="butt"/>
<path d="M564.6 538.7L570.2 541.1" stroke="#fff" stroke-width="6" stroke-linecap="butt"/>
<path d="M570.2 541.1L576.8 534.8" stroke="#e0e0e0" stroke-width="6" stroke-linecap="butt"/>
<path d="M699.0 535.0L704.6 534.8" stroke="#fff" stroke-width="6" stroke-linecap="butt"/>
<path d="M704.6 534.8L710.9 537.5" stroke="#fff" stroke-width="6" stroke-linecap="butt"/>
<path d="M710.9 537.5L718.6 535.0" stroke="#bdbdbd" stroke-width="6" stroke-linecap="butt"/>
<path d="M718.6 535.0L726.5 535.4" stroke="#e0e0e0" stroke-width="6" stroke-linecap="butt"/>
<path d="M726.5 535.4L734.0 537.4" stroke="#bdbdbd" stroke-width="6" stroke-linecap="butt"/>
<path d="M765.0 536.6L771.3 541.5" stroke="#fff" stroke-width="6" stroke-linecap="butt"/>
<path d="M771.3 541.5L777.6 540.8" stroke="#bdbdbd" stroke-width="6" stroke-linecap="butt"/>
<path d="M777.6 540.8L784.2 537.3" stroke="#e0e0e0" stroke-width="6" stroke-linecap="butt"/>
<path d="M1001.7 540.3L1006.7 538.7" stroke="#9e9e9e" stroke-width="6" stroke-linecap="butt"/>
<path d="M1006.7 538.7L1012.1 537.1" stroke="#8f8f8f" stroke-width="6" stroke-linecap="butt"/>
<path d="M1012.1 537.1L1018.0 538.2" stroke="#fff" stroke-width="6" stroke-linecap="butt"/>
<path d="M1281.0 540.1L1286.6 539.7" stroke="#fff" stroke-width="6" stroke-linecap="butt"/>
<path d="M1286.6 539.7L1292.1 536.5" stroke="#bdbdbd" stroke-width="6" stroke-linecap="butt"/>
<path d="M1292.1 536.5L1299.5 535.8" stroke="#8f8f8f" stroke-width="6" stroke-linecap="butt"/>
<path d="M1419.5 536.7L1427.3 540.8" stroke="#8f8f8f" stroke-width="6" stroke-linecap="butt"/>
<path d="M1544.0 539.7L1550.7 541.9" stroke="#fff" stroke-width="6" stroke-linecap="butt"/>
<path d="M1550.7 541.9L1558.6 539.4" stroke="#e0e0e0" stroke-width="6" stroke-linecap="butt"/>
<path d="M1558.6 539.4L1563.8 538.6" stroke="#fff" stroke-width="6" stroke-linecap="butt"/>
<path d="M1563.8 538.6L1569.6 536.8" stroke="#9e9e9e" stroke-width="6" stroke-linecap="butt"/>
<path d="M1569.6 536.8L1574.9 539.9" stroke="#e0e0e0" stroke-width="6" stroke-linecap="butt"/>
<path d="M1574.9 539.9L1581.8 536.8" stroke="#fff" stroke-width="6" stroke-linecap="butt"/>
<path d="M1581.8 536.8L1587.5 542.1" stroke="#fff" stroke-width="6" stroke-linecap="butt"/>
<path d="M1587.5 542.1L1594.2 539.9" stroke="#8f8f8f" stroke-width="6" stroke-linecap="butt"/>
<path d="M1594.2 539.9L1599.9 541.8" stroke="#8f8f8f" stroke-width="6" stroke-linecap="butt"/>
<path d="M1599.9 541.8L1607.1 538.5" stroke="#bdbdbd" stroke-width="6" stroke-linecap="butt"/>
<path d="M1607.1 538.5L1612.4 538.0" stroke="#fff" stroke-width="6" stroke-linecap="butt"/>
<path d="M1612.4 538.0L1617.5 536.3" stroke="#fff" stroke-width="6" stroke-linecap="butt"/>
<path d="M1617.5 536.3L1624.8 535.5" stroke="#9e9e9e" stroke-width="6" stroke-linecap="butt"/>
<path d="M1624.8 535.5L1630.4 537.3" stroke="#e0e0e0" stroke-width="6" stroke-linecap="butt"/>
<path d="M1630.4 537.3L1638.4 535.9" stroke="#9e9e9e" stroke-width="6" stroke-linecap="butt"/>
<path d="M1638.4 535.9L1644.6 538.7" stroke="#e0e0e0" stroke-width="6" stroke-linecap="butt"/>
<path d="M1644.6 538.7L1649.7 538.9" stroke="#9e9e9e" stroke-width="6" stroke-linecap="butt"/>
<path d="M1649.7 538.9L1654.9 537.1" stroke="#e0e0e0" stroke-width="6" stroke-linecap="butt"/>
<path d="M1654.9 537.1L1660.9 542.2" stroke="#bdbdbd" stroke-width="6" stroke-linecap="butt"/>
<path d="M1722.5 539.9L1730.5 540.0" stroke="#fff" stroke-width="6" stroke-linecap="butt"/>
<path d="M1730.5 540.0L1735.5 534.9" stroke="#fff" stroke-width="6" stroke-linecap="butt"/>
<path d="M1735.5 534.9L1741.2 539.7" stroke="#9e9e9e" stroke-width="6" stroke-linecap="butt"/>
<path d="M1741.2 539.7L1749.0 535.6" stroke="#fff" stroke-width="6" stroke-linecap="butt"/>
<path d="M1749.0 535.6L1756.0 539.8" stroke="#fff" stroke-width="6" stroke-linecap="butt"/>
<path d="M1756.0 539.8L1761.1 541.5" stroke="#fff" stroke-width="6" stroke-linecap="butt"/>
<path d="M1761.1 541.5L1767.1 537.5" stroke="#fff" stroke-width="6" stroke-linecap="butt"/>
<path d="M1790.0 539.5L1797.9 540.9" stroke="#fff" stroke-width="6" stroke-linecap="butt"/>
<path d="M1797.9 540.9L1805.1 537.4" stroke="#bdbdbd" stroke-width="6" stroke-linecap="butt"/>
<path d="M1805.1 537.4L1810.1 542.2" stroke="#e0e0e0" stroke-width="6" stroke-linecap="butt"/>
<path d="M1810.1 542.2L1815.3 535.0" stroke="#8f8f8f" stroke-width="6" stroke-linecap="butt"/>
<path d="M1815.3 535.0L1822.1 542.1" stroke="#8f8f8f" stroke-width="6" stroke-linecap="butt"/>
<path d="M1822.1 542.1L1828.4 536.3" stroke="#fff" stroke-width="6" stroke-linecap="butt"/>
<path d="M1828.4 536.3L1833.5 535.9" stroke="#fff" stroke-width="6" stroke-linecap="butt"/>
<rect x="296.6" y="538.7" width="1.400" height="1.400" fill="#c62828"/>
<rect x="283.1" y="538.2" width="1.400" height="1.400" fill="#c62828"/>
<rect x="287.9" y="539.4" width="1.400" height="1.400" fill="#c62828"/>
<rect x="297.4" y="540.0" width="1.400" height="1.400" fill="#c62828"/>
<rect x="293.9" y="537.2" width="1.400" height="1.400" fill="#c62828"/>
<rect x="286.1" y="539.5" width="1.400" height="1.400" fill="#c62828"/>
<rect x="287.0" y="536.8" width="1.400" height="1.400" fill="#c62828"/>
<rect x="296.9" y="538.9" width="1.400" height="1.400" fill="#c62828"/>
<rect x="297.2" y="541.5" width="1.400" height="1.400" fill="#c62828"/>
<rect x="290.0" y="537.8" width="1.400" height="1.400" fill="#c62828"/>
<rect x="298.0" y="539.1" width="1.400" height="1.400" fill="#c62828"/>
<rect x="283.2" y="539.7" width="1.400" height="1.400" fill="#c62828"/>
<rect x="297.5" y="542.3" width="1.400" height="1.400" fill="#c62828"/>
<rect x="293.2" y="539.6" width="1.400" height="1.400" fill="#c62828"/>
<rect x="299.1" y="541.9" width="1.400" height="1.400" fill="#c62828"/>
<rect x="285.7" y="538.3" width="1.400" height="1.400" fill="#c62828"/>
<rect x="285.2" y="541.5" width="1.400" height="1.400" fill="#c62828"/>
<rect x="298.4" y="541.1" width="1.400" height="1.400" fill="#c62828"/>
<rect x="292.4" y="539.6" width="1.400" height="1.400" fill="#c62828"/>
<rect x="283.7" y="541.1" width="1.400" height="1.400" fill="#c62828"/>
<rect x="316.9" y="539.9" width="1.400" height="1.400" fill="#c62828"/>
<rect x="303.2" y="541.1" width="1.400" height="1.400" fill="#c62828"/>
<rect x="301.8" y="537.6" width="1.400" height="1.400" fill="#c62828"/>
<rect x="302.3" y="539.3" width="1.400" height="1.400" fill="#c62828"/>
<rect x="314.1" y="539.0" width="1.400" height="1.400" fill="#c62828"/>
<rect x="306.2" y="538.4" width="1.400" height="1.400" fill="#c62828"/>
<rect x="308.0" y="538.8" width="1.400" height="1.400" fill="#c62828"/>
<rect x="302.4" y="539.9" width="1.400" height="1.400" fill="#c62828"/>
<rect x="306.0" y="541.9" width="1.400" height="1.400" fill="#c62828"/>
<rect x="319.9" y="537.7" width="1.400" height="1.400" fill="#c62828"/>
<rect x="316.2" y="537.9" width="1.400" height="1.400" fill="#c62828"/>
<rect x="317.9" y="539.7" width="1.400" height="1.400" fill="#c62828"/>
<rect x="317.7" y="539.9" width="1.400" height="1.400" fill="#c62828"/>
<rect x="312.8" y="539.3" width="1.400" height="1.400" fill="#c62828"/>
<rect x="314.1" y="538.8" width="1.400" height="1.400" fill="#c62828"/>
<rect x="314.6" y="539.7" width="1.400" height="1.400" fill="#c62828"/>
<rect x="305.8" y="539.6" width="1.400" height="1.400" fill="#c62828"/>
<rect x="308.6" y="541.5" width="1.400" height="1.400" fill="#c62828"/>
<rect x="309.0" y="540.6" width="1.400" height="1.400" fill="#c62828"/>
<rect x="313.5" y="540.1" width="1.400" height="1.400" fill="#c62828"/>
<rect x="302.8" y="537.1" width="1.400" height="1.400" fill="#c62828"/>
<rect x="304.9" y="537.5" width="1.400" height="1.400" fill="#c62828"/>
<rect x="300.2" y="542.1" width="1.400" height="1.400" fill="#c62828"/>
<rect x="310.5" y="541.9" width="1.400" height="1.400" fill="#c62828"/>
<rect x="495.0" y="537.1" width="1.400" height="1.400" fill="#c62828"/>
<rect x="482.2" y="538.9" width="1.400" height="1.400" fill="#c62828"/>
<rect x="482.2" y="540.3" width="1.400" height="1.400" fill="#c62828"/>
<rect x="498.4" y="541.6" width="1.400" height="1.400" fill="#c62828"/>
<rect x="486.0" y="541.6" width="1.400" height="1.400" fill="#c62828"/>
<rect x="490.2" y="537.5" width="1.400" height="1.400" fill="#c62828"/>
<rect x="483.7" y="541.5" width="1.400" height="1.400" fill="#c62828"/>
<rect x="497.6" y="537.3" width="1.400" height="1.400" fill="#c62828"/>
<rect x="481.8" y="538.8" width="1.400" height="1.400" fill="#c62828"/>
<rect x="483.5" y="541.2" width="1.400" height="1.400" fill="#c62828"/>
<rect x="481.7" y="537.3" width="1.400" height="1.400" fill="#c62828"/>
<rect x="498.8" y="537.5" width="1.400" height="1.400" fill="#c62828"/>
<rect x="495.3" y="540.3" width="1.400" height="1.400" fill="#c62828"/>
<rect x="483.2" y="541.8" width="1.400" height="1.400" fill="#c62828"/>
<rect x="483.4" y="540.9" width="1.400" height="1.400" fill="#c62828"/>
<rect x="493.6" y="537.2" width="1.400" height="1.400" fill="#c62828"/>
<rect x="489.4" y="538.1" width="1.400" height="1.400" fill="#c62828"/>
<rect x="482.3" y="541.5" width="1.400" height="1.400" fill="#c62828"/>
<rect x="493.0" y="539.6" width="1.400" height="1.400" fill="#c62828"/>
<rect x="498.1" y="538.9" width="1.400" height="1.400" fill="#c62828"/>
<rect x="495.5" y="539.0" width="1.400" height="1.400" fill="#c62828"/>
<rect x="486.8" y="541.5" width="1.400" height="1.400" fill="#c62828"/>
<rect x="490.1" y="542.0" width="1.400" height="1.400" fill="#c62828"/>
<rect x="490.0" y="537.0" width="1.400" height="1.400" fill="#c62828"/>
<rect x="804.4" y="538.2" width="1.400" height="1.400" fill="#c62828"/>
<rect x="794.7" y="538.6" width="1.400" height="1.400" fill="#c62828"/>
<rect x="794.1" y="542.1" width="1.400" height="1.400" fill="#c62828"/>
<rect x="794.6" y="538.6" width="1.400" height="1.400" fill="#c62828"/>
<rect x="798.4" y="538.9" width="1.400" height="1.400" fill="#c62828"/>
<rect x="794.5" y="540.9" width="1.400" height="1.400" fill="#c62828"/>
<rect x="801.4" y="538.4" width="1.400" height="1.400" fill="#c62828"/>
<rect x="796.3" y="540.0" width="1.400" height="1.400" fill="#c62828"/>
<rect x="803.3" y="542.0" width="1.400" height="1.400" fill="#c62828"/>
<rect x="803.4" y="537.0" width="1.400" height="1.400" fill="#c62828"/>
<rect x="791.0" y="539.7" width="1.400" height="1.400" fill="#c62828"/>
<rect x="799.5" y="537.2" width="1.400" height="1.400" fill="#c62828"/>
<rect x="791.2" y="542.0" width="1.400" height="1.400" fill="#c62828"/>
<rect x="791.1" y="539.2" width="1.400" height="1.400" fill="#c62828"/>
<rect x="794.7" y="540.3" width="1.400" height="1.400" fill="#c62828"/>
<rect x="791.9" y="539.4" width="1.400" height="1.400" fill="#c62828"/>
<rect x="797.8" y="538.8" width="1.400" height="1.400" fill="#c62828"/>
<rect x="795.5" y="540.3" width="1.400" height="1.400" fill="#c62828"/>
<rect x="994.3" y="539.2" width="1.400" height="1.400" fill="#c62828"/>
<rect x="995.5" y="537.5" width="1.400" height="1.400" fill="#c62828"/>
<rect x="989.8" y="540.0" width="1.400" height="1.400" fill="#c62828"/>
<rect x="990.1" y="537.9" width="1.400" height="1.400" fill="#c62828"/>
<rect x="998.3" y="542.1" width="1.400" height="1.400" fill="#c62828"/>
<rect x="987.1" y="537.0" width="1.400" height="1.400" fill="#c62828"/>
<rect x="985.0" y="539.8" width="1.400" height="1.400" fill="#c62828"/>
<rect x="988.4" y="536.9" width="1.400" height="1.400" fill="#c62828"/>
<rect x="987.0" y="541.5" width="1.400" height="1.400" fill="#c62828"/>
<rect x="997.5" y="538.4" width="1.400" height="1.400" fill="#c62828"/>
<rect x="996.2" y="537.7" width="1.400" height="1.400" fill="#c62828"/>
<rect x="999.5" y="540.9" width="1.400" height="1.400" fill="#c62828"/>
<rect x="997.5" y="540.0" width="1.400" height="1.400" fill="#c62828"/>
<rect x="990.2" y="536.7" width="1.400" height="1.400" fill="#c62828"/>
<rect x="990.7" y="538.7" width="1.400" height="1.400" fill="#c62828"/>
<rect x="986.2" y="537.7" width="1.400" height="1.400" fill="#c62828"/>
<rect x="991.7" y="537.3" width="1.400" height="1.400" fill="#c62828"/>
<rect x="993.7" y="541.7" width="1.400" height="1.400" fill="#c62828"/>
<rect x="990.2" y="538.8" width="1.400" height="1.400" fill="#c62828"/>
<rect x="1352.3" y="540.9" width="1.400" height="1.400" fill="#c62828"/>
<rect x="1348.4" y="541.0" width="1.400" height="1.400" fill="#c62828"/>
<rect x="1366.2" y="539.3" width="1.400" height="1.400" fill="#c62828"/>
<rect x="1351.1" y="541.3" width="1.400" height="1.400" fill="#c62828"/>
<rect x="1354.4" y="540.2" width="1.400" height="1.400" fill="#c62828"/>
<rect x="1364.2" y="540.7" width="1.400" height="1.400" fill="#c62828"/>
<rect x="1345.3" y="540.5" width="1.400" height="1.400" fill="#c62828"/>
<rect x="1349.2" y="536.8" width="1.400" height="1.400" fill="#c62828"/>
<rect x="1354.3" y="537.8" width="1.400" height="1.400" fill="#c62828"/>
<rect x="1350.5" y="537.5" width="1.400" height="1.400" fill="#c62828"/>
<rect x="1351.6" y="539.0" width="1.400" height="1.400" fill="#c62828"/>
<rect x="1341.9" y="538.6" width="1.400" height="1.400" fill="#c62828"/>
<rect x="1368.8" y="542.6" width="1.400" height="1.400" fill="#c62828"/>
<rect x="1346.5" y="539.0" width="1.400" height="1.400" fill="#c62828"/>
<rect x="1350.8" y="542.7" width="1.400" height="1.400" fill="#c62828"/>
<rect x="1349.2" y="542.6" width="1.400" height="1.400" fill="#c62828"/>
<rect x="1352.2" y="537.2" width="1.400" height="1.400" fill="#c62828"/>
<rect x="1354.5" y="542.4" width="1.400" height="1.400" fill="#c62828"/>
<rect x="1356.8" y="537.0" width="1.400" height="1.400" fill="#c62828"/>
<rect x="1368.4" y="539.3" width="1.400" height="1.400" fill="#c62828"/>
<rect x="1369.9" y="541.9" width="1.400" height="1.400" fill="#c62828"/>
<rect x="1340.5" y="539.4" width="1.400" height="1.400" fill="#c62828"/>
<rect x="1357.8" y="541.2" width="1.400" height="1.400" fill="#c62828"/>
<rect x="1364.2" y="542.4" width="1.400" height="1.400" fill="#c62828"/>
<rect x="1365.1" y="538.3" width="1.400" height="1.400" fill="#c62828"/>
<rect x="1346.1" y="540.7" width="1.400" height="1.400" fill="#c62828"/>
<rect x="1352.4" y="538.7" width="1.400" height="1.400" fill="#c62828"/>
<rect x="1365.7" y="539.1" width="1.400" height="1.400" fill="#c62828"/>
<rect x="1366.1" y="538.2" width="1.400" height="1.400" fill="#c62828"/>
<rect x="1364.7" y="542.4" width="1.400" height="1.400" fill="#c62828"/>
<rect x="1341.0" y="540.8" width="1.400" height="1.400" fill="#c62828"/>
<rect x="1347.9" y="539.4" width="1.400" height="1.400" fill="#c62828"/>
<rect x="1356.2" y="541.1" width="1.400" height="1.400" fill="#c62828"/>
<rect x="1365.8" y="541.5" width="1.400" height="1.400" fill="#c62828"/>
<rect x="1366.5" y="541.0" width="1.400" height="1.400" fill="#c62828"/>
<rect x="1353.1" y="542.5" width="1.400" height="1.400" fill="#c62828"/>
<rect x="1406.4" y="541.0" width="1.400" height="1.400" fill="#c62828"/>
<rect x="1402.8" y="536.8" width="1.400" height="1.400" fill="#c62828"/>
<rect x="1403.6" y="539.4" width="1.400" height="1.400" fill="#c62828"/>
<rect x="1403.8" y="538.6" width="1.400" height="1.400" fill="#c62828"/>
<rect x="1406.5" y="540.7" width="1.400" height="1.400" fill="#c62828"/>
<rect x="1400.3" y="539.8" width="1.400" height="1.400" fill="#c62828"/>
<rect x="1412.3" y="540.9" width="1.400" height="1.400" fill="#c62828"/>
<rect x="1400.9" y="541.8" width="1.400" height="1.400" fill="#c62828"/>
<rect x="1403.2" y="538.3" width="1.400" height="1.400" fill="#c62828"/>
<rect x="1417.2" y="539.2" width="1.400" height="1.400" fill="#c62828"/>
<rect x="1404.5" y="537.5" width="1.400" height="1.400" fill="#c62828"/>
<rect x="1407.4" y="541.5" width="1.400" height="1.400" fill="#c62828"/>
<rect x="1409.3" y="539.2" width="1.400" height="1.400" fill="#c62828"/>
<rect x="1410.0" y="540.9" width="1.400" height="1.400" fill="#c62828"/>
<rect x="1417.7" y="538.5" width="1.400" height="1.400" fill="#c62828"/>
<rect x="1418.1" y="537.4" width="1.400" height="1.400" fill="#c62828"/>
<rect x="1405.7" y="538.2" width="1.400" height="1.400" fill="#c62828"/>
<rect x="1409.2" y="541.8" width="1.400" height="1.400" fill="#c62828"/>
<rect x="1416.6" y="536.8" width="1.400" height="1.400" fill="#c62828"/>
<rect x="1407.6" y="538.9" width="1.400" height="1.400" fill="#c62828"/>
<rect x="1413.7" y="537.7" width="1.400" height="1.400" fill="#c62828"/>
<rect x="1418.9" y="537.3" width="1.400" height="1.400" fill="#c62828"/>
<rect x="230" y="534.7" width="6" height="6" fill="#f8bbd0"/>
<rect x="83" y="566" width="1799" height="31" fill="#0b0b0e"/>
<path d="M83 572.5H1882" stroke="#9c9c9c" stroke-width="1.150" stroke-dasharray="7 9" stroke-dashoffset="-13"/>
<path d="M83 575.5H1882" stroke="#9c9c9c" stroke-width="1.150" stroke-dasharray="7 9" stroke-dashoffset="-13"/>
<path d="M83 581.5H1882" stroke="#9c9c9c" stroke-width="1.150" stroke-dasharray="7 9" stroke-dashoffset="-13"/>
<path d="M83 584.5H1882" stroke="#9c9c9c" stroke-width="1.150" stroke-dasharray="7 9" stroke-dashoffset="-13"/>
<path d="M83 587.5H1882" stroke="#9c9c9c" stroke-width="1.150" stroke-dasharray="7 9" stroke-dashoffset="-13"/>
<path d="M83 590.5H1882" stroke="#9c9c9c" stroke-width="1.150" stroke-dasharray="7 9" stroke-dashoffset="-13"/>
<path d="M83 578.500H1882" stroke="#f5e63a" stroke-width="1.000" stroke-dasharray="7 9" stroke-dashoffset="-13"/>
<path d="M83 568.400H1882" stroke="#26e6f7" stroke-width="2.500" stroke-dasharray="2.500 6.100" stroke-dashoffset="-8"/>
<path d="M83 594.100H1882" stroke="#a020f0" stroke-width="2.500" stroke-dasharray="2.500 6.100" stroke-dashoffset="-8"/>
<polyline points="241.7,593.6 244.0,594.2 246.3,593.0 248.6,594.0 250.9,593.2 253.2,593.2 255.5,594.3 257.8,593.3 260.1,593.2 262.4,593.6 264.7,593.7 267.0,593.1 269.3,593.4 271.6,592.5 273.9,592.8 276.2,592.7 278.5,592.1 280.8,591.1 283.1,589.7 285.4,589.1 287.7,587.8 290.0,586.4 292.3,585.2 294.6,584.3 296.9,585.7 299.2,586.6 301.5,587.5 303.8,587.3 306.1,588.4 308.4,588.3 310.7,590.0 313.0,590.0 315.3,590.1 317.6,589.7 319.9,586.0 322.2,585.8 324.5,583.7 326.8,582.2 329.1,582.9 331.4,583.1 333.7,583.6 336.0,583.2 338.3,583.1 340.6,582.8 342.9,582.3 345.2,582.5 347.5,581.7 349.8,581.4 352.1,578.5 354.4,577.7 356.7,576.5 359.0,576.4 361.3,580.4 363.6,579.9 365.9,583.0 368.2,584.7 370.5,587.8 372.8,585.5 375.1,586.8 377.4,585.5 379.7,586.8 382.0,587.6 384.3,589.5 386.6,589.7 388.9,591.4 391.2,592.8 393.5,593.9 395.8,591.6 398.1,593.8 400.4,593.5 402.7,592.8 405.0,593.3 407.3,592.9 409.6,594.1 411.9,593.3 414.2,593.1 416.5,593.2 418.8,593.2 421.1,593.3 423.4,592.9 425.7,594.6 428.0,592.4 430.3,591.6 432.6,593.4 434.9,593.2 437.2,593.3 439.5,592.8 441.8,592.7 444.1,592.7 446.4,592.9 448.7,591.9 451.0,591.8 453.3,592.9 455.6,592.1 457.9,591.5 460.2,593.6 462.5,593.0 464.8,592.6 467.1,592.6 469.4,593.6 471.7,593.3 474.0,593.4 476.3,592.8 478.6,592.8 480.9,593.3 483.2,592.0 485.5,591.0 487.8,591.8 490.1,591.0 492.4,591.0 494.7,589.5 497.0,587.0 499.3,585.3 501.6,583.6 503.9,582.2 506.2,582.5 508.5,582.2 510.8,580.9 513.1,580.0 515.4,580.0 517.7,579.9 520.0,580.2 522.3,580.6 524.6,580.6 526.9,581.7 529.2,582.2 531.5,584.4 533.8,585.4 536.1,585.9 538.4,585.7 540.7,586.8 543.0,586.7 545.3,585.0 547.6,584.4 549.9,583.7 552.2,583.3 554.5,580.2 556.8,578.9 559.1,575.9 561.4,574.3 563.7,571.9 566.0,572.9 568.3,573.4 570.6,574.8 572.9,573.9 575.2,573.3 577.5,571.9 579.8,570.2 582.1,570.5 584.4,570.6 586.7,569.6 589.0,569.2 591.3,570.0 593.6,571.6 595.9,572.4 598.2,572.5 600.5,574.1 602.8,574.2 605.1,574.5 607.4,576.1 609.7,576.3 612.0,575.9 614.3,576.9 616.6,577.7 618.9,577.7 621.2,578.5 623.5,579.5 625.8,578.8 628.1,580.1 630.4,580.4 632.7,580.2 635.0,579.2 637.3,580.1 639.6,579.5 641.9,580.3 644.2,579.6 646.5,578.0 648.8,576.0 651.1,574.6 653.4,574.5 655.7,573.3 658.0,573.9 660.3,573.7 662.6,573.1 664.9,574.4 667.2,573.2 669.5,575.1 671.8,573.6 674.1,574.2 676.4,576.8 678.7,577.3 681.0,577.5 683.3,578.3 685.6,577.8 687.9,579.1 690.2,579.3 692.5,579.2 694.8,579.2 697.1,578.2 699.4,577.8 701.7,576.7 704.0,576.2 706.3,577.4 708.6,578.1 710.9,579.9 713.2,579.6 715.5,582.1 717.8,580.2 720.1,580.9 722.4,579.4 724.7,580.3 727.0,579.0 729.3,578.8 731.6,578.8 733.9,577.8 736.2,577.3 738.5,576.6 740.8,578.0 743.1,576.5 745.4,576.1 747.7,575.9 750.0,576.6 752.3,573.5 754.6,573.1 756.9,571.3 759.2,570.4 761.5,569.1 763.8,571.2 766.1,573.3 768.4,575.0 770.7,576.4 773.0,576.4 775.3,578.6 777.6,580.8 779.9,582.4 782.2,584.3 784.5,586.9 786.8,588.0 789.1,589.2 791.4,591.3 793.7,591.0 796.0,591.1 798.3,590.1 800.6,589.4 802.9,589.0 805.2,588.4 807.5,589.3 809.8,590.2 812.1,592.0 814.4,591.5 816.7,591.6 819.0,590.8 821.3,589.7 823.6,589.8 825.9,588.3 828.2,588.8 830.5,588.5 832.8,589.4 835.1,590.6 837.4,591.7 839.7,592.5 842.0,593.2 844.3,592.7 846.6,592.3 848.9,593.2 851.2,593.0 853.5,592.3 855.8,593.4 858.1,593.0 860.4,592.3 862.7,593.1 865.0,592.1 867.3,592.4 869.6,592.7 871.9,591.0 874.2,591.3 876.5,590.0 878.8,591.1 881.1,590.7 883.4,591.6 885.7,591.1 888.0,592.1 890.3,593.2 892.6,593.2 894.9,592.0 897.2,593.6 899.5,593.7 901.8,593.2 904.1,594.3 906.4,593.0 908.7,593.7 911.0,594.4 913.3,594.7 915.6,594.3 917.9,591.2 920.2,589.1 922.5,588.6 924.8,586.2 927.1,586.7 929.4,585.9 931.7,587.0 934.0,586.6 936.3,586.3 938.6,585.9 940.9,586.6 943.2,587.1 945.5,588.2 947.8,588.8 950.1,589.6 952.4,588.4 954.7,589.0 957.0,587.4 959.3,587.4 961.6,586.6 963.9,585.8 966.2,585.8 968.5,587.8 970.8,587.4 973.1,588.1 975.4,587.9 977.7,588.0 980.0,587.2 982.3,587.7 984.6,587.4 986.9,587.6 989.2,586.2 991.5,587.8 993.8,587.4 996.1,586.2 998.4,586.6 1000.7,585.1 1003.0,582.3 1005.3,578.8 1007.6,576.4 1009.9,574.1 1012.2,573.3 1014.5,573.3 1016.8,573.9 1019.1,573.0 1021.4,573.6 1023.7,573.5 1026.0,573.8 1028.3,574.5 1030.6,574.3 1032.9,574.8 1035.2,574.9 1037.5,574.2 1039.8,573.0 1042.1,572.9 1044.4,571.9 1046.7,571.0 1049.0,572.2 1051.3,572.8 1053.6,572.7 1055.9,574.0 1058.2,574.2 1060.5,574.6 1062.8,573.9 1065.1,573.6 1067.4,574.9 1069.7,574.9 1072.0,575.3 1074.3,575.3 1076.6,575.9 1078.9,575.4 1081.2,576.4 1083.5,576.0 1085.8,575.7 1088.1,577.2 1090.4,578.1 1092.7,575.8 1095.0,576.7 1097.3,575.2 1099.6,574.8 1101.9,574.4 1104.2,573.7 1106.5,571.9 1108.8,571.3 1111.1,570.4 1113.4,569.4 1115.7,568.2 1118.0,570.4 1120.3,571.5 1122.6,572.7 1124.9,571.5 1127.2,573.1 1129.5,572.2 1131.8,573.6 1134.1,573.9 1136.4,573.1 1138.7,573.1 1141.0,574.1 1143.3,573.6 1145.6,572.0 1147.9,571.5 1150.2,569.5 1152.5,569.8 1154.8,569.5 1157.1,570.1 1159.4,571.5 1161.7,570.5 1164.0,570.5 1166.3,571.7 1168.6,570.9 1170.9,571.1 1173.2,571.0 1175.5,572.0 1177.8,573.6 1180.1,574.7 1182.4,572.6 1184.7,572.8 1187.0,573.2 1189.3,571.2 1191.6,571.3 1193.9,571.1 1196.2,571.6 1198.5,573.4 1200.8,573.8 1203.1,573.7 1205.4,574.5 1207.7,573.0 1210.0,573.1 1212.3,573.8 1214.6,573.1 1216.9,572.5 1219.2,573.6 1221.5,573.9 1223.8,574.7 1226.1,575.8 1228.4,577.4 1230.7,579.6 1233.0,582.1 1235.3,584.3 1237.6,585.9 1239.9,584.3 1242.2,582.4 1244.5,580.2 1246.8,578.7 1249.1,579.6 1251.4,579.1 1253.7,579.7 1256.0,578.9 1258.3,579.4 1260.6,579.1 1262.9,576.3 1265.2,574.7 1267.5,574.0 1269.8,573.8 1272.1,573.5 1274.4,572.2 1276.7,572.0 1279.0,571.9 1281.3,571.3 1283.6,574.5 1285.9,576.9 1288.2,578.8 1290.5,581.9 1292.8,581.9 1295.1,581.3 1297.4,580.8 1299.7,581.7 1302.0,584.7 1304.3,586.4 1306.6,589.2 1308.9,592.6 1311.2,591.3 1313.5,589.3 1315.8,590.7 1318.1,590.1 1320.4,591.1 1322.7,591.9 1325.0,592.5 1327.3,593.6 1329.6,593.8 1331.9,593.5 1334.2,592.4 1336.5,591.2 1338.8,589.8 1341.1,589.7 1343.4,589.0 1345.7,589.9 1348.0,590.9 1350.3,590.8 1352.6,591.0 1354.9,591.0 1357.2,591.5 1359.5,591.3 1361.8,590.5 1364.1,590.4 1366.4,590.9 1368.7,589.2 1371.0,589.6 1373.3,588.9 1375.6,590.2 1377.9,589.8 1380.2,589.9 1382.5,589.9 1384.8,590.0 1387.1,590.1 1389.4,589.2 1391.7,590.3 1394.0,590.6 1396.3,589.6 1398.6,590.9 1400.9,590.5 1403.2,589.0 1405.5,589.2 1407.8,588.9 1410.1,588.5 1412.4,588.6 1414.7,587.4 1417.0,587.6 1419.3,587.5 1421.6,587.4 1423.9,583.9 1426.2,580.3 1428.5,577.4 1430.8,572.5 1433.1,570.6 1435.4,569.6 1437.7,569.6 1440.0,570.5 1442.3,570.2 1444.6,570.5 1446.9,571.7 1449.2,571.7 1451.5,572.8 1453.8,572.1 1456.1,572.1 1458.4,574.1 1460.7,577.1 1463.0,575.3 1465.3,574.1 1467.6,573.1 1469.9,572.2 1472.2,572.3 1474.5,572.1 1476.8,572.1 1479.1,571.6 1481.4,570.9 1483.7,571.5 1486.0,572.6 1488.3,572.9 1490.6,574.6 1492.9,574.3 1495.2,572.7 1497.5,572.0 1499.8,569.9 1502.1,571.4 1504.4,571.3 1506.7,571.5 1509.0,572.0 1511.3,570.8 1513.6,572.0 1515.9,572.1 1518.2,573.9 1520.5,572.7 1522.8,572.4 1525.1,573.0 1527.4,571.9 1529.7,573.1 1532.0,571.8 1534.3,572.0 1536.6,571.4 1538.9,572.2 1541.2,571.2 1543.5,573.7 1545.8,573.9 1548.1,575.3 1550.4,575.6 1552.7,577.3 1555.0,577.4 1557.3,577.1 1559.6,576.3 1561.9,575.9 1564.2,575.4 1566.5,573.8 1568.8,572.5 1571.1,571.6 1573.4,572.7 1575.7,573.5 1578.0,575.6 1580.3,576.5 1582.6,577.3 1584.9,579.4 1587.2,580.2 1589.5,579.4 1591.8,579.2 1594.1,579.7 1596.4,581.6 1598.7,581.7 1601.0,582.7 1603.3,584.2 1605.6,584.5 1607.9,583.2 1610.2,581.6 1612.5,580.2 1614.8,579.4 1617.1,578.1 1619.4,577.0 1621.7,575.1 1624.0,574.3 1626.3,574.6 1628.6,574.5 1630.9,575.0 1633.2,575.4 1635.5,575.2 1637.8,575.3 1640.1,576.0 1642.4,578.1 1644.7,579.3 1647.0,580.7 1649.3,580.3 1651.6,580.6 1653.9,581.3 1656.2,579.6 1658.5,579.0 1660.8,577.8 1663.1,575.5 1665.4,574.2 1667.7,572.1 1670.0,570.3 1672.3,569.1 1674.6,569.2 1676.9,570.5 1679.2,571.5 1681.5,573.5 1683.8,573.4 1686.1,574.2 1688.4,573.4 1690.7,573.4 1693.0,573.7 1695.3,573.4 1697.6,572.4 1699.9,573.3 1702.2,573.9 1704.5,573.4 1706.8,573.1 1709.1,574.7 1711.4,575.0 1713.7,575.4 1716.0,575.0 1718.3,574.7 1720.6,574.5 1722.9,575.3 1725.2,577.1 1727.5,579.4 1729.8,581.2 1732.1,584.2 1734.4,584.7 1736.7,586.3 1739.0,585.9 1741.3,588.3 1743.6,589.3 1745.9,587.3 1748.2,586.6 1750.5,584.4 1752.8,582.3 1755.1,581.8 1757.4,582.9 1759.7,582.0 1762.0,581.8 1764.3,580.8 1766.6,581.1 1768.9,579.9 1771.2,578.5 1773.5,577.8 1775.8,575.3 1778.1,574.6 1780.4,571.7 1782.7,572.4 1785.0,571.9 1787.3,572.0 1789.6,572.8 1791.9,573.0 1794.2,573.2 1796.5,575.2 1798.8,577.0 1801.1,578.0 1803.4,577.7 1805.7,577.8 1808.0,576.8 1810.3,576.4 1812.6,576.2 1814.9,575.6 1817.2,575.0 1819.5,573.7 1821.8,574.4 1824.1,573.6 1826.4,573.0 1828.7,572.9 1831.0,573.7 1833.3,571.7 1835.6,571.3 1837.9,572.4 1840.2,571.3 1842.5,572.1 1844.8,570.6 1847.1,570.6 1849.4,571.2 1851.7,572.4 1854.0,573.3 1856.3,574.5 1858.6,575.2 1860.9,574.6 1863.2,574.4" stroke="#29b6f6" stroke-width="1.900" fill="none" stroke-linejoin="round"/>
<polyline points="711.1,585.8 727.5,581.1 746.2,580.0 762.6,572.9 776.7,574.1 793.1,576.4 809.5,581.1 832.9,581.1 851.7,585.8 872.8,585.8 884.5,582.3 898.6,585.8 915.0,588.2 938.4,588.2 961.8,589.3 985.3,589.3 1004.0,588.2 1014.1,584.7 1030.5,582.3 1046.9,581.1 1060.9,576.4 1077.3,576.4 1093.7,580.0 1107.8,577.6 1124.2,575.3 1140.6,575.3 1154.7,570.6 1168.7,569.4 1185.1,570.6 1201.5,571.8 1218.0,572.9 1234.4,578.8 1248.4,576.4 1264.8,572.9 1278.9,570.6 1292.9,574.1 1302.3,575.3 1311.7,588.2 1328.1,592.9 1346.8,589.3 1365.6,589.3 1389.0,590.5 1412.5,589.3 1428.9,584.7 1440.6,581.1 1457.0,580.0 1460.0,581.1 1483.4,580.0 1506.9,578.8 1530.3,577.6 1553.7,577.6 1577.2,577.2 1600.6,577.6 1624.0,576.4 1647.5,576.4 1670.9,574.1 1689.7,572.5 1708.4,573.4 1724.8,574.1 1741.2,575.7 1760.0,575.3 1774.0,574.1 1788.1,570.1 1799.8,571.8 1811.5,572.5 1825.6,570.6 1839.7,570.1 1851.4,569.4 1865.4,572.5" stroke="#e040fb" stroke-width="2.100" fill="none" stroke-linejoin="round"/>
<rect x="83.0" y="616.5" width="26.0" height="5.6" fill="#22e6f5"/><rect x="143.8" y="616.5" width="28.4" height="5.6" fill="#22e6f5"/><rect x="206.9" y="616.5" width="28.4" height="5.6" fill="#22e6f5"/><rect x="270.0" y="616.5" width="28.4" height="5.6" fill="#22e6f5"/><rect x="333.1" y="616.5" width="28.4" height="5.6" fill="#22e6f5"/><rect x="396.3" y="616.5" width="28.4" height="5.6" fill="#22e6f5"/><rect x="459.4" y="616.5" width="28.4" height="5.6" fill="#22e6f5"/><rect x="522.5" y="616.5" width="28.4" height="5.6" fill="#22e6f5"/><rect x="585.7" y="616.5" width="28.4" height="5.6" fill="#22e6f5"/><rect x="648.8" y="616.5" width="28.4" height="5.6" fill="#22e6f5"/><rect x="711.9" y="616.5" width="28.4" height="5.6" fill="#22e6f5"/><rect x="775.0" y="616.5" width="28.4" height="5.6" fill="#22e6f5"/><rect x="838.2" y="616.5" width="28.4" height="5.6" fill="#22e6f5"/><rect x="901.3" y="616.5" width="28.4" height="5.6" fill="#22e6f5"/><rect x="964.4" y="616.5" width="28.4" height="5.6" fill="#22e6f5"/><rect x="1027.6" y="616.5" width="28.4" height="5.6" fill="#22e6f5"/><rect x="1090.7" y="616.5" width="28.4" height="5.6" fill="#22e6f5"/><rect x="1153.8" y="616.5" width="28.4" height="5.6" fill="#22e6f5"/><rect x="1217.0" y="616.5" width="28.4" height="5.6" fill="#22e6f5"/><rect x="1280.1" y="616.5" width="28.4" height="5.6" fill="#22e6f5"/><rect x="1343.2" y="616.5" width="28.4" height="5.6" fill="#22e6f5"/><rect x="1406.4" y="616.5" width="28.4" height="5.6" fill="#22e6f5"/><rect x="1469.5" y="616.5" width="28.4" height="5.6" fill="#22e6f5"/><rect x="1532.6" y="616.5" width="28.4" height="5.6" fill="#22e6f5"/><rect x="1595.7" y="616.5" width="28.4" height="5.6" fill="#22e6f5"/><rect x="1658.9" y="616.5" width="28.4" height="5.6" fill="#22e6f5"/><rect x="1722.0" y="616.5" width="28.4" height="5.6" fill="#22e6f5"/><rect x="1785.1" y="616.5" width="28.4" height="5.6" fill="#22e6f5"/><rect x="1848.3" y="616.5" width="28.4" height="5.6" fill="#22e6f5"/>
<rect x="83.0" y="651.0" width="26.0" height="5.6" fill="#22e6f5"/><rect x="143.8" y="651.0" width="28.4" height="5.6" fill="#22e6f5"/><rect x="206.9" y="651.0" width="28.4" height="5.6" fill="#22e6f5"/><rect x="270.0" y="651.0" width="28.4" height="5.6" fill="#22e6f5"/><rect x="333.1" y="651.0" width="28.4" height="5.6" fill="#22e6f5"/><rect x="396.3" y="651.0" width="28.4" height="5.6" fill="#22e6f5"/><rect x="459.4" y="651.0" width="28.4" height="5.6" fill="#22e6f5"/><rect x="522.5" y="651.0" width="28.4" height="5.6" fill="#22e6f5"/><rect x="585.7" y="651.0" width="28.4" height="5.6" fill="#22e6f5"/><rect x="648.8" y="651.0" width="28.4" height="5.6" fill="#22e6f5"/><rect x="711.9" y="651.0" width="28.4" height="5.6" fill="#22e6f5"/><rect x="775.0" y="651.0" width="28.4" height="5.6" fill="#22e6f5"/><rect x="838.2" y="651.0" width="28.4" height="5.6" fill="#22e6f5"/><rect x="901.3" y="651.0" width="28.4" height="5.6" fill="#22e6f5"/><rect x="964.4" y="651.0" width="28.4" height="5.6" fill="#22e6f5"/><rect x="1027.6" y="651.0" width="28.4" height="5.6" fill="#22e6f5"/><rect x="1090.7" y="651.0" width="28.4" height="5.6" fill="#22e6f5"/><rect x="1153.8" y="651.0" width="28.4" height="5.6" fill="#22e6f5"/><rect x="1217.0" y="651.0" width="28.4" height="5.6" fill="#22e6f5"/><rect x="1280.1" y="651.0" width="28.4" height="5.6" fill="#22e6f5"/><rect x="1343.2" y="651.0" width="28.4" height="5.6" fill="#22e6f5"/><rect x="1406.4" y="651.0" width="28.4" height="5.6" fill="#22e6f5"/><rect x="1469.5" y="651.0" width="28.4" height="5.6" fill="#22e6f5"/><rect x="1532.6" y="651.0" width="28.4" height="5.6" fill="#22e6f5"/><rect x="1595.7" y="651.0" width="28.4" height="5.6" fill="#22e6f5"/><rect x="1658.9" y="651.0" width="28.4" height="5.6" fill="#22e6f5"/><rect x="1722.0" y="651.0" width="28.4" height="5.6" fill="#22e6f5"/><rect x="1785.1" y="651.0" width="28.4" height="5.6" fill="#22e6f5"/><rect x="1848.3" y="651.0" width="28.4" height="5.6" fill="#22e6f5"/>
<polyline points="223.0,655.4 225.3,660.5 227.6,656.4 230.0,659.3 232.3,659.6 234.7,658.4 237.0,658.1 239.4,652.9 241.7,653.8 245.2,656.8 247.6,654.6 249.9,653.8 252.6,654.9 255.4,656.6 258.1,660.8 260.5,660.1 262.8,661.5 265.1,662.6 267.5,663.9 271.0,657.3 273.7,656.4 276.5,659.3 279.2,659.2 281.5,648.5 283.9,639.7 287.4,646.8 290.3,637.2 293.3,638.6 295.6,645.3 298.0,647.9 300.3,644.5 302.6,641.2 305.0,639.7 307.3,644.0 309.7,647.7 312.0,651.2 314.4,655.0 316.7,649.3 319.0,646.8 321.4,639.7 323.7,640.5 326.1,633.9 328.4,636.4 330.8,643.2 334.3,631.5 336.6,645.6 339.0,638.8 341.3,632.7 343.7,637.4 346.0,642.1 348.3,639.0 350.7,634.8 353.0,632.6 355.4,622.2 357.7,625.0 360.1,629.1 362.4,633.5 364.7,638.6 368.3,650.3 370.6,646.6 372.9,647.2 375.3,642.1 377.6,646.0 380.0,653.4 382.3,659.6 384.7,656.5 387.0,661.1 389.4,658.4 391.7,662.0 394.0,656.7 396.4,657.3 398.7,663.1 401.1,662.2 403.4,663.2 405.8,660.6 408.1,658.5 410.4,659.5 412.8,657.7 415.1,659.4 417.5,662.9 419.8,659.5 422.2,664.3 424.5,659.9 426.8,655.0 429.2,654.1 431.5,659.6 433.9,662.0 436.6,659.8 439.3,664.8 442.1,662.0 444.7,662.1 447.4,657.9 450.0,654.1 452.6,656.1 455.0,655.7 457.3,658.2 459.7,659.6 462.2,658.6 464.8,661.8 467.4,663.9 470.0,663.1 472.5,664.3 475.5,659.3 478.4,656.1 480.7,657.0 483.1,654.9 485.4,656.7 487.8,654.4 490.1,655.0 492.5,652.8 494.8,644.9 497.2,638.8 499.5,636.2 501.8,633.8 504.2,631.5 506.5,625.9 508.9,621.1 511.2,618.6 513.6,622.3 515.9,626.8 518.8,626.7 521.8,624.5 523.6,602.2 525.3,638.6 527.6,635.8 530.0,640.9 532.3,643.7 534.7,646.7 537.0,650.3 539.3,646.8 541.7,645.3 544.0,646.1 546.4,641.5 548.7,643.9 551.1,642.1 553.4,635.6 555.7,630.3 558.1,624.5 562.3,612.8 565.0,615.3 567.7,618.2 570.5,622.1 573.2,616.3 575.9,613.3 578.7,608.1 582.2,616.3 585.1,615.6 588.0,608.1 590.8,612.1 593.5,614.1 596.2,615.1 598.6,617.5 600.9,617.2 603.3,619.8 605.6,622.2 608.0,626.3 610.3,624.5 612.7,622.9 615.0,627.3 617.3,626.8 619.7,631.5 622.0,633.4 624.4,636.2 626.7,635.9 629.1,635.5 631.4,635.5 633.7,630.4 636.1,633.6 638.4,635.4 640.8,634.3 643.1,635.0 646.0,629.9 649.0,622.1 651.9,623.5 654.8,624.5 657.4,623.0 660.0,619.8 662.6,619.9 665.1,619.4 667.7,615.1 670.1,618.6 672.4,623.3 674.8,626.8 677.7,625.5 680.6,622.1 683.0,626.2 685.3,631.9 687.6,634.8 690.0,638.6 692.9,632.9 695.8,631.5 698.4,630.6 701.0,634.6 703.6,635.3 706.2,637.1 708.7,636.2 711.1,636.1 713.4,635.6 715.8,632.0 718.1,636.7 720.5,633.9 724.0,629.2 727.5,636.2 729.8,633.2 732.2,635.1 734.5,630.0 736.9,629.4 739.2,629.2 742.1,632.9 745.1,636.2 747.6,629.8 750.2,623.7 752.8,620.8 755.4,614.8 758.0,608.1 760.3,617.5 762.6,625.7 765.0,617.5 767.3,620.3 769.7,623.0 772.0,627.1 774.4,631.5 776.7,640.7 779.0,651.7 781.4,662.0 784.9,644.4 787.2,650.8 789.6,654.2 791.9,659.6 794.3,655.3 796.6,652.7 799.0,653.0 801.3,647.9 803.7,654.0 806.0,659.6 808.9,656.5 811.9,652.6 814.8,654.2 817.7,655.0 820.1,655.0 822.4,653.3 824.7,654.1 827.1,652.6 829.4,650.3 832.2,648.5 834.9,656.3 837.6,659.6 840.0,665.4 842.3,659.0 844.7,662.2 847.0,664.6 849.4,663.5 851.7,664.3 854.0,665.7 856.4,660.3 858.7,659.4 861.1,660.3 863.4,659.6 865.8,658.4 868.1,657.8 870.4,660.6 872.8,659.6 875.7,654.8 878.6,649.1 881.4,651.8 884.1,653.9 886.8,657.3 890.4,655.0 893.1,657.7 895.8,659.4 898.6,662.0 901.5,656.6 904.4,653.8 906.8,665.5 909.5,665.2 912.2,663.8 915.0,662.0 917.3,650.3 919.7,648.5 922.0,647.5 924.3,644.4 927.9,647.9 930.2,644.3 932.5,644.2 934.9,641.8 937.2,640.9 939.6,645.5 941.9,646.4 944.3,651.5 946.6,652.9 949.0,652.6 951.9,649.1 954.8,646.8 957.2,644.2 959.5,646.2 961.8,644.2 964.2,643.7 966.5,643.2 968.9,644.4 971.2,650.1 973.6,652.3 975.9,655.0 978.2,656.2 980.6,656.7 982.9,655.2 985.3,657.3 987.6,650.6 990.0,651.0 992.3,647.4 994.7,645.6 997.0,644.7 999.3,645.6 1002.1,636.3 1004.8,623.5 1007.5,612.8 1011.1,610.4 1013.4,621.2 1015.7,626.8 1018.7,619.8 1021.1,618.6 1023.4,618.0 1025.8,616.3 1028.1,613.9 1031.1,620.6 1034.0,624.5 1036.3,619.6 1038.7,620.9 1041.0,616.3 1043.4,615.6 1045.7,612.9 1048.0,614.7 1050.4,612.8 1053.1,613.4 1055.9,615.0 1058.6,612.8 1060.9,617.5 1063.3,619.8 1065.6,618.9 1068.0,613.9 1070.3,615.1 1072.7,619.1 1075.0,620.0 1077.3,618.6 1080.9,629.2 1083.2,628.7 1085.5,625.7 1089.1,630.4 1091.4,628.4 1093.7,627.0 1096.1,622.1 1098.8,619.9 1101.6,621.8 1104.3,619.8 1106.6,617.2 1109.0,612.8 1111.3,612.5 1113.7,609.3 1116.6,614.5 1119.5,618.6 1122.5,618.6 1125.4,612.8 1127.7,617.6 1130.1,616.5 1132.4,619.1 1134.8,625.7 1137.7,620.3 1140.6,615.1 1143.5,612.4 1146.5,610.4 1150.0,615.1 1152.6,611.2 1155.3,608.0 1157.9,607.8 1160.5,605.7 1164.0,615.1 1166.4,609.6 1168.7,608.1 1171.7,611.0 1174.6,616.3 1177.2,616.0 1179.9,613.2 1182.5,609.7 1185.1,609.3 1188.7,615.1 1191.6,621.4 1194.5,631.5 1196.9,624.2 1199.2,617.5 1201.5,616.3 1203.9,609.3 1206.2,616.0 1208.6,624.5 1212.1,618.6 1214.8,624.7 1217.6,623.5 1220.3,628.0 1222.6,625.9 1225.0,624.5 1227.6,631.2 1230.3,634.3 1232.9,641.3 1235.5,646.8 1238.3,639.4 1241.0,637.7 1243.7,631.5 1246.7,630.0 1249.6,624.5 1253.1,631.5 1256.6,638.6 1259.0,631.8 1261.3,627.6 1263.7,621.0 1266.0,612.4 1268.3,610.4 1271.9,618.6 1274.2,623.0 1276.5,619.1 1278.9,619.2 1281.2,617.5 1283.6,625.5 1285.9,632.6 1288.3,639.7 1290.6,641.8 1292.9,632.7 1295.3,633.9 1297.6,638.7 1300.0,643.9 1302.3,649.7 1304.7,656.6 1307.0,660.8 1309.4,654.3 1311.7,650.3 1314.0,651.1 1316.4,654.4 1318.7,660.2 1321.1,664.1 1323.4,665.5 1325.8,662.8 1328.1,657.3 1330.4,661.2 1332.8,659.6 1335.1,656.4 1337.5,656.6 1339.8,653.8 1342.2,650.3 1344.5,651.6 1346.8,652.3 1349.2,656.7 1351.5,655.7 1353.9,658.5 1356.2,656.0 1358.6,652.9 1360.9,652.6 1363.3,655.3 1365.6,651.9 1367.9,650.9 1370.3,651.4 1372.6,652.2 1375.0,653.4 1377.3,655.1 1379.7,656.1 1382.0,652.6 1384.3,653.0 1386.7,655.2 1389.0,655.6 1391.4,651.5 1393.7,652.6 1396.1,652.0 1398.4,650.0 1400.7,646.2 1403.1,648.7 1405.4,646.6 1407.8,649.1 1410.1,646.8 1412.5,642.9 1414.8,639.7 1417.2,636.2 1420.1,622.0 1423.0,612.8 1425.7,612.7 1428.3,608.9 1430.9,612.3 1433.6,611.6 1435.9,620.4 1438.2,624.5 1440.6,616.6 1442.9,612.8 1445.3,615.4 1447.6,617.5 1450.0,615.9 1452.3,617.5 1454.9,621.7 1457.4,622.3 1460.0,624.5 1462.3,625.4 1464.7,628.0 1467.0,618.1 1469.4,615.1 1472.1,611.3 1474.8,608.7 1477.6,609.3 1480.5,616.8 1483.4,616.3 1485.8,617.9 1488.1,618.3 1490.5,619.8 1492.8,614.6 1495.2,613.9 1497.7,616.4 1500.3,611.0 1502.9,615.1 1505.5,613.9 1508.0,611.6 1510.4,613.8 1512.7,614.6 1515.1,617.7 1517.4,619.8 1520.1,615.8 1522.7,617.4 1525.3,617.4 1528.0,612.8 1531.5,618.6 1535.0,613.9 1537.3,617.5 1539.7,619.8 1542.0,618.9 1544.4,622.1 1548.6,637.4 1551.4,624.5 1553.7,624.2 1556.1,621.2 1558.4,622.1 1560.8,632.7 1563.1,630.8 1565.5,630.4 1567.8,624.9 1570.1,621.3 1572.5,610.4 1574.8,624.6 1577.2,638.6 1579.5,640.4 1581.9,642.1 1583.7,652.6 1586.6,636.2 1590.1,640.9 1592.4,635.3 1594.8,636.5 1597.1,633.9 1599.4,637.6 1601.8,644.4 1604.5,638.9 1607.3,635.6 1610.0,635.0 1612.9,631.8 1615.8,628.0 1619.4,630.4 1622.3,622.6 1625.2,616.3 1627.6,629.2 1629.9,639.7 1632.3,628.2 1634.6,617.5 1636.9,622.1 1639.3,626.8 1641.6,633.4 1644.0,635.0 1646.3,635.0 1648.7,633.5 1651.0,633.3 1653.3,629.8 1655.7,628.0 1659.2,631.5 1661.5,622.8 1663.9,617.5 1666.2,613.8 1668.6,610.1 1670.9,611.0 1673.3,608.1 1675.6,615.1 1678.5,612.7 1681.5,611.6 1685.0,616.3 1687.9,617.2 1690.8,616.3 1693.6,620.1 1696.3,619.6 1699.0,623.3 1701.4,624.4 1703.7,627.0 1706.1,625.7 1708.4,622.7 1710.8,621.0 1713.1,616.3 1715.4,617.9 1717.8,618.6 1720.1,622.1 1723.7,622.1 1725.3,659.6 1728.3,639.7 1730.7,642.3 1733.0,645.6 1736.5,642.1 1739.5,648.2 1742.4,660.8 1744.7,654.4 1747.1,645.6 1749.4,641.2 1751.8,640.8 1754.1,635.0 1756.9,634.5 1759.6,638.4 1762.3,639.7 1764.7,638.0 1767.0,635.0 1769.9,634.1 1772.9,633.9 1775.8,621.6 1778.7,608.1 1781.1,612.7 1783.4,619.8 1785.8,616.4 1788.1,614.3 1790.4,615.1 1792.8,616.5 1795.1,618.4 1797.5,622.1 1799.8,633.9 1802.2,630.8 1804.5,626.8 1806.8,626.2 1809.2,626.8 1811.5,623.9 1813.9,622.1 1816.2,618.3 1818.6,619.8 1820.9,616.8 1823.3,615.8 1825.6,612.8 1827.9,618.6 1830.3,614.0 1832.6,613.9 1835.0,618.6 1837.3,615.3 1839.7,612.8 1842.0,613.1 1844.3,609.8 1846.7,610.5 1849.0,609.3 1851.4,615.0 1853.7,622.1 1857.2,626.8 1860.7,619.8" stroke="#22e6f5" stroke-width="2.500" fill="none" stroke-linejoin="miter"/>
<rect x="83" y="697.400" width="1799" height="27.200" fill="#12041a"/>
<rect x="83.0" y="695.2" width="19.2" height="4.3" fill="#22e6f5"/><rect x="128.1" y="695.2" width="21.5" height="4.3" fill="#22e6f5"/><rect x="175.4" y="695.2" width="21.5" height="4.3" fill="#22e6f5"/><rect x="222.8" y="695.2" width="21.5" height="4.3" fill="#22e6f5"/><rect x="270.1" y="695.2" width="21.5" height="4.3" fill="#22e6f5"/><rect x="317.5" y="695.2" width="21.5" height="4.3" fill="#22e6f5"/><rect x="364.8" y="695.2" width="21.5" height="4.3" fill="#22e6f5"/><rect x="412.2" y="695.2" width="21.5" height="4.3" fill="#22e6f5"/><rect x="459.5" y="695.2" width="21.5" height="4.3" fill="#22e6f5"/><rect x="506.9" y="695.2" width="21.5" height="4.3" fill="#22e6f5"/><rect x="554.2" y="695.2" width="21.5" height="4.3" fill="#22e6f5"/><rect x="601.6" y="695.2" width="21.5" height="4.3" fill="#22e6f5"/><rect x="648.9" y="695.2" width="21.5" height="4.3" fill="#22e6f5"/><rect x="696.3" y="695.2" width="21.5" height="4.3" fill="#22e6f5"/><rect x="743.6" y="695.2" width="21.5" height="4.3" fill="#22e6f5"/><rect x="791.0" y="695.2" width="21.5" height="4.3" fill="#22e6f5"/><rect x="838.3" y="695.2" width="21.5" height="4.3" fill="#22e6f5"/><rect x="885.7" y="695.2" width="21.5" height="4.3" fill="#22e6f5"/><rect x="933.0" y="695.2" width="21.5" height="4.3" fill="#22e6f5"/><rect x="980.4" y="695.2" width="21.5" height="4.3" fill="#22e6f5"/><rect x="1027.7" y="695.2" width="21.5" height="4.3" fill="#22e6f5"/><rect x="1075.1" y="695.2" width="21.5" height="4.3" fill="#22e6f5"/><rect x="1122.4" y="695.2" width="21.5" height="4.3" fill="#22e6f5"/><rect x="1169.8" y="695.2" width="21.5" height="4.3" fill="#22e6f5"/><rect x="1217.1" y="695.2" width="21.5" height="4.3" fill="#22e6f5"/><rect x="1264.4" y="695.2" width="21.5" height="4.3" fill="#22e6f5"/><rect x="1311.8" y="695.2" width="21.5" height="4.3" fill="#22e6f5"/><rect x="1359.1" y="695.2" width="21.5" height="4.3" fill="#22e6f5"/><rect x="1406.5" y="695.2" width="21.5" height="4.3" fill="#22e6f5"/><rect x="1453.8" y="695.2" width="21.5" height="4.3" fill="#22e6f5"/><rect x="1501.2" y="695.2" width="21.5" height="4.3" fill="#22e6f5"/><rect x="1548.5" y="695.2" width="21.5" height="4.3" fill="#22e6f5"/><rect x="1595.9" y="695.2" width="21.5" height="4.3" fill="#22e6f5"/><rect x="1643.2" y="695.2" width="21.5" height="4.3" fill="#22e6f5"/><rect x="1690.6" y="695.2" width="21.5" height="4.3" fill="#22e6f5"/><rect x="1737.9" y="695.2" width="21.5" height="4.3" fill="#22e6f5"/><rect x="1785.3" y="695.2" width="21.5" height="4.3" fill="#22e6f5"/><rect x="1832.6" y="695.2" width="21.5" height="4.3" fill="#22e6f5"/><rect x="1880.0" y="695.2" width="2.0" height="4.3" fill="#22e6f5"/>
<rect x="83.0" y="722.5" width="19.2" height="4.3" fill="#22e6f5"/><rect x="128.1" y="722.5" width="21.5" height="4.3" fill="#22e6f5"/><rect x="175.4" y="722.5" width="21.5" height="4.3" fill="#22e6f5"/><rect x="222.8" y="722.5" width="21.5" height="4.3" fill="#22e6f5"/><rect x="270.1" y="722.5" width="21.5" height="4.3" fill="#22e6f5"/><rect x="317.5" y="722.5" width="21.5" height="4.3" fill="#22e6f5"/><rect x="364.8" y="722.5" width="21.5" height="4.3" fill="#22e6f5"/><rect x="412.2" y="722.5" width="21.5" height="4.3" fill="#22e6f5"/><rect x="459.5" y="722.5" width="21.5" height="4.3" fill="#22e6f5"/><rect x="506.9" y="722.5" width="21.5" height="4.3" fill="#22e6f5"/><rect x="554.2" y="722.5" width="21.5" height="4.3" fill="#22e6f5"/><rect x="601.6" y="722.5" width="21.5" height="4.3" fill="#22e6f5"/><rect x="648.9" y="722.5" width="21.5" height="4.3" fill="#22e6f5"/><rect x="696.3" y="722.5" width="21.5" height="4.3" fill="#22e6f5"/><rect x="743.6" y="722.5" width="21.5" height="4.3" fill="#22e6f5"/><rect x="791.0" y="722.5" width="21.5" height="4.3" fill="#22e6f5"/><rect x="838.3" y="722.5" width="21.5" height="4.3" fill="#22e6f5"/><rect x="885.7" y="722.5" width="21.5" height="4.3" fill="#22e6f5"/><rect x="933.0" y="722.5" width="21.5" height="4.3" fill="#22e6f5"/><rect x="980.4" y="722.5" width="21.5" height="4.3" fill="#22e6f5"/><rect x="1027.7" y="722.5" width="21.5" height="4.3" fill="#22e6f5"/><rect x="1075.1" y="722.5" width="21.5" height="4.3" fill="#22e6f5"/><rect x="1122.4" y="722.5" width="21.5" height="4.3" fill="#22e6f5"/><rect x="1169.8" y="722.5" width="21.5" height="4.3" fill="#22e6f5"/><rect x="1217.1" y="722.5" width="21.5" height="4.3" fill="#22e6f5"/><rect x="1264.4" y="722.5" width="21.5" height="4.3" fill="#22e6f5"/><rect x="1311.8" y="722.5" width="21.5" height="4.3" fill="#22e6f5"/><rect x="1359.1" y="722.5" width="21.5" height="4.3" fill="#22e6f5"/><rect x="1406.5" y="722.5" width="21.5" height="4.3" fill="#22e6f5"/><rect x="1453.8" y="722.5" width="21.5" height="4.3" fill="#22e6f5"/><rect x="1501.2" y="722.5" width="21.5" height="4.3" fill="#22e6f5"/><rect x="1548.5" y="722.5" width="21.5" height="4.3" fill="#22e6f5"/><rect x="1595.9" y="722.5" width="21.5" height="4.3" fill="#22e6f5"/><rect x="1643.2" y="722.5" width="21.5" height="4.3" fill="#22e6f5"/><rect x="1690.6" y="722.5" width="21.5" height="4.3" fill="#22e6f5"/><rect x="1737.9" y="722.5" width="21.5" height="4.3" fill="#22e6f5"/><rect x="1785.3" y="722.5" width="21.5" height="4.3" fill="#22e6f5"/><rect x="1832.6" y="722.5" width="21.5" height="4.3" fill="#22e6f5"/><rect x="1880.0" y="722.5" width="2.0" height="4.3" fill="#22e6f5"/>
<polyline points="138.6,695.8 140.9,697.4 143.3,699.6 145.6,700.5 148.0,699.3 150.3,700.1 152.7,700.4 155.0,698.6 157.9,703.7 160.9,707.5 163.2,710.4 165.5,708.7 168.5,710.9 171.4,715.7 173.7,714.6 176.1,713.4 179.6,722.7 181.9,714.1 184.3,707.5 186.6,706.3 189.0,707.5 192.5,719.2 194.8,719.3 197.2,720.3 199.5,720.4 201.9,724.9 204.2,729.0 206.6,732.1 210.1,713.4 212.7,716.4 215.3,714.1 218.0,710.1 220.6,712.2 223.5,714.2 226.5,715.7 229.2,717.5 231.9,720.4 234.7,723.9 237.0,722.3 239.4,716.5 241.7,713.4 244.0,712.8 246.4,718.5 248.7,720.4 251.1,721.1 253.4,721.0 255.8,722.5 258.1,725.1 260.5,725.5 262.8,727.7 265.1,728.5 267.5,730.5 271.0,715.7 273.7,716.6 276.5,720.0 279.2,718.0 281.5,704.5 283.9,693.4 287.4,705.2 289.7,700.2 292.1,697.7 295.0,704.5 298.0,712.2 300.3,714.6 302.6,712.7 305.0,714.5 307.3,718.4 309.7,716.1 312.0,718.3 314.4,721.6 316.7,717.7 319.0,712.6 321.4,709.2 323.7,706.3 326.1,709.3 328.4,711.0 331.3,709.2 334.3,705.2 336.6,715.7 339.0,711.2 341.3,706.3 343.7,710.0 346.0,714.5 348.3,713.7 350.7,709.5 353.0,705.7 355.4,705.1 357.7,700.5 360.6,704.4 363.6,711.0 365.9,718.3 368.3,725.1 370.6,721.4 372.9,715.7 375.3,711.0 377.6,721.6 380.0,721.6 382.3,723.8 384.7,723.4 387.0,725.1 389.7,722.6 392.5,720.4 395.2,720.4 397.6,725.9 399.9,726.6 402.2,732.7 404.6,734.4 408.1,729.8 410.4,730.7 412.8,730.2 415.1,731.9 417.5,731.7 419.8,731.9 422.2,732.1 424.5,720.7 426.8,713.4 429.2,716.2 431.5,720.2 433.9,721.6 436.2,720.3 438.6,719.1 440.9,715.7 443.3,725.1 445.6,723.5 447.9,718.1 450.3,716.6 452.6,709.8 455.6,710.5 458.5,715.7 460.8,714.2 463.2,713.4 466.1,716.0 469.0,726.2 472.0,731.6 474.9,734.4 478.4,730.9 480.7,729.9 483.1,731.1 485.4,726.9 487.8,723.2 490.1,725.1 492.5,718.4 494.8,705.9 497.2,699.3 500.1,694.5 503.0,693.4 505.4,702.8 508.1,701.4 510.8,701.4 513.6,699.3 515.9,702.4 518.2,707.4 520.6,711.0 523.6,693.4 525.3,716.9 527.6,713.7 530.0,718.7 532.3,715.7 534.7,718.5 537.0,721.6 540.0,716.9 542.3,714.7 544.7,712.2 547.6,713.6 550.5,713.4 552.9,709.2 555.2,704.8 557.6,698.6 559.9,695.4 562.3,691.1 564.6,696.4 567.0,700.5 569.3,703.6 571.6,703.4 574.0,705.2 576.3,701.0 578.7,697.1 581.0,692.3 583.4,690.8 585.7,687.9 588.0,684.9 590.4,682.1 592.7,680.5 596.2,700.5 598.6,701.0 600.9,698.6 603.3,697.0 605.6,699.7 608.0,707.6 610.3,705.2 613.8,712.2 617.3,707.5 619.7,713.9 622.0,718.9 624.4,722.7 626.7,718.9 629.1,714.5 631.4,712.6 633.7,715.5 636.1,713.4 638.4,715.6 640.8,718.1 643.1,720.4 645.5,712.0 647.8,700.5 650.7,699.1 653.7,694.6 657.2,702.8 659.8,701.4 662.5,699.3 665.1,700.7 667.7,695.8 670.1,700.9 672.4,702.8 674.8,708.7 677.1,705.1 679.4,699.3 683.0,711.0 685.3,714.0 687.6,716.5 690.0,719.2 692.3,715.0 694.7,708.7 697.0,708.6 699.4,710.9 701.7,707.5 704.0,709.8 706.4,711.8 708.7,713.4 711.1,712.8 713.4,707.8 715.8,707.8 718.1,703.9 720.5,703.4 722.8,699.3 726.3,713.4 728.7,709.3 731.0,708.4 733.3,702.5 735.7,701.4 738.0,699.3 740.4,704.0 742.7,709.4 745.1,713.4 747.6,710.9 750.2,705.3 752.8,695.2 755.4,690.7 758.0,686.4 760.3,697.1 762.6,704.0 766.2,701.6 768.9,705.0 771.6,705.1 774.4,709.8 776.7,716.4 779.0,719.9 781.4,727.4 784.9,715.7 787.2,718.5 789.6,722.0 791.9,727.6 794.3,732.1 796.6,732.0 799.0,725.1 801.6,726.2 804.2,726.1 806.9,730.6 809.5,727.4 811.9,725.0 814.2,723.7 816.5,721.7 818.9,720.4 821.5,719.0 824.2,715.8 826.8,716.4 829.4,712.2 832.9,722.7 835.3,723.8 837.6,726.5 840.0,727.5 842.3,728.6 844.7,726.7 847.0,726.0 849.4,726.8 851.7,726.2 854.0,724.4 856.4,729.4 858.7,730.9 861.1,724.0 863.4,716.9 865.8,716.7 868.1,716.0 870.4,715.7 873.2,710.0 875.9,702.7 878.6,697.0 881.0,703.8 883.3,708.7 886.1,708.6 888.8,714.7 891.5,715.7 893.9,717.1 896.2,721.9 898.6,723.9 900.9,717.9 903.3,713.4 905.9,717.7 908.5,722.1 911.2,730.3 913.8,733.3 917.3,720.4 919.7,716.7 922.0,714.5 924.3,714.6 926.7,712.2 929.0,718.0 931.4,715.3 933.7,711.9 936.1,708.7 938.4,711.9 940.7,718.0 943.1,715.9 945.4,717.1 947.8,713.0 950.1,714.3 952.5,712.2 954.8,713.9 957.2,713.6 959.5,712.1 961.8,714.5 964.2,713.3 966.5,706.3 968.9,711.2 971.2,716.0 973.6,719.8 975.9,725.1 978.2,717.2 980.6,712.2 982.9,718.8 985.3,726.2 987.6,722.4 990.0,716.8 992.3,714.1 994.7,709.8 997.3,710.4 1000.0,707.5 1002.6,702.3 1005.3,695.6 1007.9,691.5 1010.5,684.1 1014.1,700.5 1016.4,701.3 1018.7,700.6 1021.1,697.5 1023.4,698.1 1026.2,696.2 1028.9,700.9 1031.6,700.5 1034.0,708.7 1036.3,705.0 1038.7,700.5 1041.0,698.0 1043.4,693.4 1046.9,699.3 1049.2,692.2 1051.6,686.4 1055.1,693.4 1057.4,691.9 1059.8,692.3 1062.1,699.7 1064.4,699.3 1066.8,706.3 1069.7,705.2 1072.7,701.6 1075.0,706.1 1077.3,707.5 1080.9,719.2 1083.2,720.1 1085.5,715.7 1089.1,720.4 1091.4,716.5 1093.7,712.6 1096.1,707.5 1098.8,704.6 1101.6,704.4 1104.3,702.8 1106.9,696.2 1109.6,694.9 1112.2,692.2 1114.8,688.7 1117.8,697.4 1120.7,706.3 1123.0,702.7 1125.4,700.5 1127.7,705.7 1130.1,705.1 1132.4,711.2 1134.8,714.5 1137.7,709.2 1140.6,705.2 1143.5,704.0 1146.5,702.8 1150.0,689.9 1152.3,688.8 1154.7,690.5 1157.0,686.4 1159.4,693.0 1161.7,702.8 1164.0,701.0 1166.4,697.3 1168.7,691.2 1171.1,687.6 1174.6,694.6 1177.2,692.5 1179.9,690.4 1182.5,689.8 1185.1,689.9 1187.5,694.7 1189.8,693.4 1192.2,699.6 1194.5,712.2 1196.9,708.8 1199.2,704.0 1201.5,701.8 1203.9,701.6 1206.2,709.7 1208.6,712.2 1212.1,708.7 1214.8,711.1 1217.6,710.6 1220.3,714.5 1222.6,712.0 1225.0,711.0 1227.6,715.4 1230.3,719.4 1232.9,721.9 1235.5,727.4 1238.3,721.5 1241.0,715.8 1243.7,711.0 1246.7,707.6 1249.6,702.8 1253.1,709.8 1256.6,716.9 1259.0,713.5 1261.3,709.7 1263.7,704.7 1266.0,703.1 1268.3,698.1 1271.9,701.6 1274.6,702.0 1277.3,702.7 1280.1,705.2 1282.8,710.0 1285.5,715.6 1288.3,721.6 1290.6,719.5 1292.9,715.6 1295.3,716.9 1297.6,723.3 1300.0,726.7 1302.3,732.2 1304.7,734.1 1307.0,739.1 1309.4,736.2 1311.7,730.9 1314.0,731.9 1316.4,732.4 1318.7,735.7 1321.1,732.9 1323.4,734.4 1325.8,731.2 1328.1,726.2 1330.4,720.7 1332.8,721.2 1335.1,717.2 1337.5,713.0 1339.8,710.7 1342.2,708.7 1345.7,715.7 1348.0,710.8 1350.4,712.2 1353.9,720.4 1356.2,715.3 1358.6,713.6 1360.9,709.8 1363.3,706.8 1365.6,713.2 1367.9,713.9 1370.3,713.4 1372.6,713.4 1375.0,713.5 1377.3,714.8 1379.7,716.1 1382.0,718.1 1384.3,720.4 1386.7,720.7 1389.0,712.8 1391.4,712.7 1393.7,708.7 1396.1,709.7 1398.4,705.5 1400.7,705.6 1403.1,705.2 1405.4,709.1 1407.8,711.0 1410.1,710.0 1412.5,712.9 1414.8,714.2 1417.2,710.9 1419.5,711.0 1421.8,699.2 1424.2,689.9 1426.5,692.6 1428.9,693.4 1431.2,691.6 1433.6,687.6 1435.9,686.4 1438.2,698.1 1440.6,697.1 1442.9,696.7 1445.3,696.5 1447.6,696.7 1450.0,693.5 1452.3,693.4 1454.9,695.4 1457.4,698.8 1460.0,705.2 1463.5,711.0 1467.0,699.3 1469.7,700.3 1472.3,695.2 1474.9,693.4 1477.6,692.3 1479.9,701.2 1482.3,702.8 1485.2,709.2 1488.1,712.2 1490.5,712.4 1492.8,705.7 1495.2,702.8 1497.5,701.1 1499.8,700.6 1502.2,701.7 1504.5,700.6 1506.9,699.3 1509.5,703.4 1512.1,709.7 1514.8,711.9 1517.4,713.4 1519.8,709.4 1522.1,708.7 1525.0,703.5 1528.0,697.0 1530.3,708.7 1532.7,706.6 1535.0,702.8 1537.3,703.2 1539.7,709.2 1542.0,708.6 1544.4,708.7 1548.6,722.7 1551.4,708.7 1553.7,711.3 1556.1,708.7 1558.4,709.8 1560.8,718.0 1563.1,715.2 1565.5,715.7 1568.7,706.3 1572.0,694.6 1574.6,702.5 1577.2,711.0 1579.5,711.3 1581.9,713.4 1583.7,721.6 1586.6,711.0 1590.1,713.4 1592.4,711.7 1594.8,710.5 1597.1,708.7 1599.4,713.0 1601.8,716.9 1604.5,714.2 1607.3,712.9 1610.0,709.8 1612.9,711.3 1615.8,704.0 1619.4,705.2 1622.3,701.6 1625.2,694.6 1627.6,705.6 1629.9,718.0 1632.3,713.5 1634.6,702.8 1636.9,705.0 1639.3,708.7 1641.6,711.0 1644.0,718.0 1646.3,714.8 1648.7,712.6 1651.0,716.3 1653.3,711.7 1655.7,712.2 1659.2,713.4 1661.5,706.5 1663.9,704.0 1666.2,700.5 1668.6,698.4 1670.9,694.2 1673.3,693.4 1675.6,700.5 1678.5,695.5 1681.5,692.3 1685.0,699.3 1687.9,701.6 1690.8,704.0 1693.6,706.1 1696.3,704.9 1699.0,707.5 1701.4,709.1 1703.7,709.4 1706.1,709.8 1708.4,707.5 1710.8,702.8 1713.1,700.5 1715.4,701.0 1717.8,706.6 1720.1,707.5 1723.7,708.7 1726.0,733.3 1728.3,720.4 1730.7,720.7 1733.0,719.2 1736.5,722.7 1739.5,725.2 1742.4,729.8 1744.7,721.5 1747.1,715.7 1749.4,714.4 1751.8,714.0 1754.1,708.7 1756.9,710.4 1759.6,714.8 1762.3,712.2 1764.7,710.3 1767.0,707.5 1769.9,707.4 1772.9,706.3 1775.6,700.0 1778.3,693.9 1781.1,685.2 1784.6,695.8 1787.5,691.7 1790.4,692.3 1792.8,696.8 1795.1,702.7 1797.5,705.2 1799.8,718.0 1802.2,712.2 1804.5,711.0 1806.8,711.9 1809.2,712.2 1811.5,711.5 1813.9,711.2 1816.2,709.3 1818.6,705.2 1820.9,702.4 1823.3,702.8 1825.6,697.0 1827.9,704.0 1830.3,704.6 1832.6,708.7 1835.0,703.0 1837.3,701.6 1839.7,697.8 1842.0,689.9 1844.7,688.2 1847.5,682.7 1850.2,681.7 1853.7,698.1 1857.2,706.3 1860.7,701.6 1863.1,703.9 1865.4,702.8" stroke="#22e6f5" stroke-width="2.400" fill="none" stroke-linejoin="miter"/>
<polyline points="165.5,700.5 166.6,701.1 168.8,702.4 172.1,704.4 176.5,707.1 181.4,709.6 186.6,712.0 192.3,714.3 198.5,716.4 204.3,717.8 209.7,718.4 214.8,718.2 219.4,717.2 223.8,716.6 227.7,716.4 231.3,716.6 234.5,717.2 237.8,717.6 241.2,717.9 244.6,718.0 248.2,718.0 251.7,718.4 255.2,719.1 258.7,720.1 262.2,721.4 265.6,722.2 268.8,722.5 271.9,722.3 274.8,721.5 278.2,720.2 282.0,718.4 286.2,716.0 290.9,713.1 295.6,711.2 300.3,710.3 305.0,710.4 309.7,711.6 314.5,712.3 319.5,712.4 324.6,712.0 329.9,711.2 335.2,710.4 340.4,709.6 345.7,709.0 351.0,708.4 356.0,708.4 360.6,709.0 365.0,710.1 369.1,711.9 373.4,713.5 377.8,715.0 382.3,716.3 387.0,717.5 391.7,718.8 396.4,720.2 401.1,721.9 405.8,723.6 410.0,725.0 413.8,726.0 417.2,726.7 420.1,727.0 423.5,726.8 427.3,726.0 431.5,724.8 436.2,723.0 440.9,721.5 445.6,720.2 450.3,719.1 455.0,718.2 459.7,718.0 464.3,718.4 469.0,719.5 473.7,721.3 478.0,722.6 481.8,723.4 485.1,723.7 488.1,723.6 491.0,722.8 493.9,721.4 496.9,719.2 499.8,716.4 502.7,713.9 505.7,711.6 508.6,709.5 511.5,707.8 514.1,706.5 516.5,705.8 518.5,705.6 520.3,705.9 522.6,706.5 525.6,707.6 529.1,709.0 533.2,710.7 536.3,712.0 538.4,712.9 539.6,713.4 539.8,713.4 540.8,713.2 542.6,712.9 545.3,712.5 548.8,711.9 552.2,711.0 555.4,709.8 558.5,708.4 561.4,706.6 564.2,705.3 566.8,704.4 569.3,704.0 571.6,704.0 574.6,703.2 578.1,701.8 582.2,699.6 586.9,696.7 591.4,694.8 595.8,694.1 600.1,694.5 604.2,695.9 608.4,697.7 612.8,699.7 617.3,702.1 622.0,704.7 626.4,707.0 630.5,708.9 634.3,710.4 637.8,711.6 641.2,712.1 644.4,712.0 647.5,711.2 650.4,709.7 653.6,708.3 657.0,707.0 660.5,705.7 664.4,704.6 668.0,704.0 671.5,704.0 674.9,704.6 678.1,705.7 681.6,706.8 685.2,707.6 689.1,708.4 693.2,709.0 697.5,709.5 701.9,709.9 706.4,710.3 711.1,710.6 715.6,710.6 720.0,710.5 724.3,710.1 728.4,709.5 732.2,709.0 735.7,708.4 738.9,707.8 741.8,707.2 744.8,706.4 747.9,705.4 751.1,704.1 754.3,702.7 757.4,701.9 760.5,701.7 763.5,702.2 766.4,703.4 769.4,704.7 772.5,706.2 775.7,707.8 778.9,709.5 782.2,711.3 785.6,713.1 789.0,714.8 792.5,716.6 796.3,718.2 800.4,719.7 804.8,721.0 809.5,722.1 813.9,722.8 818.0,722.9 821.8,722.6 825.3,721.7 828.8,721.2 832.4,721.0 835.9,721.3 839.4,721.9 842.9,722.5 846.4,723.2 849.9,724.0 853.5,724.9 857.0,725.2 860.5,724.9 864.0,724.0 867.5,722.6 870.9,721.0 874.1,719.2 877.2,717.3 880.1,715.3 883.3,713.9 886.8,713.4 890.7,713.5 894.8,714.4 898.7,715.5 902.5,716.8 906.2,718.3 909.7,720.1 913.1,721.1 916.3,721.4 919.4,721.0 922.3,719.8 925.2,718.8 928.2,717.9 931.1,717.2 934.0,716.6 936.9,716.3 939.9,716.3 942.8,716.6 945.7,717.2 949.1,717.3 952.9,717.0 957.2,716.3 961.8,715.1 966.1,714.4 969.9,714.1 973.3,714.2 976.2,714.8 979.4,715.2 982.9,715.3 986.7,715.3 990.8,715.0 994.1,714.7 996.5,714.6 998.1,714.5 998.9,714.5 1000.2,713.9 1002.0,712.6 1004.4,710.6 1007.3,707.9 1010.5,705.7 1014.1,704.0 1017.9,702.7 1022.0,701.8 1025.9,701.1 1029.7,700.5 1033.4,700.0 1036.9,699.7 1040.6,699.2 1044.4,698.5 1048.3,697.5 1052.4,696.4 1056.4,695.8 1060.2,695.8 1063.9,696.4 1067.4,697.5 1071.3,699.1 1075.7,701.2 1080.6,703.7 1085.8,706.6 1090.5,708.5 1094.6,709.4 1098.1,709.3 1101.1,708.1 1104.0,706.8 1106.9,705.5 1109.9,704.1 1112.8,702.7 1115.6,701.6 1118.2,701.1 1120.7,700.9 1123.0,701.2 1125.5,701.7 1128.2,702.4 1130.9,703.4 1133.9,704.6 1136.8,705.2 1139.7,705.2 1142.7,704.6 1145.6,703.4 1148.5,702.2 1151.5,700.8 1154.4,699.4 1157.3,698.0 1160.2,696.8 1163.2,695.9 1166.1,695.3 1169.0,695.0 1172.3,694.8 1175.8,694.7 1179.6,694.6 1183.7,694.6 1187.6,695.0 1191.4,695.7 1195.1,696.8 1198.6,698.3 1202.4,699.8 1206.5,701.4 1210.9,703.1 1215.6,704.9 1220.1,706.8 1224.5,708.8 1228.8,711.0 1232.9,713.4 1236.7,714.9 1240.2,715.6 1243.4,715.6 1246.4,714.7 1249.4,713.7 1252.7,712.7 1256.0,711.6 1259.6,710.4 1263.1,709.3 1266.6,708.1 1270.1,706.9 1273.6,705.7 1277.1,705.3 1280.6,705.6 1284.2,706.6 1287.7,708.4 1291.0,710.3 1294.3,712.3 1297.3,714.5 1300.3,716.9 1303.1,719.0 1305.7,720.9 1308.2,722.6 1310.5,724.0 1313.0,725.3 1315.6,726.3 1318.4,727.1 1321.4,727.7 1324.3,727.9 1327.2,727.8 1330.1,727.3 1333.1,726.4 1336.2,725.4 1339.4,724.2 1342.7,722.9 1346.3,721.4 1349.8,720.1 1353.3,718.9 1356.8,717.9 1360.3,717.0 1363.7,716.2 1366.9,715.5 1370.0,714.8 1372.9,714.2 1375.7,713.9 1378.3,713.9 1380.8,714.2 1383.2,714.8 1386.0,714.9 1389.2,714.5 1392.8,713.5 1396.9,712.0 1400.9,710.9 1404.7,710.0 1408.4,709.4 1411.9,709.1 1415.7,708.2 1419.8,706.5 1424.2,704.3 1428.9,701.3 1433.4,699.1 1437.8,697.5 1442.1,696.5 1446.2,696.2 1449.7,696.3 1452.7,696.7 1455.2,697.5 1457.1,698.7 1459.6,699.5 1462.6,700.0 1466.2,700.0 1470.3,699.7 1474.2,699.8 1478.0,700.2 1481.7,701.1 1485.2,702.2 1489.0,702.9 1493.1,703.0 1497.5,702.7 1502.2,701.8 1506.9,701.4 1511.6,701.6 1516.2,702.2 1520.9,703.4 1525.6,704.4 1530.3,705.3 1535.0,706.0 1539.7,706.6 1544.2,707.3 1548.6,708.0 1552.9,708.8 1557.0,709.7 1560.9,710.2 1564.7,710.4 1568.4,710.1 1571.9,709.5 1575.4,709.3 1578.9,709.3 1582.5,709.5 1586.0,710.1 1589.5,710.6 1593.0,711.1 1596.5,711.5 1600.0,711.7 1603.5,711.7 1607.1,711.2 1610.6,710.4 1614.1,709.3 1617.3,708.2 1620.2,707.1 1622.9,706.2 1625.2,705.3 1627.7,704.9 1630.3,704.9 1633.1,705.3 1636.1,706.2 1639.1,707.1 1642.4,707.9 1645.7,708.8 1649.2,709.7 1652.9,710.1 1656.7,709.9 1660.7,709.3 1664.8,708.1 1668.6,706.9 1672.1,705.7 1675.3,704.6 1678.2,703.4 1681.0,702.5 1683.7,701.9 1686.2,701.6 1688.5,701.6 1691.1,701.9 1694.1,702.3 1697.3,703.0 1700.8,703.8 1704.3,704.6 1707.8,705.2 1711.3,705.6 1714.9,705.9 1718.2,706.5 1721.5,707.4 1724.5,708.5 1727.5,710.0 1730.4,711.5 1733.3,712.9 1736.2,714.4 1739.2,715.8 1742.1,716.7 1745.0,717.0 1748.0,716.7 1750.9,715.8 1754.1,715.0 1757.6,714.1 1761.4,713.2 1765.5,712.3 1769.4,711.1 1772.9,709.5 1776.1,707.5 1779.0,705.2 1781.7,703.2 1784.0,701.6 1786.0,700.3 1787.8,699.4 1789.9,699.1 1792.2,699.2 1794.8,699.9 1797.8,701.1 1800.7,702.2 1803.6,703.2 1806.6,704.1 1809.5,705.0 1812.4,705.5 1815.3,705.7 1818.3,705.4 1821.2,704.9 1824.1,704.5 1827.1,704.3 1830.0,704.4 1832.9,704.7 1835.7,704.4 1838.3,703.5 1840.8,702.1 1843.2,700.0 1845.2,698.3 1847.0,697.0 1848.4,696.1 1849.6,695.5 1850.9,695.2 1852.4,695.2 1854.0,695.5 1855.8,696.1 1857.5,696.7 1859.3,697.2 1861.0,697.8 1862.8,698.4 1864.1,698.9 1865.0,699.1 1865.4,699.3" stroke="#f2c744" stroke-width="2.400" fill="none" stroke-linejoin="round"/>
<rect x="83" y="753.700" width="1799" height="23.600" fill="#150822"/>
<path d="M83 753.7H1882" stroke="#d9d9d9" stroke-width="1.300" stroke-dasharray="6.500 7.900" stroke-dashoffset="-4"/>
<path d="M83 777.3H1882" stroke="#d9d9d9" stroke-width="1.300" stroke-dasharray="6.500 7.900" stroke-dashoffset="-4"/>
<polyline points="346.0,757.6 352.9,775.5 355.2,758.5 359.8,759.6 364.4,775.9 366.7,775.6 369.0,764.4 371.3,763.3 375.9,772.1 378.2,754.7 380.5,779.2 387.4,754.5 389.7,770.3 394.3,758.6 398.9,776.1 403.5,774.8 408.1,762.4 412.7,772.5 415.0,761.5 419.6,774.1 421.9,757.4 424.2,773.1 428.8,755.5 433.4,777.4 438.0,758.7 442.6,758.7 447.2,766.4 451.8,757.3 454.1,777.1 458.7,753.8 463.3,764.2 467.9,762.2 470.2,768.5 474.8,759.9 477.1,777.7 481.7,777.3 484.0,761.1 488.6,770.8 493.2,755.2 497.8,772.2 502.4,763.4 507.0,775.2 511.6,761.5 516.2,776.6 520.8,757.2 525.4,776.9 530.0,756.7 534.6,756.2 539.2,777.9 543.8,757.0 548.4,778.2 555.3,755.5 557.6,772.4 562.2,753.9 566.8,777.6 573.7,761.1 580.6,779.5 585.2,779.8 587.5,757.3 589.8,770.9 592.1,769.7 594.4,756.5 599.0,776.2 601.3,755.6 605.9,770.1 610.5,753.7 612.8,775.4 617.4,764.7 622.0,774.1 626.6,774.3 628.9,763.3 635.8,771.9 640.4,755.3 645.0,774.7 649.6,757.4 651.9,773.2 656.5,753.6 661.1,773.4 663.4,758.8 665.7,778.0 670.3,777.3 674.9,754.9 677.2,773.4 681.8,758.2 684.1,772.1 691.0,755.1 695.6,776.8 697.9,754.9 700.2,767.8 704.8,768.1 711.7,757.0 716.3,776.8 720.9,757.7 723.2,774.7 727.8,760.0 732.4,770.8 737.0,758.0 739.3,757.3 741.6,776.6 746.2,778.1 750.8,753.8 753.1,778.0 755.4,779.5 762.3,760.0 766.9,764.5 769.2,765.0 776.1,753.8 783.0,776.3 785.3,775.7 789.9,755.4 792.2,773.5 799.1,758.5 803.7,771.5 808.3,754.2 812.9,774.3 815.2,774.8 817.5,753.7 822.1,773.0 826.7,759.8 831.3,771.5 835.9,772.0 838.2,754.0 842.8,765.0 847.4,761.0 854.3,774.3 858.9,774.7 865.8,758.2 870.4,765.5 872.7,764.3 875.0,754.6 879.6,774.0 884.2,763.3 888.8,772.6 891.1,755.6 893.4,771.9 898.0,753.7 902.6,766.6 909.5,756.0 911.8,776.7 918.7,759.0 921.0,759.2 927.9,774.4 932.5,754.5 934.8,777.1 937.1,776.1 939.4,763.5 944.0,771.5 948.6,753.7 953.2,779.0 955.5,762.4 957.8,776.5 960.1,758.1 967.0,771.3 969.3,757.0 971.6,755.8 976.2,771.7 978.5,758.2 980.8,758.0 985.4,775.9 992.3,753.6 999.2,778.0 1001.5,756.2 1006.1,766.2 1008.4,766.1 1015.3,755.9 1017.6,775.2 1024.5,755.1 1026.8,777.5 1031.4,755.1 1033.7,774.8 1040.6,753.6 1045.2,752.9 1049.8,773.7 1052.1,757.2 1054.4,777.3 1056.7,775.9 1059.0,762.1 1063.6,775.5 1065.9,775.0 1068.2,756.9 1070.5,756.2 1075.1,777.0 1079.7,754.2 1082.0,774.7 1088.9,762.7 1093.5,772.1 1100.4,758.9 1102.7,758.8 1107.3,772.8 1109.6,756.3 1111.9,777.9 1118.8,764.9 1123.4,772.2 1128.0,754.4 1132.6,755.6 1134.9,777.4 1139.5,763.4 1144.1,771.9 1148.7,755.6 1151.0,775.4 1155.6,755.7 1160.2,768.8 1164.8,755.8 1167.1,775.4 1169.4,757.8 1176.3,779.2 1178.6,777.9 1180.9,758.8 1187.8,770.5 1192.4,756.3 1194.7,777.7 1197.0,755.6 1201.6,770.4 1206.2,758.1 1213.1,774.2 1215.4,757.9 1217.7,765.2 1220.0,753.8 1226.9,769.1 1231.5,756.8 1236.1,776.1 1238.4,754.3 1243.0,772.6 1245.3,773.0 1252.2,753.9 1254.5,770.7 1259.1,758.6 1266.0,777.8 1268.3,754.4 1270.6,754.0 1272.9,774.7 1275.2,758.6 1282.1,770.1 1284.4,755.3 1286.7,754.5 1291.3,771.0 1295.9,753.5 1300.5,764.5 1307.4,753.6 1312.0,772.7 1314.3,756.2 1316.6,773.5 1318.9,753.8 1321.2,777.1 1323.5,777.3 1328.1,762.8 1330.4,774.0 1332.7,760.0 1335.0,774.9 1339.6,758.8 1344.2,757.4 1348.8,773.4 1355.7,753.6 1360.3,754.7 1367.2,776.4 1369.5,776.2 1376.4,758.3 1381.0,777.9 1385.6,776.9 1387.9,758.8 1390.2,772.6 1394.8,772.0 1401.7,757.7 1404.0,774.2 1406.3,753.6 1410.9,772.2 1415.5,759.2 1420.1,758.0 1422.4,774.2 1424.7,758.4 1429.3,771.9 1433.9,758.5 1438.5,765.7 1443.1,753.6 1445.4,777.0 1447.7,776.8 1452.3,754.8 1456.9,776.9 1459.2,755.9 1461.5,757.2 1466.1,773.3 1470.7,765.9 1473.0,776.8 1475.3,756.4 1479.9,775.7 1482.2,753.8 1484.5,754.0 1486.8,771.7 1489.1,755.4 1493.7,777.3 1496.0,755.6 1498.3,776.0 1500.6,756.6 1505.2,771.1 1509.8,771.6 1516.7,756.7 1521.3,757.1 1523.6,776.9 1530.5,754.0 1535.1,753.4 1539.7,769.0 1544.3,767.9 1548.9,755.1 1553.5,755.2 1558.1,772.3 1562.7,771.8 1567.3,754.0 1569.6,774.7 1574.2,754.3 1581.1,779.0 1583.4,755.0 1588.0,765.5 1590.3,757.8 1594.9,772.7 1599.5,757.0 1601.8,771.9 1606.4,773.0 1611.0,757.8 1613.3,777.2 1617.9,765.2 1622.5,774.5 1624.8,753.9 1627.1,754.8 1631.7,774.9 1636.3,773.5 1640.9,757.1 1645.5,770.6 1647.8,754.9 1650.1,779.4 1654.7,755.2 1659.3,778.5 1661.6,757.0 1666.2,769.0 1670.8,767.6 1677.7,755.9 1682.3,773.2 1686.9,773.0 1691.5,756.8 1693.8,756.7 1700.7,774.8 1703.0,754.0 1707.6,776.8 1712.2,756.7 1716.8,775.6 1719.1,755.4 1726.0,770.1 1730.6,755.3 1732.9,773.5 1735.2,754.6 1737.5,779.0 1742.1,755.8 1749.0,778.8 1753.6,756.9 1755.9,776.5 1760.5,758.1 1762.8,758.0 1765.1,772.4 1767.4,772.9 1772.0,755.6 1774.3,778.8 1776.6,779.1 1783.5,761.6 1785.8,774.2 1790.4,757.5 1795.0,765.0 1797.3,764.1 1799.6,756.0 1804.2,775.4 1808.8,776.4 1813.4,758.5 1815.7,778.5 1818.0,763.9 1822.6,765.0 1824.9,771.0 1829.5,758.3 1831.8,768.8 1836.4,770.0 1838.7,753.6 1841.0,778.3 1843.3,765.4 1847.9,770.3 1854.8,757.5 1859.4,758.2 1861.7,775.5" stroke="#4f7fd6" stroke-width="1.500" fill="none" stroke-linejoin="round"/>
<g clip-path="url(#cpAxis)">
<path d="M1883 123H1889" stroke="#787b86" stroke-width="1.200"/><text x="1896" y="123.5" font-size="16.2" fill="#787b86" text-anchor="start" font-weight="400" dominant-baseline="central" >7.0</text>
<path d="M1883 248H1889" stroke="#787b86" stroke-width="1.200"/><text x="1896" y="248.5" font-size="16.2" fill="#787b86" text-anchor="start" font-weight="400" dominant-baseline="central" >5.00000</text>
<path d="M1883 311H1889" stroke="#787b86" stroke-width="1.200"/><text x="1896" y="311.5" font-size="16.2" fill="#787b86" text-anchor="start" font-weight="400" dominant-baseline="central" >4.00000</text>
<path d="M1883 373.7H1889" stroke="#787b86" stroke-width="1.200"/><text x="1896" y="374.2" font-size="16.2" fill="#787b86" text-anchor="start" font-weight="400" dominant-baseline="central" >3.00000</text>
<path d="M1883 436.3H1889" stroke="#787b86" stroke-width="1.200"/><text x="1896" y="436.8" font-size="16.2" fill="#787b86" text-anchor="start" font-weight="400" dominant-baseline="central" >2.00000</text>
<path d="M1883 498.8H1889" stroke="#787b86" stroke-width="1.200"/><text x="1896" y="499.3" font-size="16.2" fill="#787b86" text-anchor="start" font-weight="400" dominant-baseline="central" >1.00000</text>
<path d="M1883 538.5H1889" stroke="#787b86" stroke-width="1.200"/><text x="1896" y="539.0" font-size="16.2" fill="#787b86" text-anchor="start" font-weight="400" dominant-baseline="central" >0.00000</text>
<path d="M1883 594.5H1889" stroke="#787b86" stroke-width="1.200"/><text x="1896" y="595.0" font-size="16.2" fill="#787b86" text-anchor="start" font-weight="400" dominant-baseline="central" >0.00000</text>
<rect x="1890" y="599.500" width="80" height="16" fill="#000"/>
<path d="M1883 608H1889" stroke="#787b86" stroke-width="1.200"/><text x="1896" y="608.5" font-size="16.2" fill="#787b86" text-anchor="start" font-weight="400" dominant-baseline="central" >100.00</text>
<path d="M1883 665.5H1889" stroke="#787b86" stroke-width="1.200"/><text x="1896" y="666.0" font-size="16.2" fill="#787b86" text-anchor="start" font-weight="400" dominant-baseline="central" >0.00</text>
<rect x="1890" y="673.800" width="86" height="13" fill="#000"/>
<path d="M1883 677.5H1889" stroke="#787b86" stroke-width="1.200"/><text x="1896" y="678.0" font-size="16.2" fill="#787b86" text-anchor="start" font-weight="400" dominant-baseline="central" >100.00000</text>
<rect x="1883" y="673.800" width="94" height="0.100" fill="#000"/>
<path d="M1883 745H1889" stroke="#787b86" stroke-width="1.200"/><text x="1896" y="745.5" font-size="16.2" fill="#787b86" text-anchor="start" font-weight="400" dominant-baseline="central" >0.00000</text>
<path d="M1883 778.3H1889" stroke="#787b86" stroke-width="1.200"/><text x="1896" y="778.8" font-size="16.2" fill="#787b86" text-anchor="start" font-weight="400" dominant-baseline="central" >0.00</text>
</g>
<path d="M1883 673.2H1977" stroke="#4a4a4a" stroke-width="1.300"/>
<path d="M1883 748H1977" stroke="#4a4a4a" stroke-width="1.300"/>
<rect x="1883" y="748.700" width="94" height="2.500" fill="#000"/>
<rect x="1883" y="664" width="94" height="0" fill="#000"/>
<rect x="1882" y="168" width="81.500" height="24.300" fill="#c8c8c8"/>
<text x="1896" y="180.5" font-size="16.2" fill="#131722" text-anchor="start" font-weight="400" dominant-baseline="central" >6.08000</text>
<rect x="1882" y="193.500" width="81.500" height="24.300" fill="#c8c8c8"/>
<text x="1889" y="206" font-size="16.2" fill="#131722" text-anchor="start" font-weight="400" dominant-baseline="central" >02:39:05</text>
<rect x="1909" y="117" width="42.700" height="27" rx="4" fill="#131722" stroke="#3a3e4a" stroke-width="1.200"/>
<text x="1930.4" y="131" font-size="14.8" fill="#d1d4dc" text-anchor="middle" font-weight="400" dominant-baseline="central" >USD</text>
<path d="M134.4 784.500V788.500" stroke="#787b86" stroke-width="1.200"/>
<text x="134.4" y="805.3" font-size="16.6" fill="#6f727d" text-anchor="middle" font-weight="400" dominant-baseline="central" >Jul</text>
<path d="M276.9 784.500V788.500" stroke="#787b86" stroke-width="1.200"/>
<text x="276.9" y="805.3" font-size="16.6" fill="#6f727d" text-anchor="middle" font-weight="400" dominant-baseline="central" >Aug</text>
<path d="M419 784.500V788.500" stroke="#787b86" stroke-width="1.200"/>
<text x="419" y="805.3" font-size="16.6" fill="#6f727d" text-anchor="middle" font-weight="400" dominant-baseline="central" >Sep</text>
<path d="M557.6 784.500V788.500" stroke="#787b86" stroke-width="1.200"/>
<text x="557.6" y="805.3" font-size="16.6" fill="#6f727d" text-anchor="middle" font-weight="400" dominant-baseline="central" >Oct</text>
<path d="M699.8 784.500V788.500" stroke="#787b86" stroke-width="1.200"/>
<text x="699.8" y="805.3" font-size="16.6" fill="#6f727d" text-anchor="middle" font-weight="400" dominant-baseline="central" >Nov</text>
<path d="M837.6 784.500V788.500" stroke="#787b86" stroke-width="1.200"/>
<text x="837.6" y="805.3" font-size="16.6" fill="#6f727d" text-anchor="middle" font-weight="400" dominant-baseline="central" >Dec</text>
<path d="M980.6 784.500V788.500" stroke="#787b86" stroke-width="1.200"/>
<text x="980.6" y="805.3" font-size="16.6" fill="#8d909a" text-anchor="middle" font-weight="700" dominant-baseline="central" >2020</text>
<path d="M1123 784.500V788.500" stroke="#787b86" stroke-width="1.200"/>
<text x="1123" y="805.3" font-size="16.6" fill="#6f727d" text-anchor="middle" font-weight="400" dominant-baseline="central" >Feb</text>
<path d="M1256 784.500V788.500" stroke="#787b86" stroke-width="1.200"/>
<text x="1256" y="805.3" font-size="16.6" fill="#6f727d" text-anchor="middle" font-weight="400" dominant-baseline="central" >Mar</text>
<path d="M1398.4 784.500V788.500" stroke="#787b86" stroke-width="1.200"/>
<text x="1398.4" y="805.3" font-size="16.6" fill="#6f727d" text-anchor="middle" font-weight="400" dominant-baseline="central" >Apr</text>
<path d="M1536.6 784.500V788.500" stroke="#787b86" stroke-width="1.200"/>
<text x="1536.6" y="805.3" font-size="16.6" fill="#6f727d" text-anchor="middle" font-weight="400" dominant-baseline="central" >May</text>
<path d="M1679 784.500V788.500" stroke="#787b86" stroke-width="1.200"/>
<text x="1679" y="805.3" font-size="16.6" fill="#6f727d" text-anchor="middle" font-weight="400" dominant-baseline="central" >Jun</text>
<path d="M1817.4 784.500V788.500" stroke="#787b86" stroke-width="1.200"/>
<text x="1817.4" y="805.3" font-size="16.6" fill="#6f727d" text-anchor="middle" font-weight="400" dominant-baseline="central" >Jul</text>
<circle cx="1930.400" cy="804.800" r="6.800" fill="none" stroke="#b2b5be" stroke-width="1.500"/><path d="M1938.7 804.8L1941.7 804.8M1936.3 810.7L1938.4 812.8M1930.4 813.1L1930.4 816.1M1924.5 810.7L1922.4 812.8M1922.1 804.8L1919.1 804.8M1924.5 798.9L1922.4 796.8M1930.4 796.5L1930.4 793.5M1936.3 798.9L1938.4 796.8" stroke="#b2b5be" stroke-width="1.500"/>
<text x="93" y="131.5" font-size="20.3" fill="#5d606b" text-anchor="start" font-weight="400" dominant-baseline="central" >LINK/USD · 12h · COINBASE</text>
<circle cx="401" cy="130.500" r="12" fill="#0a1a1c"/><circle cx="401" cy="130.500" r="5.800" fill="#17a2a2"/>
<text x="438" y="130.8" font-size="16.75" fill="#fff" text-anchor="start" font-weight="400" dominant-baseline="central" ><tspan fill="#5d606b">O</tspan><tspan fill="#b8bbc4">6.00115</tspan></text>
<text x="527" y="130.8" font-size="16.75" fill="#fff" text-anchor="start" font-weight="400" dominant-baseline="central" ><tspan fill="#5d606b">H</tspan><tspan fill="#b8bbc4">6.20000</tspan></text>
<text x="615.5" y="130.8" font-size="16.75" fill="#fff" text-anchor="start" font-weight="400" dominant-baseline="central" ><tspan fill="#5d606b">L</tspan><tspan fill="#b8bbc4">6.00004</tspan></text>
<text x="701.0" y="130.8" font-size="16.75" fill="#fff" text-anchor="start" font-weight="400" dominant-baseline="central" ><tspan fill="#5d606b">C</tspan><tspan fill="#b8bbc4">6.08000</tspan></text>
<rect x="93.500" y="152" width="45" height="28" rx="3.500" fill="#000" stroke="#4a4a4a" stroke-width="1.200"/>
<path d="M103.500 163.5L108.500 168.5L113.500 163.5" stroke="#d1d4dc" stroke-width="1.700" fill="none" stroke-linecap="round" stroke-linejoin="round"/>
<text x="126" y="166.8" font-size="18" fill="#d1d4dc" text-anchor="middle" font-weight="400" dominant-baseline="central" >7</text>
<rect x="93.500" y="523.5" width="45" height="29.5" rx="3.500" fill="#000" stroke="#4a4a4a" stroke-width="1.200"/>
<path d="M103.500 535.75L108.500 540.75L113.500 535.75" stroke="#d1d4dc" stroke-width="1.700" fill="none" stroke-linecap="round" stroke-linejoin="round"/>
<text x="126" y="539.05" font-size="18" fill="#d1d4dc" text-anchor="middle" font-weight="400" dominant-baseline="central" >3</text>
</svg>
<div id="dates"></div><div id="tabs"></div><div id="stbody"></div><div id="sthead"></div>
<div class="t" style="left:103.5px;top:848.5px;font-size:19.6px;color:#131722;font-weight:400;letter-spacing:-0.3px;transform:translate(0,-50%);">1D</div>
<div class="t" style="left:146px;top:848.5px;font-size:19.6px;color:#131722;font-weight:400;letter-spacing:-0.3px;transform:translate(0,-50%);">5D</div>
<div class="t" style="left:190px;top:848.5px;font-size:19.6px;color:#131722;font-weight:400;letter-spacing:-0.3px;transform:translate(0,-50%);">1M</div>
<div class="t" style="left:234px;top:848.5px;font-size:19.6px;color:#131722;font-weight:400;letter-spacing:-0.3px;transform:translate(0,-50%);">3M</div>
<div class="t" style="left:279px;top:848.5px;font-size:19.6px;color:#131722;font-weight:400;letter-spacing:-0.3px;transform:translate(0,-50%);">6M</div>
<div class="t" style="left:323px;top:848.5px;font-size:19.6px;color:#131722;font-weight:400;letter-spacing:-0.3px;transform:translate(0,-50%);">YTD</div>
<div class="t" style="left:380px;top:848.5px;font-size:19.6px;color:#131722;font-weight:400;letter-spacing:-0.3px;transform:translate(0,-50%);">1Y</div>
<div class="t" style="left:421px;top:848.5px;font-size:19.6px;color:#131722;font-weight:400;letter-spacing:-0.3px;transform:translate(0,-50%);">5Y</div>
<div class="t" style="left:464px;top:848.5px;font-size:19.6px;color:#131722;font-weight:400;letter-spacing:-0.3px;transform:translate(0,-50%);">All</div>
<div class="abs" style="left:511px;top:832px;width:1px;height:30px;background:#e0e3eb"></div>
<svg class="abs" style="left:533.5px;top:835.0px" width="28" height="26" viewBox="0 0 28 26" fill="none" stroke="#2a2e39" stroke-width="1.6" stroke-linecap="round" stroke-linejoin="round"><path d="M3.500 11V6.500a3 3 0 0 1 3-3h15a3 3 0 0 1 3 3V20a3 3 0 0 1-3 3H15M3.500 9h21M9 1.500v4M19 1.500v4M2 17.500h9.500M8 14l3.500 3.500L8 21"/></svg>
<div class="t" style="left:1582.5px;top:848.5px;font-size:19.6px;color:#131722;font-weight:400;letter-spacing:0.05px;transform:translate(0,-50%);">14:20:55 (UTC-7)</div>
<div class="abs" style="left:1758px;top:832px;width:1px;height:30px;background:#e0e3eb"></div>
<div class="t" style="left:1783px;top:848.5px;font-size:19.6px;color:#131722;font-weight:400;transform:translate(0,-50%);">%</div>
<div class="t" style="left:1823px;top:848.5px;font-size:19.6px;color:#131722;font-weight:400;transform:translate(0,-50%);">log</div>
<div class="t" style="left:1870px;top:848.5px;font-size:19.6px;color:#2196f3;font-weight:400;transform:translate(0,-50%);">auto</div>
<svg class="abs" style="left:1930.0px;top:835.0px" width="26" height="26" viewBox="0 0 26 26" fill="none" stroke="#2196f3" stroke-width="1.8" stroke-linecap="round" stroke-linejoin="round"><path d="M2 8V5a3 3 0 0 1 3-3h3M18 2h3a3 3 0 0 1 3 3v3M24 18v3a3 3 0 0 1-3 3h-3M8 24H5a3 3 0 0 1-3-3v-3"/></svg>
<div class="abs" style="left:270.1px;top:880px;width:1px;height:56px;background:#e0e3eb"></div>
<div class="abs" style="left:414.8px;top:880px;width:1px;height:56px;background:#e0e3eb"></div>
<div class="abs" style="left:561.3px;top:880px;width:1px;height:56px;background:#e0e3eb"></div>
<div class="abs" style="left:748.0px;top:880px;width:1px;height:56px;background:#e0e3eb"></div>
<div class="abs" style="left:918.5px;top:880px;width:1px;height:56px;background:#e0e3eb"></div>
<div class="abs" style="left:562.500px;top:930px;width:185.500px;height:8px;background:#fff"></div>
<div class="t" style="left:103px;top:908.5px;font-size:19.6px;color:#131722;font-weight:400;transform:translate(0,-50%);">Stock Screener</div>
<svg class="abs" style="left:246.0px;top:901.5px" width="20" height="14" viewBox="0 0 20 14" fill="none" stroke="#2a2e39" stroke-width="1.7" stroke-linecap="round" stroke-linejoin="round"><path d="M5.5 4.75L10 9.25L14.5 4.75"/></svg>
<div class="t" style="left:294px;top:908.5px;font-size:19.6px;color:#131722;font-weight:400;letter-spacing:0.44px;transform:translate(0,-50%);">Text Notes</div>
<div class="t" style="left:439px;top:908.5px;font-size:19.6px;color:#131722;font-weight:400;letter-spacing:0.28px;transform:translate(0,-50%);">Pine Editor</div>
<div class="t" style="left:585.5px;top:908.5px;font-size:19.6px;color:#2196f3;font-weight:400;letter-spacing:0.44px;transform:translate(0,-50%);">Strategy Tester</div>
<div class="t" style="left:771.5px;top:908.5px;font-size:19.6px;color:#131722;font-weight:400;letter-spacing:0.05px;transform:translate(0,-50%);">Trading Panel</div>
<div class="abs" style="left:1881.500px;top:915px;width:20px;height:2px;background:#2a2e39"></div>
<svg class="abs" style="left:1929.0px;top:896.0px" width="28" height="24" viewBox="0 0 28 24" fill="none" stroke="#2a2e39" stroke-width="1.7" stroke-linecap="round" stroke-linejoin="round"><rect x="1.500" y="1.500" width="25" height="21" rx="3"/><path d="M1.500 6h25"/></svg>
<div class="t" style="left:100px;top:966.5px;font-size:16.6px;color:#131722;font-weight:700;letter-spacing:-0.38px;transform:translate(0,-50%);">Hull MA SROC CRSI SQN Strategy LINKUSD 1...</div>
<svg class="abs" style="left:463.0px;top:960.0px" width="20" height="14" viewBox="0 0 20 14" fill="none" stroke="#2a2e39" stroke-width="1.7" stroke-linecap="round" stroke-linejoin="round"><path d="M5.5 4.75L10 9.25L14.5 4.75"/></svg>
<svg class="abs" style="left:511.5px;top:954.5px" width="24" height="24" viewBox="0 0 24 24" fill="none" stroke="#787b86" stroke-width="1.4" stroke-linecap="round" stroke-linejoin="round"><circle cx="12" cy="12" r="3.600"/><path d="M21.95 14.25L20.63 17.44L18.00 16.98L16.98 18.00L17.44 20.63L14.25 21.95L12.72 19.77L11.28 19.77L9.75 21.95L6.56 20.63L7.02 18.00L6.00 16.98L3.37 17.44L2.05 14.25L4.23 12.72L4.23 11.28L2.05 9.75L3.37 6.56L6.00 7.02L7.02 6.00L6.56 3.37L9.75 2.05L11.28 4.23L12.72 4.23L14.25 2.05L17.44 3.37L16.98 6.00L18.00 7.02L20.63 6.56L21.95 9.75L19.77 11.28L19.77 12.72Z"/></svg>
<svg class="abs" style="left:553.0px;top:953.0px" width="28" height="27" viewBox="0 0 28 27" fill="none" stroke="#787b86" stroke-width="1.4" stroke-linecap="round" stroke-linejoin="round"><path d="M19 22a9 9 0 1 1 4.500-8"/><path d="M13.500 9v5.500h-4"/><path d="M4 7a4 4 0 0 1 5.600-4.500M23.500 7a4 4 0 0 0-5.600-4.500"/><path d="M22.500 16.500v8M18.500 20.500h8"/></svg>
<div class="t" style="left:1352.5px;top:966.5px;font-size:17px;color:#2196f3;font-weight:400;letter-spacing:0.08px;transform:translate(0,-50%);">Overview</div>
<div class="abs" style="left:1352px;top:988.500px;width:72px;height:4px;background:#2196f3"></div>
<div class="t" style="left:1472.5px;top:966.5px;font-size:17px;color:#4a4a4a;font-weight:400;transform:translate(0,-50%);">Performance Summary</div>
<div class="t" style="left:1696px;top:966.5px;font-size:17px;color:#4a4a4a;font-weight:400;letter-spacing:0.2px;transform:translate(0,-50%);">List of Trades</div>
<div class="t" style="left:1850px;top:966.5px;font-size:17px;color:#4a4a4a;font-weight:400;letter-spacing:0.2px;transform:translate(0,-50%);">Export</div>
<svg class="abs" style="left:1924.5px;top:953.5px" width="26" height="26" viewBox="0 0 26 26" fill="none" stroke="#787b86" stroke-width="1.3" stroke-linecap="round" stroke-linejoin="round"><circle cx="13" cy="13" r="10.800"/></svg>
<div class="t" style="left:1937.5px;top:967px;font-size:15px;color:#787b86;font-weight:400;transform:translate(-50%,-50%);">?</div>
<div class="t" style="left:157px;top:1023.5px;font-size:18.6px;color:#4a4a4a;font-weight:700;letter-spacing:1.05px;transform:translate(0,-50%);">$ 344803.92</div>
<div class="t" style="left:157px;top:1048px;font-size:14.6px;color:#4a4a4a;font-weight:400;letter-spacing:-0.1px;transform:translate(0,-50%);">1379.22 %</div>
<div class="t" style="left:157px;top:1066.5px;font-size:15.4px;color:#8c8c8c;font-weight:400;letter-spacing:0.48px;transform:translate(0,-50%);">Net Profit</div>
<div class="t" style="left:419px;top:1023.5px;font-size:18.6px;color:#4a4a4a;font-weight:700;letter-spacing:1.05px;transform:translate(0,-50%);">17</div>
<div class="t" style="left:419px;top:1066.5px;font-size:15.4px;color:#8c8c8c;font-weight:400;letter-spacing:0.16px;transform:translate(0,-50%);">Total Closed Trades</div>
<div class="t" style="left:680px;top:1023.5px;font-size:18.6px;color:#4a4a4a;font-weight:700;letter-spacing:1.05px;transform:translate(0,-50%);">94.12 %</div>
<div class="t" style="left:680px;top:1066.5px;font-size:15.4px;color:#8c8c8c;font-weight:400;letter-spacing:0.4px;transform:translate(0,-50%);">Percent Profitable</div>
<div class="t" style="left:942px;top:1023.5px;font-size:18.6px;color:#4a4a4a;font-weight:700;letter-spacing:1.05px;transform:translate(0,-50%);">223.195</div>
<div class="t" style="left:942px;top:1066.5px;font-size:15.4px;color:#8c8c8c;font-weight:400;letter-spacing:0.47px;transform:translate(0,-50%);">Profit Factor</div>
<div class="t" style="left:1205px;top:1023.5px;font-size:18.6px;color:#e0262b;font-weight:700;letter-spacing:1.05px;transform:translate(0,-50%);">$ 1706.61</div>
<div class="t" style="left:1205px;top:1048px;font-size:14.6px;color:#e0262b;font-weight:400;letter-spacing:-0.1px;transform:translate(0,-50%);">6.24 %</div>
<div class="t" style="left:1205px;top:1066.5px;font-size:15.4px;color:#8c8c8c;font-weight:400;letter-spacing:-0.09px;transform:translate(0,-50%);">Max Drawdown</div>
<div class="t" style="left:1467px;top:1023.5px;font-size:18.6px;color:#4a4a4a;font-weight:700;letter-spacing:1.05px;transform:translate(0,-50%);">$ 20282.58</div>
<div class="t" style="left:1467px;top:1048px;font-size:14.6px;color:#4a4a4a;font-weight:400;letter-spacing:-0.1px;transform:translate(0,-50%);">81.13 %</div>
<div class="t" style="left:1467px;top:1066.5px;font-size:15.4px;color:#8c8c8c;font-weight:400;transform:translate(0,-50%);">Avg Trade</div>
<div class="t" style="left:1729px;top:1023.5px;font-size:18.6px;color:#4a4a4a;font-weight:700;letter-spacing:1.05px;transform:translate(0,-50%);">15</div>
<div class="t" style="left:1729px;top:1066.5px;font-size:15.4px;color:#8c8c8c;font-weight:400;letter-spacing:-0.05px;transform:translate(0,-50%);">Avg # Bars in Trades</div>
<div class="t" style="left:1030px;top:1049px;font-size:27px;color:#b5b5b5;font-weight:400;transform:translate(-50%,-50%);font-style:italic;">No data</div>
<div class="abs" style="left:175px;top:1108px;width:1720px;height:30px;border-radius:14px;box-shadow:0 0 32px 13px rgba(0,0,0,.22)"></div>
<div class="abs" style="left:150px;top:1097.500px;width:1762px;height:1.500px;background:rgba(110,110,110,.55)"></div>
<div class="abs" style="left:571px;top:1091px;width:71px;height:10px;background:#0c2a2e;border:2.500px solid #22d3ee"></div>
<div class="abs" style="left:0;top:1092px;width:7px;height:7px;background:radial-gradient(circle at 100% 0,rgba(0,0,0,0) 6.400px,#000 7px)"></div>
</div></body></html>
